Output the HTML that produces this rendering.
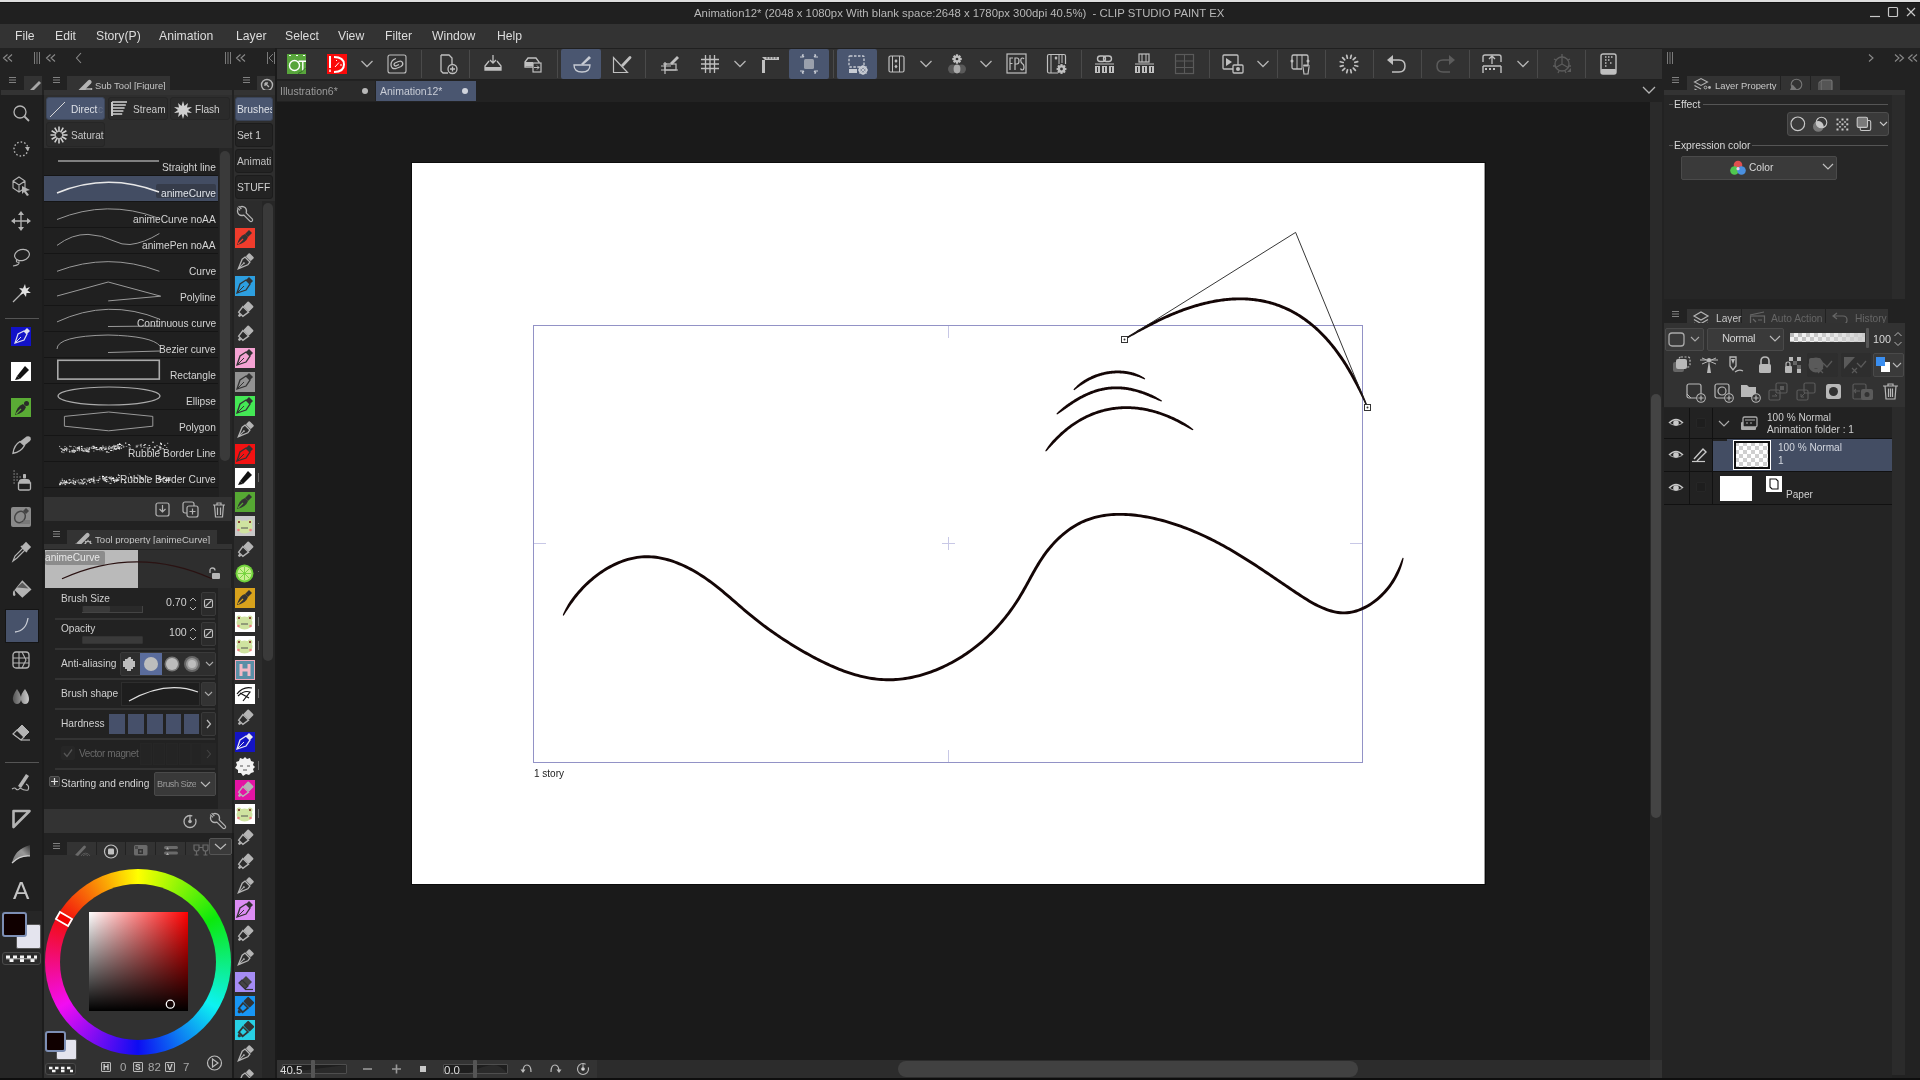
<!DOCTYPE html><html><head><meta charset="utf-8"><style>
*{margin:0;padding:0;box-sizing:border-box}
html,body{width:1920px;height:1080px;overflow:hidden;background:#1a1a1a;font-family:"Liberation Sans",sans-serif;color:#d0d0d0}
.a{position:absolute}
.t{position:absolute;white-space:nowrap;font-size:10.2px;line-height:12px;color:#cfcfcf;will-change:transform}
svg{position:absolute;overflow:visible}
</style></head><body><div class="a" style="left:0px;top:0px;width:1920px;height:2px;background:#dedede;"></div><div class="a" style="left:0px;top:2px;width:1920px;height:1px;background:#131313;"></div><div class="a" style="left:0px;top:3px;width:1920px;height:21px;background:#202020;"></div><div class="a" style="left:0px;top:24px;width:1920px;height:24px;background:#333333;"></div><div class="t" style="left:694px;top:7px;font-size:11.35px;color:#b8b8b8;">Animation12* (2048 x 1080px With blank space:2648 x 1780px 300dpi 40.5%)&nbsp; - CLIP STUDIO PAINT EX</div><svg style="left:1866px;top:6px;" width="54" height="14" viewBox="0 0 54 14"><path d="M4,10.5 H14" stroke="#c8c8c8" stroke-width="1.2"/><rect x="22.5" y="1.5" width="9" height="9" rx="1" fill="none" stroke="#c8c8c8" stroke-width="1.2"/><path d="M41,2 L49,10 M49,2 L41,10" stroke="#c8c8c8" stroke-width="1.2"/></svg><div class="t" style="left:15px;top:30px;font-size:12.2px;color:#dcdcdc;">File</div><div class="t" style="left:55px;top:30px;font-size:12.2px;color:#dcdcdc;">Edit</div><div class="t" style="left:96px;top:30px;font-size:12.2px;color:#dcdcdc;">Story(P)</div><div class="t" style="left:159px;top:30px;font-size:12.2px;color:#dcdcdc;">Animation</div><div class="t" style="left:236px;top:30px;font-size:12.2px;color:#dcdcdc;">Layer</div><div class="t" style="left:285px;top:30px;font-size:12.2px;color:#dcdcdc;">Select</div><div class="t" style="left:338px;top:30px;font-size:12.2px;color:#dcdcdc;">View</div><div class="t" style="left:385px;top:30px;font-size:12.2px;color:#dcdcdc;">Filter</div><div class="t" style="left:432px;top:30px;font-size:12.2px;color:#dcdcdc;">Window</div><div class="t" style="left:497px;top:30px;font-size:12.2px;color:#dcdcdc;">Help</div><div class="a" style="left:0px;top:48px;width:1920px;height:32px;background:#202020;"></div><div class="a" style="left:277px;top:49px;width:1385px;height:30px;background:#323232;"></div><div class="a" style="left:287px;top:54px;width:19px;height:20px;background:#58a53c;"></div><svg style="left:287px;top:54px;" width="19" height="20" viewBox="0 0 19 20"><circle cx="7.5" cy="11.5" r="5" fill="none" stroke="#fff" stroke-width="1.4"/><path d="M11.5,7.3 H19 M15.8,7.3 V16.5" stroke="#fff" stroke-width="1.4"/><path d="M2,1.5 h2 M9,1.5 h2 M16,1.5 h2" stroke="#fff" stroke-width="1"/><path d="M11,19.5 Q16,18 18.5,14" fill="none" stroke="#2f6e22" stroke-width="1"/></svg><div class="a" style="left:327px;top:54px;width:20px;height:20px;background:#fb0a0a;"></div><svg style="left:327px;top:54px;" width="20" height="20" viewBox="0 0 20 20"><path d="M3,2 V14" stroke="#fff" stroke-width="2"/><path d="M3,15.5 V18" stroke="#fff" stroke-width="1.5"/><path d="M7,3 Q17,3 17,10.5 Q17,18 7,18" fill="none" stroke="#fff" stroke-width="2"/><path d="M8,13 L12,8.5 M13,11 h2 M9,6 l1,1" stroke="#fff" stroke-width="1"/></svg><svg style="left:360px;top:59px;" width="14" height="10" viewBox="0 0 14 10"><path d="M1.5,2 L7,7.5 L12.5,2" fill="none" stroke="#b4b4b4" stroke-width="1.3"/></svg><svg style="left:387px;top:54px;" width="20" height="20" viewBox="0 0 20 20"><rect x="1" y="1" width="18" height="18" rx="2" fill="none" stroke="#c0c0c0" stroke-width="1.1"/><path d="M9,4.5 Q4,6 4,11 Q4.5,15.5 9,14.5 L14,12.5 Q16.5,11 15.5,8.5 Q14.5,6.5 11.5,7.5 L8,9 Q6.5,10 7.5,11.5 Q8.5,12.5 10,11.5 L12,10.5" fill="none" stroke="#c0c0c0" stroke-width="1.3"/></svg><div class="a" style="left:421px;top:50px;width:1px;height:28px;background:#4a4a4a;"></div><svg style="left:438px;top:53px;" width="20" height="22" viewBox="0 0 20 22"><path d="M3,2 H11 L14,5 V11 M3,2 V18 L5,20 H10" fill="none" stroke="#c0c0c0" stroke-width="1.3"/><circle cx="14.5" cy="16" r="4.5" fill="#323232" stroke="#c0c0c0" stroke-width="1.3"/><path d="M14.5,13.5 V18.5 M12,16 H17" stroke="#c0c0c0" stroke-width="1.3"/></svg><div class="a" style="left:469px;top:50px;width:1px;height:28px;background:#4a4a4a;"></div><svg style="left:483px;top:53px;" width="20" height="22" viewBox="0 0 20 22"><path d="M10,2 V10 M7,7 L10,10 L13,7" fill="none" stroke="#c0c0c0" stroke-width="1.3"/><path d="M6,8 L2,13 V17 H18 V13 L14,8" fill="none" stroke="#c0c0c0" stroke-width="1.3"/><rect x="2" y="14" width="16" height="3" fill="#c0c0c0"/></svg><svg style="left:523px;top:53px;" width="20" height="22" viewBox="0 0 20 22"><path d="M2,9 L5,5 H13 L16,9 V14 H2 Z" fill="none" stroke="#c0c0c0" stroke-width="1.3"/><rect x="2" y="9" width="8" height="4" fill="#c0c0c0"/><rect x="10" y="10" width="8" height="9" fill="#323232" stroke="#c0c0c0" stroke-width="1.2"/><path d="M11,14.5 H16 M14,12.5 L16,14.5 L14,16.5" fill="none" stroke="#c0c0c0" stroke-width="1"/></svg><div class="a" style="left:557px;top:50px;width:1px;height:28px;background:#4a4a4a;"></div><div class="a" style="left:561px;top:49px;width:40px;height:30px;background:#4a5670;border-radius:2px"></div><svg style="left:572px;top:53px;" width="20" height="22" viewBox="0 0 20 22"><path d="M2,12 Q10,12 18,12 Q18,19 10,19 Q2,19 2,12 Z" fill="none" stroke="#c8ccd4" stroke-width="1.3"/><path d="M9,11 L17,3 L19,5 L11,12" fill="#c8ccd4"/></svg><svg style="left:612px;top:53px;" width="20" height="22" viewBox="0 0 20 22"><path d="M1.5,4.5 V19.5 H15.5 Z" fill="none" stroke="#c0c0c0" stroke-width="1.2"/><path d="M9,12 L17,3.5 Q18,2.5 19,3.5 Q20,4.5 19,5.5 L11,14 Z" fill="#c0c0c0"/></svg><div class="a" style="left:645px;top:50px;width:1px;height:28px;background:#4a4a4a;"></div><svg style="left:659px;top:53px;" width="22" height="22" viewBox="0 0 22 22"><path d="M2,17 H19 M6,9 V21 M6,17 V11 M4,11 H8 M2,13 H12" fill="none" stroke="#c0c0c0" stroke-width="1.2"/><rect x="6" y="11" width="11" height="6" fill="none" stroke="#c0c0c0" stroke-width="1.2"/><path d="M11,10 L18,3 L20,5 L13,12 Z" fill="#c0c0c0"/></svg><svg style="left:700px;top:53px;" width="20" height="22" viewBox="0 0 20 22"><path d="M5.5,2 V20 M10,2 V20 M14.5,2 V20 M1,6.5 H19 M1,11 H19 M1,15.5 H19" stroke="#c0c0c0" stroke-width="1.3"/></svg><svg style="left:733px;top:59px;" width="14" height="10" viewBox="0 0 14 10"><path d="M1.5,2 L7,7.5 L12.5,2" fill="none" stroke="#b4b4b4" stroke-width="1.3"/></svg><svg style="left:760px;top:53px;" width="20" height="22" viewBox="0 0 20 22"><path d="M2,4 H19 V7 H2 Z M2,4 V20 H5 V7" fill="#c0c0c0"/><path d="M7,4 V6 M10,4 V6 M13,4 V6 M16,4 V6" stroke="#323232" stroke-width="0.8"/></svg><div class="a" style="left:789px;top:49px;width:40px;height:30px;background:#4a5670;border-radius:2px"></div><svg style="left:798px;top:53px;" width="22" height="22" viewBox="0 0 22 22"><rect x="6" y="6" width="10" height="10" rx="1.5" fill="#9aa0ac"/><path d="M2,4 H5 V1 M17,1 V4 H20 M2,18 H5 V21 M17,21 V18 H20 M4,2 L6,4 M18,2 L16,4 M4,20 L6,18 M18,20 L16,18" fill="none" stroke="#c8ccd4" stroke-width="1.1"/></svg><div class="a" style="left:833px;top:50px;width:1px;height:28px;background:#4a4a4a;"></div><div class="a" style="left:837px;top:49px;width:40px;height:30px;background:#4a5670;border-radius:2px"></div><svg style="left:847px;top:53px;" width="22" height="22" viewBox="0 0 22 22"><rect x="2" y="3" width="15" height="11" rx="1" fill="none" stroke="#c8ccd4" stroke-width="1.3" stroke-dasharray="2.5 1.5"/><rect x="2" y="16" width="8" height="4" fill="#c8ccd4"/><circle cx="16" cy="17" r="3.5" fill="none" stroke="#c8ccd4" stroke-width="2"/><path d="M16,12 V22 M11,17 H21 M12.5,13.5 L19.5,20.5 M19.5,13.5 L12.5,20.5" stroke="#c8ccd4" stroke-width="1"/></svg><svg style="left:888px;top:54px;" width="20" height="22" viewBox="0 0 20 22"><rect x="1" y="2" width="15" height="16" rx="1.5" fill="none" stroke="#c0c0c0" stroke-width="1.2"/><path d="M4.5,2 V18 M11.5,2 V18" stroke="#c0c0c0" stroke-width="1"/><path d="M8,5 L9.6,7 L8,9 L6.4,7 Z M8,10.5 L9.6,12.5 L8,14.5 L6.4,12.5 Z" fill="#c0c0c0"/></svg><svg style="left:919px;top:59px;" width="14" height="10" viewBox="0 0 14 10"><path d="M1.5,2 L7,7.5 L12.5,2" fill="none" stroke="#b4b4b4" stroke-width="1.3"/></svg><svg style="left:946px;top:53px;" width="22" height="22" viewBox="0 0 22 22"><circle cx="11" cy="6" r="3.6" fill="#c0c0c0"/><rect x="13.50" y="4.90" width="2.2" height="2.2" fill="#c0c0c0" transform="rotate(0.0 14.60 6.00)"/><rect x="12.45" y="7.45" width="2.2" height="2.2" fill="#c0c0c0" transform="rotate(45.0 13.55 8.55)"/><rect x="9.90" y="8.50" width="2.2" height="2.2" fill="#c0c0c0" transform="rotate(90.0 11.00 9.60)"/><rect x="7.35" y="7.45" width="2.2" height="2.2" fill="#c0c0c0" transform="rotate(135.0 8.45 8.55)"/><rect x="6.30" y="4.90" width="2.2" height="2.2" fill="#c0c0c0" transform="rotate(180.0 7.40 6.00)"/><rect x="7.35" y="2.35" width="2.2" height="2.2" fill="#c0c0c0" transform="rotate(225.0 8.45 3.45)"/><rect x="9.90" y="1.30" width="2.2" height="2.2" fill="#c0c0c0" transform="rotate(270.0 11.00 2.40)"/><rect x="12.45" y="2.35" width="2.2" height="2.2" fill="#c0c0c0" transform="rotate(315.0 13.55 3.45)"/><circle cx="11" cy="6" r="1.37" fill="#323232"/><circle cx="6.5" cy="16" r="4.5" fill="#5a5a5a"/><circle cx="15.5" cy="16" r="4.5" fill="#5a5a5a"/><ellipse cx="11" cy="16" rx="3.4" ry="4.4" fill="#aaaaaa"/></svg><svg style="left:979px;top:59px;" width="14" height="10" viewBox="0 0 14 10"><path d="M1.5,2 L7,7.5 L12.5,2" fill="none" stroke="#b4b4b4" stroke-width="1.3"/></svg><svg style="left:1006px;top:53px;" width="22" height="22" viewBox="0 0 22 22"><rect x="1" y="1" width="19" height="19" fill="none" stroke="#c0c0c0" stroke-width="1.2"/><path d="M7,5 H4 V17 M4,10.5 H6.5 M9,17 V5 H11 Q13,5 13,8 Q13,11 11,11 H9 M18,6 Q17.5,5 16.3,5 Q14.8,5 14.8,7.5 Q14.8,9.5 16.3,10.5 Q18,11.5 18,14 Q18,17 16.3,17 Q15,17 14.6,15.5" fill="none" stroke="#c0c0c0" stroke-width="1.2"/></svg><svg style="left:1046px;top:53px;" width="22" height="22" viewBox="0 0 22 22"><path d="M12,20 H3 Q1.5,20 1.5,18.5 V3 Q1.5,1.5 3,1.5 H18 Q19.5,1.5 19.5,3 V11" fill="none" stroke="#c0c0c0" stroke-width="1.2"/><path d="M5,1.5 V20 M13,1.5 V11 M16,1.5 V10" stroke="#c0c0c0" stroke-width="1"/><path d="M10,3 L11.5,5 L10,7 L8.5,5 Z" fill="#c0c0c0"/><circle cx="15.5" cy="16" r="3.8" fill="#c0c0c0"/><rect x="18.20" y="14.90" width="2.2" height="2.2" fill="#c0c0c0" transform="rotate(0.0 19.30 16.00)"/><rect x="17.09" y="17.59" width="2.2" height="2.2" fill="#c0c0c0" transform="rotate(45.0 18.19 18.69)"/><rect x="14.40" y="18.70" width="2.2" height="2.2" fill="#c0c0c0" transform="rotate(90.0 15.50 19.80)"/><rect x="11.71" y="17.59" width="2.2" height="2.2" fill="#c0c0c0" transform="rotate(135.0 12.81 18.69)"/><rect x="10.60" y="14.90" width="2.2" height="2.2" fill="#c0c0c0" transform="rotate(180.0 11.70 16.00)"/><rect x="11.71" y="12.21" width="2.2" height="2.2" fill="#c0c0c0" transform="rotate(225.0 12.81 13.31)"/><rect x="14.40" y="11.10" width="2.2" height="2.2" fill="#c0c0c0" transform="rotate(270.0 15.50 12.20)"/><rect x="17.09" y="12.21" width="2.2" height="2.2" fill="#c0c0c0" transform="rotate(315.0 18.19 13.31)"/><circle cx="15.5" cy="16" r="1.44" fill="#323232"/></svg><div class="a" style="left:1081px;top:50px;width:1px;height:28px;background:#4a4a4a;"></div><svg style="left:1094px;top:53px;" width="22" height="22" viewBox="0 0 22 22"><rect x="3.5" y="3" width="8" height="5.5" rx="2.75" fill="none" stroke="#c0c0c0" stroke-width="1.4"/><rect x="9.5" y="3" width="8" height="5.5" rx="2.75" fill="none" stroke="#c0c0c0" stroke-width="1.4"/><path d="M1,11 H20" stroke="#c0c0c0" stroke-width="1"/><rect x="1" y="13" width="5" height="7" fill="#c0c0c0"/><rect x="8" y="13" width="5" height="7" fill="#c0c0c0"/><rect x="15" y="13" width="5" height="7" fill="#c0c0c0"/><path d="M3.5,14 V19 M10.5,14 V19 M17.5,14 V19" stroke="#323232" stroke-width="1"/></svg><svg style="left:1134px;top:53px;" width="22" height="22" viewBox="0 0 22 22"><rect x="5" y="1" width="10" height="8" fill="none" stroke="#c0c0c0" stroke-width="1.2"/><path d="M8,1 V9 M12,1 V9 M1,11 H20" stroke="#c0c0c0" stroke-width="1"/><rect x="1" y="13" width="5" height="7" fill="#c0c0c0"/><rect x="8" y="13" width="5" height="7" fill="#c0c0c0"/><rect x="15" y="13" width="5" height="7" fill="#c0c0c0"/><path d="M3.5,14 V19 M10.5,14 V19 M17.5,14 V19" stroke="#323232" stroke-width="1"/></svg><svg style="left:1174px;top:53px;" width="22" height="22" viewBox="0 0 22 22"><rect x="1.5" y="1.5" width="18" height="19" fill="none" stroke="#5a5a5a" stroke-width="1.2"/><path d="M1.5,8 H19.5 M1.5,14.5 H19.5 M10.5,1.5 V20.5" stroke="#5a5a5a" stroke-width="1.1"/></svg><div class="a" style="left:1209px;top:50px;width:1px;height:28px;background:#4a4a4a;"></div><svg style="left:1222px;top:53px;" width="22" height="22" viewBox="0 0 22 22"><rect x="1" y="2" width="15" height="14" rx="1" fill="none" stroke="#c0c0c0" stroke-width="1.3"/><path d="M4,5 V13 L10,9 Z" fill="#c0c0c0"/><rect x="11" y="12" width="10" height="8" rx="1" fill="#323232" stroke="#c0c0c0" stroke-width="1.3"/><circle cx="16" cy="16" r="2" fill="#c0c0c0"/></svg><svg style="left:1256px;top:59px;" width="14" height="10" viewBox="0 0 14 10"><path d="M1.5,2 L7,7.5 L12.5,2" fill="none" stroke="#b4b4b4" stroke-width="1.3"/></svg><div class="a" style="left:1277px;top:50px;width:1px;height:28px;background:#4a4a4a;"></div><svg style="left:1290px;top:53px;" width="22" height="22" viewBox="0 0 22 22"><rect x="2" y="2" width="16" height="14" rx="1.5" fill="none" stroke="#c0c0c0" stroke-width="1.3"/><path d="M7,2 V16 M12,2 V16" stroke="#c0c0c0" stroke-width="1"/><circle cx="2" cy="8" r="1.5" fill="#c0c0c0"/><circle cx="18" cy="8" r="1.5" fill="#c0c0c0"/><rect x="12" y="12" width="8" height="9" fill="#323232"/><path d="M12,13 H20 M14,13 V12 H18 V13 M13,14 L14,21 H18 L19,14" fill="none" stroke="#c0c0c0" stroke-width="1.2"/></svg><div class="a" style="left:1325px;top:50px;width:1px;height:28px;background:#4a4a4a;"></div><svg style="left:1338px;top:53px;" width="22" height="22" viewBox="0 0 22 22"><path d="M16.8,12.5 L19.7,13.3" stroke="#c0c0c0" stroke-width="1.7" stroke-linecap="round"/><path d="M15.3,15.2 L17.4,17.4" stroke="#c0c0c0" stroke-width="1.7" stroke-linecap="round"/><path d="M12.6,16.8 L13.3,19.7" stroke="#c0c0c0" stroke-width="1.7" stroke-linecap="round"/><path d="M9.5,16.8 L8.7,19.7" stroke="#c0c0c0" stroke-width="1.7" stroke-linecap="round"/><path d="M6.8,15.3 L4.6,17.4" stroke="#c0c0c0" stroke-width="1.7" stroke-linecap="round"/><path d="M5.2,12.6 L2.3,13.3" stroke="#c0c0c0" stroke-width="1.7" stroke-linecap="round"/><path d="M5.2,9.5 L2.3,8.7" stroke="#c0c0c0" stroke-width="1.7" stroke-linecap="round"/><path d="M6.7,6.8 L4.6,4.6" stroke="#c0c0c0" stroke-width="1.7" stroke-linecap="round"/><path d="M9.4,5.2 L8.7,2.3" stroke="#c0c0c0" stroke-width="1.7" stroke-linecap="round"/><path d="M12.5,5.2 L13.3,2.3" stroke="#c0c0c0" stroke-width="1.7" stroke-linecap="round"/><path d="M15.2,6.7 L17.4,4.6" stroke="#c0c0c0" stroke-width="1.7" stroke-linecap="round"/><path d="M16.8,9.4 L19.7,8.7" stroke="#c0c0c0" stroke-width="1.7" stroke-linecap="round"/></svg><div class="a" style="left:1373px;top:50px;width:1px;height:28px;background:#4a4a4a;"></div><svg style="left:1386px;top:53px;" width="22" height="22" viewBox="0 0 22 22"><path d="M5,7 H13 Q19,7 19,13 Q19,19 13,19 H6" fill="none" stroke="#c0c0c0" stroke-width="1.5"/><path d="M1,7 L7,2 V12 Z" fill="#c0c0c0"/></svg><div class="a" style="left:1421px;top:50px;width:1px;height:28px;background:#4a4a4a;"></div><svg style="left:1434px;top:53px;" width="22" height="22" viewBox="0 0 22 22"><path d="M17,7 H9 Q3,7 3,13 Q3,19 9,19 H16" fill="none" stroke="#5c5c5c" stroke-width="1.5"/><path d="M21,7 L15,2 V12 Z" fill="#5c5c5c"/></svg><div class="a" style="left:1469px;top:50px;width:1px;height:28px;background:#4a4a4a;"></div><svg style="left:1482px;top:53px;" width="22" height="22" viewBox="0 0 22 22"><path d="M1,9 V4 Q1,2 3,2 H17 Q19,2 19,4 V9 M1,13 V20 M19,13 V20 M1,13 H19" fill="none" stroke="#c0c0c0" stroke-width="1.4"/><path d="M10,3 V11 M7,6 L10,3 L13,6" fill="none" stroke="#c0c0c0" stroke-width="1.3"/><path d="M3,16 h2 M7,16 h2 M11,16 h2" stroke="#c0c0c0" stroke-width="2"/></svg><svg style="left:1516px;top:59px;" width="14" height="10" viewBox="0 0 14 10"><path d="M1.5,2 L7,7.5 L12.5,2" fill="none" stroke="#b4b4b4" stroke-width="1.3"/></svg><div class="a" style="left:1537px;top:50px;width:1px;height:28px;background:#4a4a4a;"></div><svg style="left:1551px;top:53px;" width="22" height="22" viewBox="0 0 22 22"><circle cx="11" cy="11" r="7" fill="none" stroke="#5c5c5c" stroke-width="1.3"/><path d="M11,11 V3 M11,11 L18,15 M11,11 L4,15" stroke="#5c5c5c" stroke-width="1.2"/><path d="M11,1 V4 M3,6 L5,7 M19,6 L17,7 M2,13 H4 M18,13 H20 M7,20 L8,18 M15,20 L14,18" stroke="#5c5c5c" stroke-width="1.3"/><path d="M16,19 L20,15 V19 Z" fill="#5c5c5c"/></svg><div class="a" style="left:1585px;top:50px;width:1px;height:28px;background:#4a4a4a;"></div><svg style="left:1598px;top:53px;" width="22" height="22" viewBox="0 0 22 22"><rect x="3" y="1" width="15" height="20" rx="2" fill="none" stroke="#c0c0c0" stroke-width="1.4"/><rect x="3" y="16" width="15" height="5" rx="1" fill="#c0c0c0"/><path d="M7,4 h1.5 M10,4 h1.5 M13,4 h1.5 M7,7 h1.5 M10,7 h1.5 M7,10 h1.5 M12,10 h1.5 M7,13 h1.5" stroke="#c0c0c0" stroke-width="1.5"/></svg><div class="a" style="left:0px;top:48px;width:277px;height:1032px;background:#222222;"></div><svg style="left:2px;top:52px;" width="14" height="12" viewBox="0 0 14 12"><path d="M5.5,2.5 L1.5,6 L5.5,9.5 M10,2.5 L6,6 L10,9.5" fill="none" stroke="#8a8a8a" stroke-width="1.1"/></svg><svg style="left:33px;top:51px;" width="8" height="14" viewBox="0 0 8 14"><path d="M1.5,1 V13 M4,1 V13 M6.5,1 V13" stroke="#7a7a7a" stroke-width="1"/></svg><svg style="left:45px;top:52px;" width="14" height="12" viewBox="0 0 14 12"><path d="M5.5,2.5 L1.5,6 L5.5,9.5 M10,2.5 L6,6 L10,9.5" fill="none" stroke="#8a8a8a" stroke-width="1.1"/></svg><svg style="left:75px;top:52px;" width="8" height="12" viewBox="0 0 8 12"><path d="M6,1 L1.5,6 L6,11" fill="none" stroke="#8a8a8a" stroke-width="1.1"/></svg><svg style="left:224px;top:51px;" width="8" height="14" viewBox="0 0 8 14"><path d="M1.5,1 V13 M4,1 V13 M6.5,1 V13" stroke="#7a7a7a" stroke-width="1"/></svg><svg style="left:235px;top:52px;" width="14" height="12" viewBox="0 0 14 12"><path d="M5.5,2.5 L1.5,6 L5.5,9.5 M10,2.5 L6,6 L10,9.5" fill="none" stroke="#8a8a8a" stroke-width="1.1"/></svg><svg style="left:266px;top:51px;" width="10" height="14" viewBox="0 0 10 14"><path d="M1.5,1 V13 M8.5,1 V13 M7,3 L3,7 L7,11" fill="none" stroke="#7a7a7a" stroke-width="1"/></svg><div class="a" style="left:0px;top:76px;width:42px;height:14px;background:#222222;"></div><div class="a" style="left:24px;top:76px;width:18px;height:14px;background:#333333;"></div><svg style="left:9px;top:77px;" width="10" height="9" viewBox="0 0 10 9"><path d="M0,0.5 H7 M0,3 H7 M0,5.5 H7" stroke="#8c8c8c" stroke-width="0.9"/></svg><svg style="left:26px;top:78px;" width="16" height="14" viewBox="0 0 16 14"><path d="M3,13 L13,3 L15,5 L5,15 Z" fill="#a8a8a8"/><path d="M2,14 L4,13 L3,12 Z" fill="#a8a8a8"/></svg><div class="a" style="left:1px;top:90px;width:41px;height:5px;background:#333333;"></div><div class="a" style="left:0px;top:95px;width:42px;height:816px;background:#202020;"></div><div class="a" style="left:42px;top:95px;width:2px;height:985px;background:#1c1c1c;"></div><div class="a" style="left:0px;top:911px;width:42px;height:169px;background:#262626;"></div><svg style="left:11px;top:103px;" width="20" height="20" viewBox="0 0 20 20"><circle cx="9" cy="9" r="6" fill="none" stroke="#b4b4b4" stroke-width="1.3"/><path d="M13.5,13.5 L18,18" stroke="#b4b4b4" stroke-width="1.8"/></svg><svg style="left:11px;top:139px;" width="20" height="20" viewBox="0 0 20 20"><circle cx="10" cy="10" r="7" fill="none" stroke="#b4b4b4" stroke-width="1.4" stroke-dasharray="1.6 2"/><path d="M14,8 L19,8 L16.5,12 Z" fill="#b4b4b4"/></svg><svg style="left:11px;top:175px;" width="20" height="20" viewBox="0 0 20 20"><path d="M2,6 L8,2 L14,6 L14,13 L8,17 L2,13 Z M2,6 L8,10 L14,6 M8,10 V17" fill="none" stroke="#b4b4b4" stroke-width="1.1"/><path d="M11,11 L19,15 L15,16 L18,20 L16,21 L13,17 L11,19 Z" fill="#b4b4b4"/></svg><svg style="left:11px;top:211px;" width="20" height="20" viewBox="0 0 20 20"><path d="M10,2 V18 M2,10 H18" stroke="#b4b4b4" stroke-width="1.3"/><path d="M10,0 L13,4 H7 Z M10,20 L13,16 H7 Z M0,10 L4,7 V13 Z M20,10 L16,7 V13 Z" fill="#b4b4b4"/></svg><svg style="left:11px;top:247px;" width="20" height="20" viewBox="0 0 20 20"><ellipse cx="11" cy="8" rx="7.5" ry="5.5" fill="none" stroke="#b4b4b4" stroke-width="1.2" transform="rotate(-15 11 8)"/><path d="M6,12 Q4,16 8,15 Q9,18 2,19" fill="none" stroke="#b4b4b4" stroke-width="1.1"/></svg><svg style="left:11px;top:283px;" width="20" height="20" viewBox="0 0 20 20"><path d="M2,19 L11,10" stroke="#b4b4b4" stroke-width="1.3"/><path d="M14,1 L15,5.5 L19,4 L16.5,7.5 L20,10 L15.5,10 L15,14 L12.5,10.5 L9,12 L11,8 L8,5 L12,5.5 Z" fill="#e0e0e0"/></svg><div class="a" style="left:11px;top:327px;width:20px;height:19px;background:#1212c8;"></div><svg style="left:11px;top:327px;" width="20" height="20" viewBox="0 0 20 20"><path d="M4,16 L7,7 L13,4 L16,7 L13,13 Z" fill="none" stroke="#dde" stroke-width="1.2"/><path d="M13,4 L16,1 L19,4 L16,7" fill="#dde"/><path d="M4,16 L10,10" stroke="#dde" stroke-width="1"/></svg><div class="a" style="left:11px;top:362px;width:20px;height:19px;background:#ffffff;"></div><svg style="left:11px;top:362px;" width="20" height="20" viewBox="0 0 20 20"><path d="M6,14 L14,4 L18,8 L9,17 Z" fill="#111"/><path d="M4,18 L6,14 L9,17 Z" fill="#111"/></svg><div class="a" style="left:11px;top:398px;width:20px;height:19px;background:#5aab35;"></div><svg style="left:11px;top:398px;" width="20" height="20" viewBox="0 0 20 20"><path d="M4,17 Q6,8 12,6 L15,9 Q13,15 4,17 Z" fill="#2a2a2a"/><circle cx="15.5" cy="5.5" r="2.5" fill="#2a2a2a"/><path d="M5,16 L10,11" stroke="#5aab35" stroke-width="1.2"/></svg><svg style="left:11px;top:434px;" width="20" height="20" viewBox="0 0 20 20"><path d="M2,19.3 Q3,11 9,7.5 L13.5,11.5 Q10,18 2,19.3 Z" fill="none" stroke="#b4b4b4" stroke-width="1.4"/><path d="M9,7.5 L15.5,2.5 Q18,1.5 19.5,3.5 Q20.5,5.5 19,7 L13.5,11.5 Z" fill="#b4b4b4"/></svg><svg style="left:11px;top:470px;" width="20" height="20" viewBox="0 0 20 20"><path d="M7.5,13 H19.5 V18.5 Q19.5,20 18,20 H9 Q7.5,20 7.5,18.5 Z" fill="none" stroke="#b4b4b4" stroke-width="1.3"/><path d="M7.5,13 Q7.5,9 11,9 H16 Q19.5,9 19.5,13 Z" fill="#b4b4b4"/><rect x="12" y="4" width="3" height="4.5" rx="0.8" fill="#b4b4b4"/><path d="M2.5,1 h1.2 M2.5,4 h1.2 M5.5,4 h1.2 M2.5,7 h1.2 M5.5,7 h1.2 M8.5,7 h1.2 M2.5,10 h1.2 M5.5,10 h1.2 M2.5,13 h1.2" stroke="#b4b4b4" stroke-width="1.2"/></svg><div class="a" style="left:11px;top:507px;width:20px;height:20px;background:#8a8a8a;border-radius:2px"></div><svg style="left:11px;top:506px;" width="20" height="20" viewBox="0 0 20 20"><ellipse cx="9" cy="11" rx="5" ry="6" fill="none" stroke="#444" stroke-width="1.5" transform="rotate(35 9 11)"/><path d="M12,5 L15,2 L18,5 L15,8 Z" fill="#444"/><path d="M10,17 L19,17 M12,15 L19,15" stroke="#666" stroke-width="1"/></svg><svg style="left:11px;top:542px;" width="20" height="20" viewBox="0 0 20 20"><path d="M2,19 L4,14 L12,6 L14,8 L6,16 Z" fill="none" stroke="#b4b4b4" stroke-width="1.2"/><path d="M11,5 L15,1 L19,5 L15,9 Z M10,4 L16,10" fill="#b4b4b4" stroke="#b4b4b4" stroke-width="1.6"/></svg><svg style="left:11px;top:578px;" width="20" height="20" viewBox="0 0 20 20"><path d="M11.3,2.2 L20.5,11.4 L11.3,19.8 L3.5,12 Z" fill="#b4b4b4"/><path d="M6,9.5 L11.3,4.5 L17.5,10.5 Z" fill="#5a5a5a"/><path d="M3.5,12 Q1.5,13 2,17 Q3,19 4.5,17 Z" fill="#b4b4b4"/></svg><div class="a" style="left:5px;top:609px;width:34px;height:34px;background:#47526a;border:1px solid #151515"></div><svg style="left:11px;top:615px;" width="20" height="20" viewBox="0 0 20 20"><path d="M4,17 Q15,16 17,3" fill="none" stroke="#c8ccd4" stroke-width="1.3"/></svg><svg style="left:11px;top:650px;" width="20" height="20" viewBox="0 0 20 20"><rect x="2" y="2" width="16" height="16" rx="3" fill="none" stroke="#b4b4b4" stroke-width="1.3"/><path d="M2,8 H18 M2,13 H18 M8,2 V18 M11,2 L15,10 L11,18" fill="none" stroke="#b4b4b4" stroke-width="1.1"/></svg><svg style="left:11px;top:686px;" width="20" height="20" viewBox="0 0 20 20"><defs><linearGradient id="bg1" x1="0" x2="1"><stop offset="0" stop-color="#555"/><stop offset="1" stop-color="#ccc"/></linearGradient></defs><path d="M6,3 Q1,10 2,14 Q3,18 6,18 Q9,18 10,14 Q11,18 14,18 Q18,18 18,13 Q18,9 14,3 Q10,8 10,11 Q9,7 6,3 Z" fill="url(#bg1)"/></svg><svg style="left:11px;top:722px;" width="20" height="20" viewBox="0 0 20 20"><path d="M2,12 L11,3 L18,10 L10,18 Z" fill="#b4b4b4" stroke="#b4b4b4" stroke-width="1"/><path d="M2,12 L6,8 L13,15 L10,18 Z" fill="#202020" stroke="#b4b4b4" stroke-width="1.2"/><path d="M10,18 H19" stroke="#b4b4b4" stroke-width="1.2"/></svg><svg style="left:11px;top:772px;" width="20" height="20" viewBox="0 0 20 20"><path d="M7,14 L15,2 L18,4 L10,16 Z" fill="#b4b4b4"/><path d="M1,17 Q4,15 5,17 Q7,19 9,16 Q14,19 17,18 Q19,14 15,12" fill="none" stroke="#b4b4b4" stroke-width="1.1"/></svg><svg style="left:11px;top:808px;" width="20" height="20" viewBox="0 0 20 20"><path d="M2.5,3 L18.5,3 L2.5,19 Z" fill="none" stroke="#b4b4b4" stroke-width="2.6" stroke-linejoin="round"/></svg><svg style="left:11px;top:844px;" width="20" height="20" viewBox="0 0 20 20"><defs><linearGradient id="bg2" x1="0" x2="1" y1="1" y2="0"><stop offset="0" stop-color="#777"/><stop offset="0.6" stop-color="#999"/><stop offset="1" stop-color="#333"/></linearGradient></defs><path d="M1,19 Q4,5 19,1 L19,12 Q9,11 1,19 Z" fill="url(#bg2)"/><path d="M1,19 Q9,11 19,12" fill="none" stroke="#d0d0d0" stroke-width="1.2"/></svg><div class="t" style="left:13px;top:885px;font-size:24.5px;color:#c4c4c4;">A</div><div class="a" style="left:5px;top:318px;width:34px;height:1px;background:#555555;"></div><div class="a" style="left:5px;top:762px;width:34px;height:1px;background:#555555;"></div><div class="a" style="left:16px;top:924px;width:25px;height:25px;background:#e4e4ee;border:1px solid #555;border-radius:2px"></div><div class="a" style="left:2px;top:912px;width:25px;height:25px;background:#100000;border:2px solid #7d8fb5;border-radius:3px"></div><div class="a" style="left:2px;top:952px;width:39px;height:13px;background:#2b2b2b;border:1px solid #4a4a4a;border-radius:3px"></div><svg style="left:5px;top:955px;" width="33" height="8" viewBox="0 0 33 8"><path d="M1,2 H32" stroke="#f4f4f4" stroke-width="3" stroke-dasharray="4 3"/><path d="M1,5.5 H32" stroke="#f4f4f4" stroke-width="3" stroke-dasharray="0 3.5 4 3"/><path d="M1,3.8 H32" stroke="#bbbbbb" stroke-width="1"/></svg><div class="a" style="left:44px;top:76px;width:188px;height:14px;background:#222222;"></div><svg style="left:53px;top:77px;" width="10" height="9" viewBox="0 0 10 9"><path d="M0,0.5 H7 M0,3 H7 M0,5.5 H7" stroke="#8c8c8c" stroke-width="0.9"/></svg><div class="a" style="left:67px;top:76px;width:103px;height:14px;background:#333333;"></div><svg style="left:74px;top:77px;" width="22" height="18" viewBox="0 0 22 18"><path d="M3.5,14 L14,3.5 Q15.5,2 17,3.5 Q18.5,5 17,6.5 L6.5,17 Z" fill="#b4b4b4"/><path d="M1,17.5 L3,14 L6,17 Z" fill="#b4b4b4"/><path d="M10,12 H18 M10,16.5 H18 M11,11 V17.5 M17.5,11 V17.5" stroke="#b4b4b4" stroke-width="1.4"/></svg><div class="t" style="left:95px;top:80px;font-size:9.4px;color:#c4c4c4;">Sub Tool [Figure]</div><div class="a" style="left:44px;top:90px;width:188px;height:5px;background:#333333;"></div><div class="a" style="left:44px;top:95px;width:188px;height:53px;background:#2e2e2e;"></div><div class="a" style="left:46px;top:97px;width:59px;height:23px;background:#4a5670;border:1px solid #3c465a;border-radius:3px"></div><div class="a" style="left:108px;top:97px;width:60px;height:23px;background:#2b2b2b;border:1px solid #262626;border-radius:3px"></div><div class="a" style="left:170px;top:97px;width:60px;height:23px;background:#2b2b2b;border:1px solid #262626;border-radius:3px"></div><div class="a" style="left:46px;top:122px;width:59px;height:25px;background:#2b2b2b;border:1px solid #262626;border-radius:3px"></div><svg style="left:48px;top:99px;" width="20" height="20" viewBox="0 0 20 20"><path d="M2,18 L17,3" stroke="#d8d8d8" stroke-width="1"/></svg><div class="t" style="left:71px;top:104px;font-size:10.1px;color:#dde0e6;">Direct</div><div class="t" style="left:98px;top:104px;font-size:10.1px;color:#6a7488">c</div><svg style="left:111px;top:101px;" width="18" height="16" viewBox="0 0 18 16"><path d="M1,1 H16.0" stroke="#c8c8c8" stroke-width="1.6"/><path d="M1,4 H14.8" stroke="#c8c8c8" stroke-width="1.6"/><path d="M1,7 H13.6" stroke="#c8c8c8" stroke-width="1.6"/><path d="M1,10 H12.4" stroke="#c8c8c8" stroke-width="1.6"/><path d="M1,13 H11.2" stroke="#c8c8c8" stroke-width="1.6"/><path d="M1,1 V15" stroke="#c8c8c8" stroke-width="2"/></svg><div class="t" style="left:133px;top:104px;font-size:10.1px;color:#c8c8c8;">Stream</div><svg style="left:174px;top:101px;" width="18" height="17" viewBox="0 0 18 17"><path d="M9,0 L10.5,5 L14,2 L13,6.5 L18,6 L14,9 L18,12 L13,11.5 L14,16 L10.5,13 L9,18 L7.5,13 L4,16 L5,11.5 L0,12 L4,9 L0,6 L5,6.5 L4,2 L7.5,5 Z" fill="#d0d0d0"/></svg><div class="t" style="left:195px;top:104px;font-size:10.1px;color:#d0d0d0;">Flash</div><svg style="left:50px;top:126px;" width="18" height="18" viewBox="0 0 18 18"><path d="M12.0,9.0 L17.5,9.0" stroke="#d0d0d0" stroke-width="1.6"/><path d="M11.598074374748817,10.50000318108781 L16.36121072845498,13.250009013082124" stroke="#d0d0d0" stroke-width="1.6"/><path d="M10.499993637817637,11.598079884550629 L13.249981973816638,16.36122633956012" stroke="#d0d0d0" stroke-width="1.6"/><path d="M8.99998898038469,11.99999999997976 L8.999968777756623,17.49999999994266" stroke="#d0d0d0" stroke-width="1.6"/><path d="M7.499987275662259,11.59806886491195 L4.749963947709734,16.361195117250524" stroke="#d0d0d0" stroke-width="1.6"/><path d="M6.401914605682612,10.499984094527226 L1.6387580494340686,13.249954934493811" stroke="#d0d0d0" stroke-width="1.6"/><path d="M6.000000000080955,8.999977960769382 L0.5000000002293721,8.999937555513247" stroke="#d0d0d0" stroke-width="1.6"/><path d="M6.401936644959971,7.499977732432566 L1.6388204940532507,4.7499369085589365" stroke="#d0d0d0" stroke-width="1.6"/><path d="M7.500025448783421,6.401909095950909 L4.7500721048863594,1.6387424385275757" stroke="#d0d0d0" stroke-width="1.6"/><path d="M9.00003305884593,6.000000000182148 L9.000093666730132,0.5000000005160867" stroke="#d0d0d0" stroke-width="1.6"/><path d="M10.500031810776889,6.401942154866947 L13.250090130534522,1.638836105456349" stroke="#d0d0d0" stroke-width="1.6"/><path d="M11.59809641374574,7.500034992114308 L16.361273172279596,4.750099144323874" stroke="#d0d0d0" stroke-width="1.6"/></svg><div class="t" style="left:71px;top:130px;font-size:10.1px;color:#c8c8c8;">Saturat</div><div class="a" style="left:44px;top:148px;width:188px;height:349px;background:#202020;"></div><div class="a" style="left:219px;top:148px;width:13px;height:349px;background:#262626;"></div><div class="a" style="left:220px;top:151px;width:10px;height:310px;background:#3a3a3a;border-radius:5px"></div><div class="a" style="left:44px;top:175px;width:174px;height:1px;background:#151515;"></div><div class="t" style="right:1704px;top:162px;font-size:10.2px;color:#d4d4d4;">Straight line</div><div class="a" style="left:44px;top:176px;width:174px;height:25px;background:#434d63;"></div><div class="a" style="left:156px;top:184px;width:60px;height:14px;background:#363c4a;border-radius:2px"></div><div class="a" style="left:44px;top:201px;width:174px;height:1px;background:#151515;"></div><div class="t" style="right:1704px;top:188px;font-size:10.2px;color:#e0e4ea;">animeCurve</div><div class="a" style="left:44px;top:227px;width:174px;height:1px;background:#151515;"></div><div class="t" style="right:1704px;top:214px;font-size:10.2px;color:#d4d4d4;">animeCurve noAA</div><div class="a" style="left:44px;top:253px;width:174px;height:1px;background:#151515;"></div><div class="t" style="right:1704px;top:240px;font-size:10.2px;color:#d4d4d4;">animePen noAA</div><div class="a" style="left:44px;top:279px;width:174px;height:1px;background:#151515;"></div><div class="t" style="right:1704px;top:266px;font-size:10.2px;color:#d4d4d4;">Curve</div><div class="a" style="left:44px;top:305px;width:174px;height:1px;background:#151515;"></div><div class="t" style="right:1704px;top:292px;font-size:10.2px;color:#d4d4d4;">Polyline</div><div class="a" style="left:44px;top:331px;width:174px;height:1px;background:#151515;"></div><div class="t" style="right:1704px;top:318px;font-size:10.2px;color:#d4d4d4;">Continuous curve</div><div class="a" style="left:44px;top:357px;width:174px;height:1px;background:#151515;"></div><div class="t" style="right:1704px;top:344px;font-size:10.2px;color:#d4d4d4;">Bezier curve</div><div class="a" style="left:44px;top:383px;width:174px;height:1px;background:#151515;"></div><div class="t" style="right:1704px;top:370px;font-size:10.2px;color:#d4d4d4;">Rectangle</div><div class="a" style="left:44px;top:409px;width:174px;height:1px;background:#151515;"></div><div class="t" style="right:1704px;top:396px;font-size:10.2px;color:#d4d4d4;">Ellipse</div><div class="a" style="left:44px;top:435px;width:174px;height:1px;background:#151515;"></div><div class="t" style="right:1704px;top:422px;font-size:10.2px;color:#d4d4d4;">Polygon</div><div class="a" style="left:44px;top:461px;width:174px;height:1px;background:#151515;"></div><div class="t" style="right:1704px;top:448px;font-size:10.2px;color:#d4d4d4;">Rubble Border Line</div><div class="a" style="left:44px;top:487px;width:174px;height:1px;background:#151515;"></div><div class="t" style="right:1704px;top:474px;font-size:10.2px;color:#d4d4d4;">Rubble Border Curve</div><svg style="left:44px;top:150px;" width="130" height="26" viewBox="0 0 130 26"><path d="M14,11 H115" stroke="#a0a0a0" stroke-width="1.6"/></svg><svg style="left:44px;top:176px;" width="130" height="26" viewBox="0 0 130 26"><path d="M13,17 Q63,-4 115,16" fill="none" stroke="#e8e8e8" stroke-width="1.5"/></svg><svg style="left:44px;top:202px;" width="130" height="26" viewBox="0 0 130 26"><path d="M13,17.5 Q63,-3 114,16" fill="none" stroke="#9a9a9a" stroke-width="1"/></svg><svg style="left:44px;top:228px;" width="130" height="26" viewBox="0 0 130 26"><path d="M13,17.4 Q28,6 44,6.4 Q58,7 70,13 Q78,17 86,16.5 Q100,15 115.4,5.5" fill="none" stroke="#9a9a9a" stroke-width="1"/></svg><svg style="left:44px;top:254px;" width="130" height="26" viewBox="0 0 130 26"><path d="M13,17.3 Q64,-2 115.4,17.3" fill="none" stroke="#9a9a9a" stroke-width="1"/></svg><svg style="left:44px;top:280px;" width="130" height="26" viewBox="0 0 130 26"><path d="M13,16 L64.2,2 L116.7,16.2 L64.2,20.9" fill="none" stroke="#9a9a9a" stroke-width="1"/></svg><svg style="left:44px;top:306px;" width="130" height="26" viewBox="0 0 130 26"><path d="M13,15.9 Q64,-8 116,13.3 M64,20.5 L116,20" fill="none" stroke="#9a9a9a" stroke-width="1"/></svg><svg style="left:44px;top:332px;" width="130" height="26" viewBox="0 0 130 26"><path d="M13,17 Q13,4 64,3 Q108,4 116,14 M64,20.5 L116,19" fill="none" stroke="#9a9a9a" stroke-width="1"/></svg><svg style="left:44px;top:358px;" width="130" height="26" viewBox="0 0 130 26"><rect x="13.8" y="2.3" width="101.5" height="18.8" fill="none" stroke="#aaaaaa" stroke-width="1.6"/></svg><svg style="left:44px;top:384px;" width="130" height="26" viewBox="0 0 130 26"><ellipse cx="65" cy="12" rx="51" ry="9" fill="none" stroke="#aaaaaa" stroke-width="1.2"/></svg><svg style="left:44px;top:410px;" width="130" height="26" viewBox="0 0 130 26"><path d="M20.4,6.4 L64.7,2 L108.8,6.4 V16.2 L64.7,20.8 L20.4,16.2 Z" fill="none" stroke="#9a9a9a" stroke-width="1"/></svg><svg style="left:44px;top:436px;" width="130" height="26" viewBox="0 0 130 26"><rect x="29.8" y="14.7" width="1.2" height="0.8" fill="#9a9a9a"/><rect x="56.8" y="12.8" width="1.6" height="1" fill="#ffffff"/><rect x="17.5" y="13.0" width="2" height="0.8" fill="#9a9a9a"/><rect x="99.0" y="9.2" width="2" height="0.8" fill="#c8c8c8"/><rect x="40.4" y="13.2" width="1.2" height="0.8" fill="#9a9a9a"/><rect x="85.7" y="12.0" width="0.8" height="1.2" fill="#c8c8c8"/><rect x="113.5" y="13.9" width="2" height="1" fill="#e8e8e8"/><rect x="48.4" y="9.8" width="2" height="1" fill="#ffffff"/><rect x="67.8" y="10.3" width="1.6" height="1" fill="#e8e8e8"/><rect x="55.4" y="14.4" width="1.2" height="0.8" fill="#9a9a9a"/><rect x="33.0" y="13.8" width="0.8" height="1" fill="#ffffff"/><rect x="48.9" y="11.3" width="2" height="1.2" fill="#9a9a9a"/><rect x="36.9" y="13.9" width="2" height="0.8" fill="#9a9a9a"/><rect x="71.5" y="12.5" width="1.6" height="1" fill="#ffffff"/><rect x="57.2" y="11.7" width="2" height="0.8" fill="#e8e8e8"/><rect x="61.9" y="15.3" width="2" height="1.2" fill="#e8e8e8"/><rect x="34.9" y="10.8" width="0.8" height="1.2" fill="#c8c8c8"/><rect x="18.6" y="14.0" width="0.8" height="1" fill="#ffffff"/><rect x="44.6" y="13.0" width="1.2" height="0.8" fill="#e8e8e8"/><rect x="32.6" y="12.0" width="2" height="0.8" fill="#c8c8c8"/><rect x="27.6" y="15.6" width="1.2" height="1" fill="#c8c8c8"/><rect x="61.3" y="12.5" width="2" height="0.8" fill="#9a9a9a"/><rect x="17.0" y="15.0" width="1" height="1" fill="#9a9a9a"/><rect x="74.9" y="12.4" width="1" height="1.2" fill="#9a9a9a"/><rect x="39.6" y="11.9" width="2" height="1" fill="#9a9a9a"/><rect x="21.5" y="12.0" width="1.2" height="0.8" fill="#e8e8e8"/><rect x="118.3" y="12.1" width="1.6" height="1.2" fill="#c8c8c8"/><rect x="29.3" y="10.2" width="2" height="0.8" fill="#9a9a9a"/><rect x="33.9" y="11.8" width="2" height="1.2" fill="#ffffff"/><rect x="56.6" y="11.7" width="1.6" height="1.2" fill="#e8e8e8"/><rect x="69.2" y="12.9" width="1.6" height="1" fill="#9a9a9a"/><rect x="16.9" y="12.2" width="1.2" height="0.8" fill="#e8e8e8"/><rect x="37.1" y="11.8" width="1.2" height="1.2" fill="#e8e8e8"/><rect x="52.3" y="13.0" width="1.6" height="1.2" fill="#c8c8c8"/><rect x="115.6" y="11.6" width="2" height="1" fill="#e8e8e8"/><rect x="22.2" y="14.1" width="1" height="1.2" fill="#e8e8e8"/><rect x="44.5" y="12.9" width="1.2" height="1.2" fill="#c8c8c8"/><rect x="55.5" y="11.7" width="2" height="1.2" fill="#9a9a9a"/><rect x="29.9" y="14.2" width="2" height="0.8" fill="#c8c8c8"/><rect x="19.3" y="16.3" width="1" height="0.8" fill="#c8c8c8"/><rect x="27.6" y="14.6" width="2" height="1" fill="#ffffff"/><rect x="116.8" y="8.0" width="1.2" height="0.8" fill="#ffffff"/><rect x="25.1" y="13.6" width="0.8" height="0.8" fill="#e8e8e8"/><rect x="41.4" y="14.4" width="0.8" height="1" fill="#e8e8e8"/><rect x="108.0" y="5.7" width="2" height="1" fill="#c8c8c8"/><rect x="37.8" y="12.7" width="1.2" height="1.2" fill="#c8c8c8"/><rect x="64.5" y="12.5" width="1.2" height="1" fill="#ffffff"/><rect x="22.1" y="12.4" width="1.6" height="0.8" fill="#c8c8c8"/><rect x="38.7" y="14.8" width="2" height="1.2" fill="#9a9a9a"/><rect x="42.1" y="14.8" width="0.8" height="1" fill="#ffffff"/><rect x="123.2" y="6.8" width="1" height="1" fill="#c8c8c8"/><rect x="19.5" y="14.1" width="1" height="1" fill="#c8c8c8"/><rect x="42.0" y="14.5" width="2" height="0.8" fill="#e8e8e8"/><rect x="39.2" y="14.1" width="1" height="1" fill="#ffffff"/><rect x="44.5" y="14.4" width="0.8" height="1.2" fill="#ffffff"/><rect x="47.0" y="10.7" width="1.2" height="1" fill="#9a9a9a"/><rect x="109.9" y="10.5" width="0.8" height="1.2" fill="#e8e8e8"/><rect x="34.8" y="14.5" width="1" height="0.8" fill="#c8c8c8"/><rect x="48.6" y="11.8" width="2" height="1" fill="#e8e8e8"/><rect x="115.2" y="10.6" width="2" height="1.2" fill="#e8e8e8"/><rect x="34.6" y="13.2" width="1.6" height="1.2" fill="#e8e8e8"/><rect x="20.3" y="14.1" width="0.8" height="1.2" fill="#9a9a9a"/><rect x="74.6" y="11.4" width="1.6" height="1" fill="#e8e8e8"/><rect x="43.4" y="11.3" width="0.8" height="1.2" fill="#9a9a9a"/><rect x="24.8" y="15.3" width="1.6" height="0.8" fill="#e8e8e8"/><rect x="73.2" y="8.1" width="1.6" height="1.2" fill="#e8e8e8"/><rect x="41.2" y="12.8" width="1.6" height="1.2" fill="#9a9a9a"/><rect x="120.2" y="8.8" width="1.2" height="1.2" fill="#e8e8e8"/><rect x="20.3" y="11.9" width="0.8" height="1.2" fill="#c8c8c8"/><rect x="32.5" y="13.4" width="1.2" height="1" fill="#c8c8c8"/><rect x="92.1" y="9.7" width="2" height="1.2" fill="#9a9a9a"/><rect x="34.4" y="10.8" width="1.2" height="1" fill="#e8e8e8"/><rect x="58.3" y="9.6" width="1.2" height="1" fill="#e8e8e8"/><rect x="74.9" y="12.3" width="0.8" height="1" fill="#ffffff"/><rect x="44.4" y="12.6" width="0.8" height="0.8" fill="#ffffff"/><rect x="64.0" y="16.0" width="1.6" height="1" fill="#9a9a9a"/><rect x="33.1" y="11.1" width="1.2" height="1" fill="#e8e8e8"/><rect x="73.7" y="10.5" width="0.8" height="1.2" fill="#c8c8c8"/><rect x="45.5" y="11.2" width="1" height="1.2" fill="#9a9a9a"/><rect x="31.3" y="14.3" width="1" height="1" fill="#c8c8c8"/><rect x="79.4" y="10.2" width="1" height="1.2" fill="#c8c8c8"/><rect x="69.0" y="14.5" width="0.8" height="0.8" fill="#9a9a9a"/><rect x="37.5" y="14.2" width="0.8" height="0.8" fill="#ffffff"/><rect x="75.0" y="7.1" width="1" height="0.8" fill="#c8c8c8"/><rect x="73.1" y="12.2" width="0.8" height="0.8" fill="#9a9a9a"/><rect x="27.4" y="14.5" width="2" height="0.8" fill="#c8c8c8"/><rect x="84.9" y="9.3" width="2" height="0.8" fill="#9a9a9a"/><rect x="81.1" y="6.5" width="1.2" height="1.2" fill="#e8e8e8"/><rect x="64.4" y="11.8" width="2" height="0.8" fill="#c8c8c8"/><rect x="72.9" y="9.5" width="1.6" height="1" fill="#ffffff"/><rect x="69.2" y="10.1" width="1" height="1.2" fill="#c8c8c8"/><rect x="84.3" y="8.2" width="1.6" height="1" fill="#e8e8e8"/><rect x="99.4" y="10.9" width="2" height="0.8" fill="#c8c8c8"/><rect x="115.4" y="9.8" width="1.2" height="0.8" fill="#9a9a9a"/><rect x="66.4" y="13.9" width="2" height="1" fill="#ffffff"/><rect x="54.1" y="13.0" width="1.6" height="0.8" fill="#e8e8e8"/><rect x="70.8" y="12.8" width="1.6" height="1.2" fill="#c8c8c8"/><rect x="37.8" y="13.8" width="0.8" height="1.2" fill="#c8c8c8"/><rect x="66.5" y="11.3" width="2" height="1.2" fill="#ffffff"/><rect x="33.5" y="11.5" width="2" height="1" fill="#c8c8c8"/><rect x="76.7" y="11.6" width="1.2" height="1.2" fill="#e8e8e8"/><rect x="43.5" y="15.2" width="2" height="1.2" fill="#e8e8e8"/><rect x="107.8" y="12.8" width="1.2" height="1" fill="#e8e8e8"/><rect x="115.4" y="13.0" width="2" height="1" fill="#9a9a9a"/><rect x="72.9" y="11.0" width="1.6" height="1" fill="#c8c8c8"/><rect x="58.7" y="11.0" width="1.6" height="0.8" fill="#e8e8e8"/><rect x="19.9" y="13.5" width="1" height="1.2" fill="#ffffff"/><rect x="69.4" y="11.7" width="2" height="1.2" fill="#9a9a9a"/><rect x="52.7" y="12.9" width="1" height="0.8" fill="#e8e8e8"/><rect x="59.0" y="11.6" width="1.6" height="1" fill="#9a9a9a"/><rect x="75.2" y="10.2" width="1.6" height="0.8" fill="#9a9a9a"/><rect x="93.6" y="8.8" width="0.8" height="0.8" fill="#ffffff"/><rect x="102.7" y="11.5" width="1.2" height="1" fill="#c8c8c8"/><rect x="116.1" y="6.6" width="1" height="0.8" fill="#ffffff"/><rect x="57.6" y="14.3" width="2" height="0.8" fill="#9a9a9a"/><rect x="43.0" y="14.8" width="1.2" height="0.8" fill="#ffffff"/><rect x="74.1" y="11.5" width="2" height="0.8" fill="#ffffff"/><rect x="70.0" y="10.3" width="1" height="1.2" fill="#c8c8c8"/><rect x="84.4" y="8.2" width="1" height="0.8" fill="#ffffff"/><rect x="91.8" y="8.9" width="0.8" height="1" fill="#9a9a9a"/><rect x="74.2" y="9.9" width="0.8" height="1.2" fill="#c8c8c8"/><rect x="96.8" y="7.8" width="0.8" height="1" fill="#e8e8e8"/><rect x="122.4" y="11.2" width="0.8" height="0.8" fill="#ffffff"/><rect x="70.1" y="11.6" width="1" height="1.2" fill="#ffffff"/><rect x="63.8" y="13.0" width="1" height="1" fill="#9a9a9a"/><rect x="17.7" y="12.7" width="1.2" height="0.8" fill="#c8c8c8"/><rect x="18.8" y="13.3" width="1.6" height="0.8" fill="#c8c8c8"/><rect x="49.5" y="14.5" width="0.8" height="1.2" fill="#c8c8c8"/><rect x="25.3" y="15.3" width="1" height="1.2" fill="#e8e8e8"/><rect x="51.3" y="11.0" width="2" height="1" fill="#ffffff"/><rect x="29.3" y="15.5" width="1.6" height="1.2" fill="#ffffff"/><rect x="55.7" y="11.2" width="2" height="1" fill="#ffffff"/><rect x="60.0" y="12.7" width="1.2" height="1.2" fill="#c8c8c8"/><rect x="60.9" y="12.7" width="1.2" height="1" fill="#c8c8c8"/><rect x="50.8" y="12.5" width="2" height="0.8" fill="#e8e8e8"/><rect x="49.9" y="10.7" width="1.2" height="1" fill="#ffffff"/><rect x="64.7" y="11.8" width="1.2" height="1.2" fill="#9a9a9a"/><rect x="104.7" y="11.3" width="2" height="0.8" fill="#e8e8e8"/><rect x="20.4" y="10.2" width="1.2" height="0.8" fill="#c8c8c8"/><rect x="54.8" y="12.6" width="1.2" height="1" fill="#c8c8c8"/><rect x="66.1" y="14.1" width="1" height="0.8" fill="#e8e8e8"/><rect x="42.5" y="12.5" width="1" height="1.2" fill="#e8e8e8"/><rect x="114.7" y="9.9" width="0.8" height="0.8" fill="#c8c8c8"/><rect x="22.3" y="11.2" width="0.8" height="0.8" fill="#e8e8e8"/><rect x="71.3" y="9.5" width="1.6" height="0.8" fill="#c8c8c8"/><rect x="37.0" y="13.1" width="1.6" height="0.8" fill="#9a9a9a"/><rect x="64.7" y="9.8" width="1" height="1" fill="#ffffff"/><rect x="104.5" y="12.2" width="1.2" height="1" fill="#e8e8e8"/><rect x="15.9" y="11.9" width="1.6" height="0.8" fill="#9a9a9a"/><rect x="78.6" y="8.9" width="0.8" height="0.8" fill="#c8c8c8"/><rect x="91.6" y="10.6" width="2" height="0.8" fill="#c8c8c8"/><rect x="71.4" y="11.9" width="2" height="1.2" fill="#c8c8c8"/><rect x="72.8" y="10.4" width="2" height="1.2" fill="#9a9a9a"/><rect x="63.9" y="11.3" width="1" height="1.2" fill="#e8e8e8"/><rect x="42.8" y="14.4" width="2" height="0.8" fill="#c8c8c8"/><rect x="61.3" y="12.3" width="1.2" height="1.2" fill="#ffffff"/><rect x="66.1" y="10.7" width="1.2" height="1.2" fill="#9a9a9a"/><rect x="30.9" y="14.9" width="1" height="0.8" fill="#e8e8e8"/><rect x="104.5" y="9.0" width="1.6" height="1" fill="#c8c8c8"/><rect x="96.3" y="10.4" width="1.6" height="1" fill="#9a9a9a"/><rect x="38.7" y="14.7" width="1.6" height="1.2" fill="#9a9a9a"/><rect x="25.1" y="9.8" width="1" height="0.8" fill="#e8e8e8"/><rect x="40.2" y="14.0" width="1.6" height="0.8" fill="#9a9a9a"/><rect x="15.3" y="9.9" width="0.8" height="1.2" fill="#e8e8e8"/><rect x="73.8" y="12.1" width="1.2" height="0.8" fill="#ffffff"/><rect x="95.8" y="8.5" width="1.2" height="1.2" fill="#c8c8c8"/><rect x="34.7" y="10.2" width="0.8" height="0.8" fill="#ffffff"/><rect x="110.3" y="10.6" width="1.6" height="1" fill="#ffffff"/><rect x="31.4" y="11.2" width="1" height="1.2" fill="#c8c8c8"/><rect x="60.8" y="10.6" width="2" height="1" fill="#9a9a9a"/><rect x="84.7" y="11.4" width="2" height="1" fill="#9a9a9a"/><rect x="26.3" y="9.9" width="1.2" height="1.2" fill="#c8c8c8"/><rect x="21.2" y="12.4" width="0.8" height="0.8" fill="#c8c8c8"/><rect x="44.7" y="11.7" width="1" height="1" fill="#e8e8e8"/><rect x="29.3" y="13.8" width="2" height="0.8" fill="#e8e8e8"/><rect x="67.8" y="11.4" width="1.6" height="1" fill="#9a9a9a"/><rect x="41.6" y="14.5" width="1" height="1.2" fill="#e8e8e8"/><rect x="70.4" y="9.6" width="2" height="1.2" fill="#e8e8e8"/><rect x="69.3" y="8.9" width="1.2" height="0.8" fill="#e8e8e8"/><rect x="112.6" y="9.0" width="0.8" height="1.2" fill="#e8e8e8"/><rect x="36.9" y="9.9" width="1.6" height="1" fill="#ffffff"/><rect x="100.1" y="8.3" width="2" height="0.8" fill="#ffffff"/><rect x="96.7" y="9.3" width="1.2" height="1.2" fill="#9a9a9a"/><rect x="17.5" y="15.6" width="1.2" height="1" fill="#e8e8e8"/><rect x="27.5" y="13.9" width="2" height="0.8" fill="#c8c8c8"/><rect x="23.5" y="12.7" width="0.8" height="1" fill="#c8c8c8"/><rect x="42.4" y="11.3" width="0.8" height="0.8" fill="#9a9a9a"/><rect x="55.9" y="12.1" width="1" height="0.8" fill="#c8c8c8"/><rect x="45.1" y="11.3" width="0.8" height="1" fill="#e8e8e8"/><rect x="81.7" y="10.0" width="1.6" height="0.8" fill="#9a9a9a"/><rect x="77.1" y="8.7" width="1.2" height="1.2" fill="#e8e8e8"/><rect x="20.9" y="13.0" width="2" height="0.8" fill="#e8e8e8"/><rect x="41.5" y="13.8" width="0.8" height="1" fill="#c8c8c8"/><rect x="28.9" y="12.4" width="0.8" height="1.2" fill="#c8c8c8"/><rect x="74.9" y="7.8" width="2" height="1.2" fill="#ffffff"/><rect x="78.7" y="10.5" width="1" height="1" fill="#c8c8c8"/><rect x="55.2" y="12.2" width="1.6" height="1" fill="#9a9a9a"/><rect x="28.0" y="14.0" width="2" height="0.8" fill="#c8c8c8"/><rect x="47.5" y="11.7" width="0.8" height="1.2" fill="#ffffff"/><rect x="116.2" y="7.1" width="1.6" height="1.2" fill="#ffffff"/></svg><svg style="left:44px;top:462px;" width="130" height="26" viewBox="0 0 130 26"><rect x="106.9" y="16.1" width="1.2" height="1" fill="#e8e8e8"/><rect x="58.3" y="16.6" width="2" height="1" fill="#9a9a9a"/><rect x="70.2" y="19.1" width="1.2" height="1" fill="#c8c8c8"/><rect x="34.4" y="19.7" width="1" height="0.8" fill="#c8c8c8"/><rect x="124.9" y="16.5" width="1.6" height="1.2" fill="#c8c8c8"/><rect x="122.9" y="17.8" width="1.6" height="1.2" fill="#e8e8e8"/><rect x="68.9" y="16.3" width="1.6" height="1.2" fill="#c8c8c8"/><rect x="65.2" y="14.6" width="1" height="1.2" fill="#c8c8c8"/><rect x="48.4" y="18.6" width="2" height="1.2" fill="#9a9a9a"/><rect x="49.3" y="14.7" width="1" height="1" fill="#c8c8c8"/><rect x="117.8" y="16.2" width="0.8" height="0.8" fill="#ffffff"/><rect x="21.5" y="19.8" width="0.8" height="1" fill="#e8e8e8"/><rect x="44.2" y="16.6" width="1" height="0.8" fill="#9a9a9a"/><rect x="42.4" y="17.6" width="0.8" height="0.8" fill="#ffffff"/><rect x="43.1" y="18.5" width="1" height="1.2" fill="#e8e8e8"/><rect x="72.5" y="18.5" width="1" height="0.8" fill="#ffffff"/><rect x="15.5" y="21.0" width="2" height="1.2" fill="#ffffff"/><rect x="46.5" y="16.4" width="2" height="1.2" fill="#ffffff"/><rect x="114.2" y="16.6" width="2" height="1.2" fill="#e8e8e8"/><rect x="67.0" y="17.0" width="1.2" height="0.8" fill="#ffffff"/><rect x="64.3" y="19.1" width="1" height="1.2" fill="#9a9a9a"/><rect x="68.6" y="15.0" width="1.2" height="1" fill="#c8c8c8"/><rect x="17.0" y="19.9" width="0.8" height="1" fill="#ffffff"/><rect x="29.5" y="19.0" width="1" height="0.8" fill="#9a9a9a"/><rect x="84.9" y="11.6" width="1" height="0.8" fill="#9a9a9a"/><rect x="23.1" y="19.8" width="0.8" height="1.2" fill="#e8e8e8"/><rect x="61.5" y="14.5" width="2" height="0.8" fill="#e8e8e8"/><rect x="18.9" y="19.9" width="0.8" height="0.8" fill="#ffffff"/><rect x="26.0" y="20.1" width="1" height="0.8" fill="#ffffff"/><rect x="38.9" y="16.7" width="1.2" height="1.2" fill="#9a9a9a"/><rect x="38.4" y="18.2" width="1" height="1.2" fill="#9a9a9a"/><rect x="61.8" y="19.0" width="1.6" height="1.2" fill="#e8e8e8"/><rect x="116.3" y="16.9" width="1.6" height="1" fill="#ffffff"/><rect x="72.1" y="18.4" width="1.2" height="1.2" fill="#c8c8c8"/><rect x="48.9" y="16.6" width="1.6" height="0.8" fill="#ffffff"/><rect x="48.7" y="18.9" width="0.8" height="1" fill="#ffffff"/><rect x="60.2" y="14.9" width="1.6" height="1" fill="#e8e8e8"/><rect x="48.6" y="17.5" width="0.8" height="0.8" fill="#9a9a9a"/><rect x="36.2" y="17.2" width="1.6" height="0.8" fill="#c8c8c8"/><rect x="58.5" y="16.3" width="0.8" height="1" fill="#ffffff"/><rect x="28.5" y="18.4" width="1.6" height="0.8" fill="#ffffff"/><rect x="17.7" y="19.7" width="1.6" height="0.8" fill="#9a9a9a"/><rect x="47.0" y="18.6" width="1.2" height="1" fill="#9a9a9a"/><rect x="72.9" y="16.2" width="1.6" height="1.2" fill="#9a9a9a"/><rect x="68.8" y="15.4" width="1.2" height="1.2" fill="#9a9a9a"/><rect x="91.5" y="15.9" width="2" height="0.8" fill="#ffffff"/><rect x="54.2" y="16.6" width="2" height="0.8" fill="#9a9a9a"/><rect x="113.8" y="17.6" width="0.8" height="0.8" fill="#c8c8c8"/><rect x="58.0" y="13.7" width="1.2" height="1" fill="#e8e8e8"/><rect x="72.6" y="17.9" width="1.6" height="0.8" fill="#c8c8c8"/><rect x="71.8" y="17.7" width="2" height="1" fill="#e8e8e8"/><rect x="124.5" y="17.6" width="2" height="1.2" fill="#e8e8e8"/><rect x="66.3" y="16.1" width="1.6" height="1.2" fill="#e8e8e8"/><rect x="58.2" y="14.2" width="0.8" height="1" fill="#c8c8c8"/><rect x="59.5" y="16.0" width="1.6" height="1" fill="#c8c8c8"/><rect x="93.5" y="12.5" width="0.8" height="1.2" fill="#e8e8e8"/><rect x="73.6" y="17.5" width="1.6" height="1.2" fill="#ffffff"/><rect x="49.4" y="20.3" width="2" height="1.2" fill="#9a9a9a"/><rect x="86.5" y="16.2" width="2" height="1.2" fill="#9a9a9a"/><rect x="114.6" y="16.2" width="0.8" height="1" fill="#e8e8e8"/><rect x="45.2" y="19.8" width="1.6" height="1.2" fill="#e8e8e8"/><rect x="15.9" y="19.9" width="1.6" height="1" fill="#c8c8c8"/><rect x="71.5" y="17.6" width="0.8" height="1" fill="#ffffff"/><rect x="88.6" y="18.1" width="1.2" height="1" fill="#c8c8c8"/><rect x="123.6" y="15.8" width="1.6" height="1" fill="#e8e8e8"/><rect x="20.9" y="19.3" width="1.6" height="1" fill="#9a9a9a"/><rect x="15.2" y="22.1" width="0.8" height="1.2" fill="#9a9a9a"/><rect x="29.7" y="21.6" width="2" height="1.2" fill="#c8c8c8"/><rect x="23.4" y="20.6" width="1.2" height="1.2" fill="#9a9a9a"/><rect x="72.0" y="15.2" width="0.8" height="1.2" fill="#e8e8e8"/><rect x="58.0" y="14.0" width="2" height="1.2" fill="#ffffff"/><rect x="48.9" y="17.0" width="1" height="1" fill="#e8e8e8"/><rect x="72.5" y="17.1" width="1.6" height="1" fill="#e8e8e8"/><rect x="50.0" y="17.8" width="0.8" height="1" fill="#9a9a9a"/><rect x="54.9" y="14.0" width="1.6" height="0.8" fill="#9a9a9a"/><rect x="45.0" y="19.7" width="1.6" height="0.8" fill="#c8c8c8"/><rect x="35.4" y="21.6" width="1" height="0.8" fill="#e8e8e8"/><rect x="44.5" y="16.5" width="1.2" height="1" fill="#c8c8c8"/><rect x="96.7" y="15.6" width="1.2" height="1.2" fill="#ffffff"/><rect x="55.4" y="16.4" width="1.2" height="1" fill="#9a9a9a"/><rect x="24.6" y="20.5" width="1" height="1" fill="#9a9a9a"/><rect x="29.0" y="20.8" width="1.2" height="0.8" fill="#9a9a9a"/><rect x="15.9" y="21.1" width="1.2" height="0.8" fill="#9a9a9a"/><rect x="74.5" y="13.0" width="1.2" height="1" fill="#e8e8e8"/><rect x="30.6" y="19.6" width="1.6" height="1" fill="#c8c8c8"/><rect x="24.8" y="21.0" width="1" height="0.8" fill="#e8e8e8"/><rect x="95.1" y="19.7" width="2" height="0.8" fill="#e8e8e8"/><rect x="34.5" y="19.9" width="0.8" height="1" fill="#9a9a9a"/><rect x="100.7" y="17.5" width="1.2" height="1.2" fill="#9a9a9a"/><rect x="40.1" y="19.8" width="0.8" height="1" fill="#9a9a9a"/><rect x="68.9" y="17.9" width="2" height="1.2" fill="#ffffff"/><rect x="60.3" y="16.7" width="2" height="1" fill="#ffffff"/><rect x="34.3" y="17.5" width="0.8" height="1" fill="#ffffff"/><rect x="17.7" y="16.5" width="1.2" height="1.2" fill="#9a9a9a"/><rect x="20.5" y="22.3" width="1.6" height="0.8" fill="#ffffff"/><rect x="68.0" y="15.8" width="2" height="1.2" fill="#ffffff"/><rect x="20.3" y="20.0" width="2" height="0.8" fill="#c8c8c8"/><rect x="29.5" y="18.7" width="0.8" height="0.8" fill="#ffffff"/><rect x="66.3" y="17.3" width="1.6" height="1" fill="#9a9a9a"/><rect x="114.5" y="14.4" width="2" height="1.2" fill="#e8e8e8"/><rect x="71.2" y="16.9" width="1" height="0.8" fill="#9a9a9a"/><rect x="37.2" y="17.8" width="1.2" height="1" fill="#e8e8e8"/><rect x="62.1" y="14.5" width="0.8" height="1.2" fill="#ffffff"/><rect x="67.0" y="18.3" width="1.2" height="1.2" fill="#9a9a9a"/><rect x="123.6" y="17.2" width="0.8" height="0.8" fill="#e8e8e8"/><rect x="38.4" y="21.0" width="1.6" height="1.2" fill="#ffffff"/><rect x="86.0" y="14.3" width="1.6" height="1.2" fill="#ffffff"/><rect x="96.0" y="14.2" width="1" height="0.8" fill="#c8c8c8"/><rect x="19.2" y="20.7" width="2" height="0.8" fill="#ffffff"/><rect x="122.6" y="17.6" width="1.6" height="1.2" fill="#c8c8c8"/><rect x="120.9" y="17.6" width="2" height="1.2" fill="#ffffff"/><rect x="60.4" y="18.1" width="1.6" height="1.2" fill="#ffffff"/><rect x="65.1" y="16.3" width="1.2" height="0.8" fill="#e8e8e8"/><rect x="61.0" y="16.2" width="1.2" height="1.2" fill="#9a9a9a"/><rect x="29.2" y="16.0" width="1" height="1" fill="#9a9a9a"/><rect x="121.8" y="15.2" width="2" height="1" fill="#9a9a9a"/><rect x="36.1" y="20.2" width="1.6" height="1.2" fill="#c8c8c8"/><rect x="49.0" y="18.7" width="1.6" height="0.8" fill="#e8e8e8"/><rect x="37.8" y="19.2" width="0.8" height="0.8" fill="#e8e8e8"/><rect x="73.7" y="17.0" width="1.6" height="0.8" fill="#9a9a9a"/><rect x="66.8" y="14.3" width="0.8" height="1" fill="#e8e8e8"/><rect x="38.3" y="19.9" width="0.8" height="1.2" fill="#9a9a9a"/><rect x="115.6" y="18.9" width="1.6" height="1" fill="#e8e8e8"/><rect x="31.6" y="17.8" width="1" height="0.8" fill="#c8c8c8"/><rect x="80.0" y="20.2" width="2" height="1" fill="#e8e8e8"/><rect x="118.8" y="16.2" width="1.6" height="0.8" fill="#9a9a9a"/><rect x="58.1" y="15.5" width="1" height="0.8" fill="#e8e8e8"/><rect x="21.0" y="20.5" width="2" height="0.8" fill="#ffffff"/><rect x="20.9" y="19.8" width="2" height="1" fill="#ffffff"/><rect x="55.1" y="15.7" width="1.2" height="1.2" fill="#9a9a9a"/><rect x="17.7" y="18.2" width="1.6" height="0.8" fill="#e8e8e8"/><rect x="30.9" y="20.3" width="1.2" height="0.8" fill="#ffffff"/><rect x="71.3" y="18.4" width="1.2" height="1" fill="#ffffff"/><rect x="118.9" y="15.8" width="2" height="1" fill="#ffffff"/><rect x="46.1" y="17.4" width="2" height="0.8" fill="#ffffff"/><rect x="19.9" y="18.3" width="1.2" height="1.2" fill="#ffffff"/><rect x="74.4" y="15.0" width="1.6" height="0.8" fill="#e8e8e8"/><rect x="32.9" y="17.9" width="0.8" height="0.8" fill="#c8c8c8"/><rect x="42.1" y="21.5" width="1" height="1" fill="#ffffff"/><rect x="40.7" y="19.7" width="1" height="0.8" fill="#ffffff"/><rect x="39.3" y="19.9" width="2" height="1.2" fill="#9a9a9a"/><rect x="62.0" y="17.0" width="1" height="1" fill="#c8c8c8"/><rect x="20.8" y="19.4" width="2" height="0.8" fill="#9a9a9a"/><rect x="119.1" y="14.3" width="1.6" height="0.8" fill="#9a9a9a"/><rect x="53.6" y="19.8" width="1" height="1.2" fill="#9a9a9a"/><rect x="63.7" y="15.1" width="1.2" height="0.8" fill="#c8c8c8"/><rect x="97.6" y="16.5" width="1.6" height="1.2" fill="#ffffff"/><rect x="61.9" y="17.2" width="2" height="1" fill="#c8c8c8"/><rect x="73.8" y="12.5" width="1.2" height="1" fill="#ffffff"/><rect x="70.6" y="17.4" width="1" height="1.2" fill="#9a9a9a"/><rect x="27.9" y="17.7" width="1.6" height="0.8" fill="#9a9a9a"/><rect x="64.8" y="15.4" width="1.2" height="1.2" fill="#c8c8c8"/><rect x="33.2" y="19.3" width="1" height="1" fill="#9a9a9a"/><rect x="69.9" y="19.9" width="1" height="1" fill="#c8c8c8"/><rect x="115.3" y="15.1" width="1.2" height="1.2" fill="#c8c8c8"/><rect x="19.4" y="19.7" width="1.2" height="1" fill="#c8c8c8"/><rect x="59.3" y="17.6" width="1" height="1" fill="#ffffff"/><rect x="59.6" y="15.7" width="0.8" height="1" fill="#e8e8e8"/><rect x="39.5" y="16.6" width="2" height="1" fill="#e8e8e8"/><rect x="51.7" y="17.7" width="2" height="1.2" fill="#9a9a9a"/><rect x="66.2" y="15.1" width="1.2" height="0.8" fill="#e8e8e8"/><rect x="78.0" y="16.4" width="1" height="0.8" fill="#e8e8e8"/><rect x="38.0" y="21.6" width="1.6" height="0.8" fill="#9a9a9a"/><rect x="59.6" y="16.0" width="1.6" height="1.2" fill="#c8c8c8"/><rect x="86.4" y="15.0" width="1" height="1" fill="#ffffff"/><rect x="38.1" y="18.5" width="0.8" height="1" fill="#e8e8e8"/><rect x="18.9" y="20.7" width="1.2" height="1" fill="#9a9a9a"/><rect x="28.4" y="20.4" width="1.6" height="1.2" fill="#ffffff"/><rect x="44.4" y="17.7" width="1.6" height="1.2" fill="#ffffff"/><rect x="48.9" y="19.3" width="1" height="0.8" fill="#c8c8c8"/><rect x="65.5" y="20.9" width="2" height="1" fill="#c8c8c8"/><rect x="103.5" y="18.0" width="1" height="0.8" fill="#e8e8e8"/><rect x="18.2" y="21.2" width="0.8" height="1.2" fill="#e8e8e8"/><rect x="53.6" y="17.8" width="1.6" height="1.2" fill="#e8e8e8"/><rect x="49.1" y="17.8" width="1.2" height="1.2" fill="#e8e8e8"/><rect x="94.1" y="13.4" width="0.8" height="0.8" fill="#9a9a9a"/><rect x="22.0" y="18.5" width="1" height="1.2" fill="#ffffff"/><rect x="15.8" y="21.7" width="1" height="1" fill="#e8e8e8"/><rect x="24.8" y="20.3" width="1" height="1.2" fill="#e8e8e8"/><rect x="103.6" y="19.5" width="1" height="1" fill="#ffffff"/><rect x="120.2" y="15.5" width="0.8" height="0.8" fill="#9a9a9a"/><rect x="30.9" y="19.4" width="1.2" height="1.2" fill="#ffffff"/><rect x="24.5" y="17.3" width="2" height="1.2" fill="#e8e8e8"/><rect x="36.9" y="21.0" width="0.8" height="1.2" fill="#c8c8c8"/><rect x="29.2" y="19.1" width="1" height="0.8" fill="#9a9a9a"/><rect x="26.8" y="20.0" width="0.8" height="1.2" fill="#ffffff"/><rect x="39.9" y="20.4" width="1" height="0.8" fill="#e8e8e8"/><rect x="26.5" y="18.8" width="1.2" height="1" fill="#9a9a9a"/><rect x="15.8" y="18.7" width="0.8" height="0.8" fill="#9a9a9a"/><rect x="15.2" y="22.1" width="1.6" height="1" fill="#e8e8e8"/><rect x="34.2" y="20.6" width="2" height="0.8" fill="#c8c8c8"/><rect x="49.0" y="15.3" width="1.6" height="1" fill="#9a9a9a"/><rect x="101.9" y="14.5" width="2" height="0.8" fill="#ffffff"/><rect x="43.1" y="18.5" width="1.6" height="1.2" fill="#9a9a9a"/></svg><div class="a" style="left:44px;top:497px;width:188px;height:24px;background:#333333;"></div><svg style="left:154px;top:501px;" width="18" height="17" viewBox="0 0 18 17"><rect x="2" y="2" width="13" height="13" rx="2" fill="none" stroke="#b4b4b4" stroke-width="1.2"/><path d="M8.5,4 V11 M5.5,8 L8.5,11 L11.5,8" fill="none" stroke="#b4b4b4" stroke-width="1.2"/></svg><svg style="left:182px;top:501px;" width="18" height="17" viewBox="0 0 18 17"><rect x="1" y="1" width="11" height="11" rx="2" fill="none" stroke="#b4b4b4" stroke-width="1.2"/><rect x="5" y="5" width="11" height="11" rx="2" fill="#333" stroke="#b4b4b4" stroke-width="1.2"/><path d="M10.5,7.5 V13.5 M7.5,10.5 H13.5" stroke="#b4b4b4" stroke-width="1.2"/></svg><svg style="left:211px;top:501px;" width="16" height="17" viewBox="0 0 16 17"><path d="M2,4 H14 M6,4 V2 H10 V4 M3.5,4 L4.5,16 H11.5 L12.5,4 M6.5,6.5 V14 M9.5,6.5 V14" fill="none" stroke="#b4b4b4" stroke-width="1.2"/></svg><div class="a" style="left:234px;top:76px;width:41px;height:14px;background:#222222;"></div><svg style="left:243px;top:77px;" width="10" height="9" viewBox="0 0 10 9"><path d="M0,0.5 H7 M0,3 H7 M0,5.5 H7" stroke="#8c8c8c" stroke-width="0.9"/></svg><div class="a" style="left:257px;top:76px;width:18px;height:14px;background:#333333;"></div><svg style="left:259px;top:78px;" width="14" height="14" viewBox="0 0 14 14"><circle cx="8" cy="7" r="5.5" fill="none" stroke="#b4b4b4" stroke-width="1.4"/><path d="M6,5 L10,9 M6,5 H9 M6,5 V8" stroke="#b4b4b4" stroke-width="1.3"/></svg><div class="a" style="left:234px;top:90px;width:41px;height:5px;background:#333333;"></div><div class="a" style="left:234px;top:95px;width:41px;height:106px;background:#2e2e2e;"></div><div class="a" style="left:235px;top:97px;width:38px;height:24px;background:#4a5670;border:1px solid #3a4458;border-radius:3px"></div><div class="t" style="left:237px;top:104px;font-size:10.3px;color:#dde0e6;width:35px;overflow:hidden">Brushes</div><div class="a" style="left:235px;top:123px;width:38px;height:24px;background:#232323;border:1px solid #1c1c1c;border-radius:3px"></div><div class="t" style="left:237px;top:130px;font-size:10.3px;color:#d0d0d0;">Set 1</div><div class="a" style="left:235px;top:149px;width:38px;height:24px;background:#232323;border:1px solid #1c1c1c;border-radius:3px"></div><div class="t" style="left:237px;top:156px;font-size:10.3px;color:#c0c0c0;width:35px;overflow:hidden">Animati</div><div class="a" style="left:235px;top:175px;width:38px;height:24px;background:#232323;border:1px solid #1c1c1c;border-radius:3px"></div><div class="t" style="left:237px;top:182px;font-size:10.3px;color:#d0d0d0;width:35px;overflow:hidden">STUFF</div><div class="a" style="left:234px;top:201px;width:28px;height:879px;background:#2c2c2c;"></div><div class="a" style="left:262px;top:201px;width:13px;height:879px;background:#262626;"></div><div class="a" style="left:263px;top:203px;width:10px;height:458px;background:#3a3a3a;border-radius:5px"></div><div class="a" style="left:275px;top:48px;width:2px;height:1032px;background:#1b1b1b;"></div><svg style="left:236px;top:205px;" width="18" height="18" viewBox="0 0 18 18"><path d="M6,6 L15,15" stroke="#b4b4b4" stroke-width="4.4" stroke-linecap="round"/><circle cx="6" cy="6" r="5.2" fill="#b4b4b4"/><path d="M6,6 L15,15" stroke="#2c2c2c" stroke-width="2" stroke-linecap="round"/><circle cx="6" cy="6" r="3.8" fill="#2c2c2c"/><path d="M0,0 L5.2,5.2" stroke="#2c2c2c" stroke-width="3.4"/><path d="M1.2,2.6 L4,5.4 M2.6,1.2 L5.4,4" stroke="#b4b4b4" stroke-width="1.2"/></svg><div class="a" style="left:235px;top:228px;width:20px;height:20px;background:#f03c2c;"></div><svg style="left:235px;top:228px;" width="20" height="20" viewBox="0 0 20 20"><path d="M2,17 Q4,8 10,6 L13,9 Q11,15 2,17 Z" fill="#333"/><path d="M10,6 L14,2 L17,5 L13,9 Z" fill="#333"/><path d="M3,16 L8,11" stroke="#f03c2c" stroke-width="1.2"/></svg><svg style="left:235px;top:252px;" width="20" height="20" viewBox="0 0 20 20"><g transform="rotate(45 10 10)"><rect x="6.5" y="0.5" width="7" height="5" rx="1" fill="#b4b4b4"/><path d="M6.5,6.5 H13.5 L14,10 L10,19.5 L6,10 Z" fill="none" stroke="#b4b4b4" stroke-width="1.3"/><path d="M10,12 V19" stroke="#b4b4b4" stroke-width="1"/><circle cx="10" cy="11.5" r="0.9" fill="#b4b4b4"/></g></svg><div class="a" style="left:235px;top:276px;width:20px;height:20px;background:#2d9fe0;"></div><svg style="left:235px;top:276px;" width="20" height="20" viewBox="0 0 20 20"><path d="M2,17 L5,8 L11,4 L15,8 L11,14 Z" fill="none" stroke="#333" stroke-width="1.3"/><path d="M11,4 L14,1 L18,5 L15,8 Z" fill="#333"/><path d="M2,17 L9,10" stroke="#333" stroke-width="1"/></svg><svg style="left:235px;top:300px;" width="20" height="20" viewBox="0 0 20 20"><g transform="rotate(45 10 10)"><rect x="6" y="1.5" width="8" height="7" rx="1" fill="#b4b4b4"/><path d="M6,9 H14 L13,16 H7 Z" fill="#2c2c2c" stroke="#b4b4b4" stroke-width="1.4"/><path d="M8.5,16.5 H11.5 L11,19 H9 Z" fill="#b4b4b4"/></g></svg><svg style="left:235px;top:324px;" width="20" height="20" viewBox="0 0 20 20"><g transform="rotate(45 10 10)"><rect x="6" y="1.5" width="8" height="7" rx="1" fill="#b4b4b4"/><path d="M6,9 H14 L13,16 H7 Z" fill="#2c2c2c" stroke="#b4b4b4" stroke-width="1.4"/><path d="M8.5,16.5 H11.5 L11,19 H9 Z" fill="#b4b4b4"/></g></svg><div class="a" style="left:235px;top:348px;width:20px;height:20px;background:#f5a3d3;"></div><svg style="left:235px;top:348px;" width="20" height="20" viewBox="0 0 20 20"><path d="M2,17 L5,8 L11,4 L15,8 L11,14 Z" fill="none" stroke="#333" stroke-width="1.3"/><path d="M11,4 L14,1 L18,5 L15,8 Z" fill="#333"/><path d="M2,17 L9,10" stroke="#333" stroke-width="1"/></svg><div class="a" style="left:235px;top:372px;width:20px;height:20px;background:#929292;"></div><svg style="left:235px;top:372px;" width="20" height="20" viewBox="0 0 20 20"><path d="M2,17 L5,8 L11,4 L15,8 L11,14 Z" fill="none" stroke="#333" stroke-width="1.3"/><path d="M11,4 L14,1 L18,5 L15,8 Z" fill="#333"/><path d="M2,17 L9,10" stroke="#333" stroke-width="1"/></svg><div class="a" style="left:235px;top:396px;width:20px;height:20px;background:#44e855;"></div><svg style="left:235px;top:396px;" width="20" height="20" viewBox="0 0 20 20"><path d="M2,17 L5,8 L11,4 L15,8 L11,14 Z" fill="none" stroke="#333" stroke-width="1.3"/><path d="M11,4 L14,1 L18,5 L15,8 Z" fill="#333"/><path d="M2,17 L9,10" stroke="#333" stroke-width="1"/></svg><svg style="left:235px;top:420px;" width="20" height="20" viewBox="0 0 20 20"><g transform="rotate(45 10 10)"><rect x="6.5" y="0.5" width="7" height="5" rx="1" fill="#b4b4b4"/><path d="M6.5,6.5 H13.5 L14,10 L10,19.5 L6,10 Z" fill="none" stroke="#b4b4b4" stroke-width="1.3"/><path d="M10,12 V19" stroke="#b4b4b4" stroke-width="1"/><circle cx="10" cy="11.5" r="0.9" fill="#b4b4b4"/></g></svg><div class="a" style="left:235px;top:444px;width:20px;height:20px;background:#f41212;"></div><svg style="left:235px;top:444px;" width="20" height="20" viewBox="0 0 20 20"><path d="M2,17 L5,8 L11,4 L15,8 L11,14 Z" fill="none" stroke="#333" stroke-width="1.3"/><path d="M11,4 L14,1 L18,5 L15,8 Z" fill="#333"/><path d="M2,17 L9,10" stroke="#333" stroke-width="1"/></svg><div class="a" style="left:235px;top:468px;width:20px;height:20px;background:#ffffff;"></div><svg style="left:235px;top:468px;" width="20" height="20" viewBox="0 0 20 20"><path d="M5,13 L13,3 L17,7 L8,16 Z" fill="#111"/><path d="M3,17 L5,13 L8,16 Z" fill="#111"/></svg><div class="a" style="left:235px;top:492px;width:20px;height:20px;background:#56a833;"></div><svg style="left:235px;top:492px;" width="20" height="20" viewBox="0 0 20 20"><path d="M2,17 Q4,8 10,6 L13,9 Q11,15 2,17 Z" fill="#333"/><path d="M10,6 L14,2 L17,5 L13,9 Z" fill="#333"/><path d="M3,16 L8,11" stroke="#56a833" stroke-width="1.2"/></svg><div class="a" style="left:235px;top:516px;width:20px;height:20px;background:#c8c8c8;"></div><svg style="left:235px;top:516px;" width="20" height="20" viewBox="0 0 20 20"><ellipse cx="9.5" cy="11" rx="8" ry="6.5" fill="#cfe3a0"/><circle cx="4" cy="6" r="2.5" fill="#cfe3a0"/><circle cx="15" cy="6" r="2.5" fill="#cfe3a0"/><circle cx="4" cy="6" r="1" fill="#7a1a1a"/><circle cx="15" cy="6" r="1" fill="#7a1a1a"/><path d="M6,12 H13" stroke="#555" stroke-width="1"/><circle cx="3.5" cy="14" r="1.3" fill="#f08080"/><circle cx="15.5" cy="14" r="1.3" fill="#f08080"/></svg><svg style="left:235px;top:540px;" width="20" height="20" viewBox="0 0 20 20"><g transform="rotate(45 10 10)"><rect x="6" y="1.5" width="8" height="7" rx="1" fill="#b4b4b4"/><path d="M6,9 H14 L13,16 H7 Z" fill="#2c2c2c" stroke="#b4b4b4" stroke-width="1.4"/><path d="M8.5,16.5 H11.5 L11,19 H9 Z" fill="#b4b4b4"/></g></svg><svg style="left:235px;top:564px;" width="20" height="20" viewBox="0 0 20 20"><circle cx="9.5" cy="9.5" r="9" fill="#6fd13a"/><circle cx="9.5" cy="9.5" r="7" fill="#c8f090"/><path d="M9.5,3 V16 M3,9.5 H16 M5,5 L14,14 M14,5 L5,14" stroke="#6fd13a" stroke-width="0.9"/></svg><div class="a" style="left:235px;top:588px;width:20px;height:20px;background:#d8a21c;"></div><svg style="left:235px;top:588px;" width="20" height="20" viewBox="0 0 20 20"><path d="M2,17 Q4,8 10,6 L13,9 Q11,15 2,17 Z" fill="#333"/><path d="M10,6 L14,2 L17,5 L13,9 Z" fill="#333"/><path d="M3,16 L8,11" stroke="#d8a21c" stroke-width="1.2"/></svg><div class="a" style="left:235px;top:612px;width:20px;height:20px;background:#ffffff;"></div><svg style="left:235px;top:612px;" width="20" height="20" viewBox="0 0 20 20"><ellipse cx="9.5" cy="11" rx="8" ry="6.5" fill="#cfe3a0"/><circle cx="4" cy="6" r="2.5" fill="#cfe3a0"/><circle cx="15" cy="6" r="2.5" fill="#cfe3a0"/><circle cx="4" cy="6" r="1" fill="#7a1a1a"/><circle cx="15" cy="6" r="1" fill="#7a1a1a"/><path d="M6,12 H13" stroke="#555" stroke-width="1"/><circle cx="3.5" cy="14" r="1.3" fill="#f08080"/><circle cx="15.5" cy="14" r="1.3" fill="#f08080"/></svg><div class="a" style="left:235px;top:636px;width:20px;height:20px;background:#ffffff;"></div><svg style="left:235px;top:636px;" width="20" height="20" viewBox="0 0 20 20"><ellipse cx="9.5" cy="11" rx="8" ry="6.5" fill="#cfe3a0"/><circle cx="4" cy="6" r="2.5" fill="#cfe3a0"/><circle cx="15" cy="6" r="2.5" fill="#cfe3a0"/><circle cx="4" cy="6" r="1" fill="#7a1a1a"/><circle cx="15" cy="6" r="1" fill="#7a1a1a"/><path d="M6,12 H13" stroke="#555" stroke-width="1"/><circle cx="3.5" cy="14" r="1.3" fill="#f08080"/><circle cx="15.5" cy="14" r="1.3" fill="#f08080"/></svg><svg style="left:235px;top:660px;" width="20" height="20" viewBox="0 0 20 20"><rect x="0.5" y="0.5" width="19" height="19" fill="#5a8ea6" stroke="#f0a8b8"/><path d="M6,4 V16 M14,4 V16 M6,10 H14" stroke="#f4b8c4" stroke-width="3"/></svg><div class="a" style="left:235px;top:684px;width:20px;height:20px;background:#ffffff;"></div><svg style="left:235px;top:684px;" width="20" height="20" viewBox="0 0 20 20"><path d="M2,10 Q8,2 17,4 M3,12 Q9,6 15,8 L8,17 M5,9 L14,14" fill="none" stroke="#111" stroke-width="1.2"/></svg><svg style="left:235px;top:708px;" width="20" height="20" viewBox="0 0 20 20"><g transform="rotate(45 10 10)"><rect x="6" y="1.5" width="8" height="7" rx="1" fill="#b4b4b4"/><path d="M6,9 H14 L13,16 H7 Z" fill="#2c2c2c" stroke="#b4b4b4" stroke-width="1.4"/><path d="M8.5,16.5 H11.5 L11,19 H9 Z" fill="#b4b4b4"/></g></svg><div class="a" style="left:235px;top:732px;width:20px;height:20px;background:#1414c4;"></div><svg style="left:235px;top:732px;" width="20" height="20" viewBox="0 0 20 20"><path d="M2,17 L5,8 L11,4 L15,8 L11,14 Z" fill="none" stroke="#e8e8f0" stroke-width="1.3"/><path d="M11,4 L14,1 L18,5 L15,8 Z" fill="#e8e8f0"/><path d="M2,17 L9,10" stroke="#e8e8f0" stroke-width="1"/></svg><svg style="left:235px;top:756px;" width="20" height="20" viewBox="0 0 20 20"><path d="M10,1 L12,3 L15,2 L16,5 L19,6 L18,9 L20,11 L18,13 L19,16 L16,17 L14,19 L11,18 L8,20 L6,17 L3,17 L3,14 L0,12 L2,9 L1,6 L4,5 L5,2 L8,3 Z" fill="#f2f2f2"/><path d="M5,10 h3 M12,10 h3 M8,14 h4" stroke="#555" stroke-width="1"/></svg><div class="a" style="left:235px;top:780px;width:20px;height:20px;background:#e414a4;"></div><svg style="left:235px;top:780px;" width="20" height="20" viewBox="0 0 20 20"><g transform="rotate(45 10 10)"><rect x="6" y="1.5" width="8" height="7" rx="1" fill="#b4b4b4"/><path d="M6,9 H14 L13,16 H7 Z" fill="#e414a4" stroke="#b4b4b4" stroke-width="1.4"/><path d="M8.5,16.5 H11.5 L11,19 H9 Z" fill="#b4b4b4"/></g></svg><div class="a" style="left:235px;top:804px;width:20px;height:20px;background:#ffffff;"></div><svg style="left:235px;top:804px;" width="20" height="20" viewBox="0 0 20 20"><ellipse cx="9.5" cy="11" rx="8" ry="6.5" fill="#cfe3a0"/><circle cx="4" cy="6" r="2.5" fill="#cfe3a0"/><circle cx="15" cy="6" r="2.5" fill="#cfe3a0"/><circle cx="4" cy="6" r="1" fill="#7a1a1a"/><circle cx="15" cy="6" r="1" fill="#7a1a1a"/><path d="M6,12 H13" stroke="#555" stroke-width="1"/><circle cx="3.5" cy="14" r="1.3" fill="#f08080"/><circle cx="15.5" cy="14" r="1.3" fill="#f08080"/></svg><svg style="left:235px;top:828px;" width="20" height="20" viewBox="0 0 20 20"><g transform="rotate(45 10 10)"><rect x="6" y="1.5" width="8" height="7" rx="1" fill="#b4b4b4"/><path d="M6,9 H14 L13,16 H7 Z" fill="#2c2c2c" stroke="#b4b4b4" stroke-width="1.4"/><path d="M8.5,16.5 H11.5 L11,19 H9 Z" fill="#b4b4b4"/></g></svg><svg style="left:235px;top:852px;" width="20" height="20" viewBox="0 0 20 20"><g transform="rotate(45 10 10)"><rect x="6" y="1.5" width="8" height="7" rx="1" fill="#b4b4b4"/><path d="M6,9 H14 L13,16 H7 Z" fill="#2c2c2c" stroke="#b4b4b4" stroke-width="1.4"/><path d="M8.5,16.5 H11.5 L11,19 H9 Z" fill="#b4b4b4"/></g></svg><svg style="left:235px;top:876px;" width="20" height="20" viewBox="0 0 20 20"><g transform="rotate(45 10 10)"><rect x="6.5" y="0.5" width="7" height="5" rx="1" fill="#b4b4b4"/><path d="M6.5,6.5 H13.5 L14,10 L10,19.5 L6,10 Z" fill="none" stroke="#b4b4b4" stroke-width="1.3"/><path d="M10,12 V19" stroke="#b4b4b4" stroke-width="1"/><circle cx="10" cy="11.5" r="0.9" fill="#b4b4b4"/></g></svg><div class="a" style="left:235px;top:900px;width:20px;height:20px;background:#dc8cf4;"></div><svg style="left:235px;top:900px;" width="20" height="20" viewBox="0 0 20 20"><path d="M2,17 L5,8 L11,4 L15,8 L11,14 Z" fill="none" stroke="#333" stroke-width="1.3"/><path d="M11,4 L14,1 L18,5 L15,8 Z" fill="#333"/><path d="M2,17 L9,10" stroke="#333" stroke-width="1"/></svg><svg style="left:235px;top:924px;" width="20" height="20" viewBox="0 0 20 20"><g transform="rotate(45 10 10)"><rect x="6" y="1.5" width="8" height="7" rx="1" fill="#b4b4b4"/><path d="M6,9 H14 L13,16 H7 Z" fill="#2c2c2c" stroke="#b4b4b4" stroke-width="1.4"/><path d="M8.5,16.5 H11.5 L11,19 H9 Z" fill="#b4b4b4"/></g></svg><svg style="left:235px;top:948px;" width="20" height="20" viewBox="0 0 20 20"><g transform="rotate(45 10 10)"><rect x="6.5" y="0.5" width="7" height="5" rx="1" fill="#b4b4b4"/><path d="M6.5,6.5 H13.5 L14,10 L10,19.5 L6,10 Z" fill="none" stroke="#b4b4b4" stroke-width="1.3"/><path d="M10,12 V19" stroke="#b4b4b4" stroke-width="1"/><circle cx="10" cy="11.5" r="0.9" fill="#b4b4b4"/></g></svg><div class="a" style="left:235px;top:972px;width:20px;height:20px;background:#a58cf4;"></div><svg style="left:235px;top:972px;" width="20" height="20" viewBox="0 0 20 20"><path d="M4,11 L11,4 L17,10 L10,17 Z" fill="#444"/><path d="M4,11 L7,8 L13,14 L10,17 Z" fill="none" stroke="#333" stroke-width="1.2"/><path d="M10,17.5 H18" stroke="#333" stroke-width="1.2"/></svg><div class="a" style="left:235px;top:996px;width:20px;height:20px;background:#1896f4;"></div><svg style="left:235px;top:996px;" width="20" height="20" viewBox="0 0 20 20"><g transform="rotate(45 10 10)"><rect x="5.5" y="1" width="9" height="7" rx="1" fill="#333"/><path d="M5.5,8.5 H14.5 L13.5,17 H6.5 Z" fill="#333"/><path d="M7.5,10 H12.5 L12,15 H8 Z" fill="#1896f4"/><path d="M8,17 H12 L11,19.5 H9 Z" fill="#333"/></g></svg><div class="a" style="left:235px;top:1020px;width:20px;height:20px;background:#28d0e4;"></div><svg style="left:235px;top:1020px;" width="20" height="20" viewBox="0 0 20 20"><g transform="rotate(45 10 10)"><rect x="5.5" y="1" width="9" height="7" rx="1" fill="#333"/><path d="M5.5,8.5 H14.5 L13.5,17 H6.5 Z" fill="#333"/><path d="M7.5,10 H12.5 L12,15 H8 Z" fill="#28d0e4"/><path d="M8,17 H12 L11,19.5 H9 Z" fill="#333"/></g></svg><svg style="left:235px;top:1044px;" width="20" height="20" viewBox="0 0 20 20"><g transform="rotate(45 10 10)"><rect x="6.5" y="0.5" width="7" height="5" rx="1" fill="#b4b4b4"/><path d="M6.5,6.5 H13.5 L14,10 L10,19.5 L6,10 Z" fill="none" stroke="#b4b4b4" stroke-width="1.3"/><path d="M10,12 V19" stroke="#b4b4b4" stroke-width="1"/><circle cx="10" cy="11.5" r="0.9" fill="#b4b4b4"/></g></svg><svg style="left:235px;top:1068px;" width="20" height="20" viewBox="0 0 20 20"><g transform="rotate(45 10 10)"><rect x="6.5" y="0.5" width="7" height="5" rx="1" fill="#b4b4b4"/><path d="M6.5,6.5 H13.5 L14,10 L10,19.5 L6,10 Z" fill="none" stroke="#b4b4b4" stroke-width="1.3"/><path d="M10,12 V19" stroke="#b4b4b4" stroke-width="1"/><circle cx="10" cy="11.5" r="0.9" fill="#b4b4b4"/></g></svg><div class="a" style="left:258px;top:473px;width:1px;height:9px;background:#666666;"></div><div class="a" style="left:258px;top:523px;width:1px;height:1px;background:#666666;"></div><div class="a" style="left:258px;top:571px;width:1px;height:1px;background:#666666;"></div><div class="a" style="left:258px;top:617px;width:1px;height:9px;background:#666666;"></div><div class="a" style="left:258px;top:641px;width:1px;height:9px;background:#666666;"></div><div class="a" style="left:258px;top:689px;width:1px;height:9px;background:#666666;"></div><div class="a" style="left:258px;top:761px;width:1px;height:9px;background:#666666;"></div><div class="a" style="left:258px;top:809px;width:1px;height:9px;background:#666666;"></div><div class="a" style="left:44px;top:521px;width:188px;height:9px;background:#222222;"></div><div class="a" style="left:44px;top:530px;width:188px;height:14px;background:#222222;"></div><svg style="left:53px;top:531px;" width="10" height="9" viewBox="0 0 10 9"><path d="M0,0.5 H7 M0,3 H7 M0,5.5 H7" stroke="#8c8c8c" stroke-width="0.9"/></svg><div class="a" style="left:67px;top:530px;width:150px;height:14px;background:#333333;"></div><svg style="left:73px;top:530px;" width="22" height="18" viewBox="0 0 22 18"><path d="M3.5,13 L13,3.5 Q14.5,2 16,3.5 Q17.5,5 16,6.5 L6.5,16 Z" fill="#b4b4b4"/><path d="M1,16.5 L3,13 L6,16 Z" fill="#b4b4b4"/><circle cx="15" cy="14" r="2.6" fill="#333" stroke="#b4b4b4" stroke-width="1.3"/><path d="M15,9.8 V11 M15,17 V18.2 M10.8,14 H12 M18,14 H19.2 M12,11 L12.8,11.8 M17.2,16.2 L18,17 M18,11 L17.2,11.8 M12.8,16.2 L12,17" stroke="#b4b4b4" stroke-width="1.1"/></svg><div class="t" style="left:95px;top:534px;font-size:9.6px;color:#c4c4c4;">Tool property [animeCurve]</div><div class="a" style="left:44px;top:544px;width:188px;height:5px;background:#333333;"></div><div class="a" style="left:44px;top:549px;width:188px;height:260px;background:#222222;"></div><div class="a" style="left:218px;top:588px;width:14px;height:221px;background:#2b2b2b;"></div><div class="a" style="left:45px;top:550px;width:186px;height:38px;background:#2e2e2e;"></div><div class="a" style="left:45px;top:550px;width:93px;height:38px;background:#bababa;"></div><div class="a" style="left:45px;top:551px;width:60px;height:14px;background:#8c8c8c;border-radius:2px"></div><div class="t" style="left:45px;top:552px;font-size:10.2px;color:#e8e8e8;">animeCurve</div><svg style="left:45px;top:550px;" width="186" height="38" viewBox="0 0 186 38"><path d="M17,28.8 Q92,-5 167,28.8" fill="none" stroke="#2a1212" stroke-width="1.2"/></svg><svg style="left:207px;top:567px;" width="14" height="14" viewBox="0 0 14 14"><path d="M3,6 V3.5 Q3,1 5.5,1 Q8,1 8,3.5" fill="none" stroke="#b4b4b4" stroke-width="1.3"/><rect x="5" y="6" width="8" height="6" rx="1" fill="#b4b4b4"/></svg><div class="t" style="left:61px;top:593px;font-size:10.1px;color:#d0d0d0;">Brush Size</div><div class="a" style="left:82px;top:606px;width:61px;height:7px;background:#2a2a2a;border-bottom:1px solid #444;border-right:1px solid #444"></div><div class="a" style="left:83px;top:606px;width:27px;height:6px;background:#3a3a3a;border-radius:1px"></div><div class="t" style="right:1733px;top:596px;font-size:10.6px;color:#d0d0d0;">0.70</div><svg style="left:188px;top:594px;" width="10" height="20" viewBox="0 0 10 20"><path d="M2,7 L5,4 L8,7 M2,13 L5,16 L8,13" fill="none" stroke="#b4b4b4" stroke-width="1"/></svg><div class="a" style="left:201px;top:592px;width:15px;height:24px;background:#2b2b2b;border:1px solid #3a3a3a;border-radius:2px"></div><svg style="left:203px;top:598px;" width="12" height="12" viewBox="0 0 12 12"><rect x="1.5" y="1.5" width="8" height="8" rx="1.5" fill="none" stroke="#c0c0c0" stroke-width="1.1"/><path d="M2.5,8.5 L8.5,2.5" stroke="#c0c0c0" stroke-width="1.1"/></svg><div class="a" style="left:55px;top:618px;width:160px;height:2px;background:#333333;"></div><div class="t" style="left:61px;top:623px;font-size:10.1px;color:#d0d0d0;">Opacity</div><div class="a" style="left:82px;top:636px;width:61px;height:8px;background:#3a3a3a;border-radius:1px;border:1px solid #333"></div><div class="t" style="right:1733px;top:626px;font-size:10.6px;color:#d0d0d0;">100</div><svg style="left:188px;top:624px;" width="10" height="20" viewBox="0 0 10 20"><path d="M2,7 L5,4 L8,7 M2,13 L5,16 L8,13" fill="none" stroke="#b4b4b4" stroke-width="1"/></svg><div class="a" style="left:201px;top:622px;width:15px;height:24px;background:#2b2b2b;border:1px solid #3a3a3a;border-radius:2px"></div><svg style="left:203px;top:628px;" width="12" height="12" viewBox="0 0 12 12"><rect x="1.5" y="1.5" width="8" height="8" rx="1.5" fill="none" stroke="#c0c0c0" stroke-width="1.1"/><path d="M2.5,8.5 L8.5,2.5" stroke="#c0c0c0" stroke-width="1.1"/></svg><div class="a" style="left:55px;top:648px;width:160px;height:2px;background:#333333;"></div><div class="t" style="left:61px;top:658px;font-size:10.2px;color:#d0d0d0;">Anti-aliasing</div><div class="a" style="left:120px;top:652px;width:96px;height:24px;background:#2e2e2e;border:1px solid #3a3a3a;border-radius:2px"></div><div class="a" style="left:140px;top:653px;width:22px;height:22px;background:#5a6c9c;"></div><svg style="left:120px;top:652px;" width="96" height="24" viewBox="0 0 96 24"><path d="M10,5 h2 v2 h2 v2 h2 v6 h-2 v2 h-2 v2 h-4 v-2 h-2 v-2 h-2 v-6 h2 v-2 h2 z" fill="#bdbdbd" transform="translate(-1,0)"/><circle cx="31" cy="12" r="7" fill="#bdbdbd"/><circle cx="52" cy="12" r="7.5" fill="#777"/><circle cx="52" cy="12" r="6" fill="#bdbdbd"/><circle cx="72" cy="12" r="8" fill="#666"/><circle cx="72" cy="12" r="6" fill="#999"/><circle cx="72" cy="12" r="4" fill="#bdbdbd"/><path d="M86,10 L89.5,13.5 L93,10" fill="none" stroke="#aaa" stroke-width="1.1"/></svg><div class="a" style="left:55px;top:678px;width:160px;height:2px;background:#333333;"></div><div class="t" style="left:61px;top:688px;font-size:10.2px;color:#d0d0d0;">Brush shape</div><div class="a" style="left:121px;top:682px;width:79px;height:24px;background:#1e1e1e;border:1px solid #2e2e2e"></div><svg style="left:121px;top:682px;" width="79" height="24" viewBox="0 0 79 24"><path d="M8,19 Q45,-2 77,10" fill="none" stroke="#e0e0e0" stroke-width="1.3"/></svg><div class="a" style="left:201px;top:682px;width:15px;height:24px;background:#333333;border:1px solid #3a3a3a;border-radius:2px"></div><svg style="left:201px;top:682px;" width="15" height="24" viewBox="0 0 15 24"><path d="M4,10 L7.5,13.5 L11,10" fill="none" stroke="#aaa" stroke-width="1.1"/></svg><div class="a" style="left:55px;top:708px;width:160px;height:2px;background:#333333;"></div><div class="t" style="left:61px;top:718px;font-size:10.2px;color:#d0d0d0;">Hardness</div><div class="a" style="left:109px;top:714px;width:16px;height:20px;background:#46506a;"></div><div class="a" style="left:128px;top:714px;width:16px;height:20px;background:#46506a;"></div><div class="a" style="left:147px;top:714px;width:16px;height:20px;background:#46506a;"></div><div class="a" style="left:166px;top:714px;width:15px;height:20px;background:#46506a;"></div><div class="a" style="left:184px;top:714px;width:15px;height:20px;background:#46506a;"></div><div class="a" style="left:201px;top:712px;width:15px;height:24px;background:#2b2b2b;border:1px solid #3a3a3a;border-radius:2px"></div><svg style="left:201px;top:712px;" width="15" height="24" viewBox="0 0 15 24"><path d="M6,8 L9.5,12 L6,16" fill="none" stroke="#bbb" stroke-width="1.2"/></svg><div class="a" style="left:55px;top:738px;width:160px;height:2px;background:#333333;"></div><div class="a" style="left:61px;top:746px;width:14px;height:14px;background:#262626;border-radius:2px"></div><svg style="left:61px;top:746px;" width="14" height="14" viewBox="0 0 14 14"><path d="M3,7 L6,10.5 L11,3.5" fill="none" stroke="#555" stroke-width="1.3"/></svg><div class="t" style="left:79px;top:748px;font-size:10px;color:#6a6a6a;letter-spacing:-0.4px">Vector magnet</div><div class="a" style="left:140px;top:743px;width:12px;height:22px;background:#242424;border:1px solid #262626"></div><div class="a" style="left:153px;top:743px;width:12px;height:22px;background:#242424;border:1px solid #262626"></div><div class="a" style="left:166px;top:743px;width:12px;height:22px;background:#242424;border:1px solid #262626"></div><div class="a" style="left:179px;top:743px;width:12px;height:22px;background:#242424;border:1px solid #262626"></div><div class="a" style="left:191px;top:743px;width:12px;height:22px;background:#242424;border:1px solid #262626"></div><div class="a" style="left:201px;top:743px;width:15px;height:22px;background:#262626;"></div><svg style="left:201px;top:743px;" width="15" height="22" viewBox="0 0 15 22"><path d="M6,7 L9.5,11 L6,15" fill="none" stroke="#444" stroke-width="1.1"/></svg><div class="a" style="left:55px;top:768px;width:160px;height:2px;background:#333333;"></div><div class="a" style="left:49px;top:776px;width:11px;height:11px;background:#3a3a3a;border:1px solid #555;border-radius:2px"></div><svg style="left:49px;top:776px;" width="11" height="11" viewBox="0 0 11 11"><path d="M5.5,2 V9 M2,5.5 H9" stroke="#ddd" stroke-width="1.2"/></svg><div class="t" style="left:61px;top:778px;font-size:10.2px;color:#d4d4d4;">Starting and ending</div><div class="a" style="left:154px;top:772px;width:62px;height:24px;background:#393939;border:1px solid #4a4a4a;border-radius:2px"></div><div class="t" style="left:157px;top:778px;font-size:9.2px;color:#999999;letter-spacing:-0.5px;width:42px;overflow:hidden">Brush Size, E</div><div class="a" style="left:196px;top:773px;width:19px;height:22px;background:#393939;"></div><svg style="left:196px;top:773px;" width="19" height="22" viewBox="0 0 19 22"><path d="M5,9 L9.5,13.5 L14,9" fill="none" stroke="#bbb" stroke-width="1.2"/></svg><div class="a" style="left:44px;top:809px;width:188px;height:24px;background:#333333;"></div><svg style="left:182px;top:813px;" width="16" height="16" viewBox="0 0 16 16"><circle cx="8" cy="8.5" r="6" fill="none" stroke="#b4b4b4" stroke-width="1.3" stroke-dasharray="30 4"/><circle cx="8" cy="8.5" r="1.8" fill="#b4b4b4"/><path d="M8,8 V3" stroke="#b4b4b4" stroke-width="1.3"/></svg><svg style="left:209px;top:812px;" width="18" height="18" viewBox="0 0 18 18"><path d="M6,6 L15,15" stroke="#b4b4b4" stroke-width="4.4" stroke-linecap="round"/><circle cx="6" cy="6" r="5.2" fill="#b4b4b4"/><path d="M6,6 L15,15" stroke="#333333" stroke-width="2" stroke-linecap="round"/><circle cx="6" cy="6" r="3.8" fill="#333333"/><path d="M0,0 L5.2,5.2" stroke="#333333" stroke-width="3.4"/><path d="M1.2,2.6 L4,5.4 M2.6,1.2 L5.4,4" stroke="#b4b4b4" stroke-width="1.2"/></svg><div class="a" style="left:44px;top:833px;width:188px;height:28px;background:#222222;"></div><svg style="left:53px;top:843px;" width="10" height="9" viewBox="0 0 10 9"><path d="M0,0.5 H7 M0,3 H7 M0,5.5 H7" stroke="#8c8c8c" stroke-width="0.9"/></svg><div class="a" style="left:44px;top:855px;width:188px;height:225px;background:#313131;"></div><div class="a" style="left:67px;top:842px;width:29px;height:13px;background:#333333;"></div><div class="a" style="left:126px;top:842px;width:29px;height:13px;background:#333333;"></div><div class="a" style="left:156px;top:842px;width:29px;height:13px;background:#333333;"></div><div class="a" style="left:186px;top:842px;width:28px;height:13px;background:#333333;"></div><div class="a" style="left:97px;top:842px;width:28px;height:13px;background:#313131;"></div><svg style="left:73px;top:843px;" width="22" height="13" viewBox="0 0 22 13"><path d="M2,12 L10.5,3 Q11.5,2 12.5,3 Q13.5,4 12.5,5 L5,13 Z" fill="#6a6a6a"/><path d="M8,13 A5,5 0 0 1 17,13 M10,13 A3,3 0 0 1 15,13" fill="none" stroke="#5a5a5a" stroke-width="0.9"/></svg><svg style="left:102px;top:844px;" width="18" height="16" viewBox="0 0 18 16"><circle cx="9" cy="7.5" r="6.5" fill="none" stroke="#c0c0c0" stroke-width="1.2"/><rect x="6" y="4.5" width="6" height="6" rx="1.2" fill="#c0c0c0"/></svg><svg style="left:133px;top:844px;" width="16" height="12" viewBox="0 0 16 12"><rect x="1" y="1" width="13.5" height="10.5" rx="1.5" fill="#6a6a6a"/><rect x="2" y="2" width="3" height="3" fill="#4a4a4a"/><rect x="5" y="5" width="5" height="5" fill="#333"/><rect x="6.5" y="6.5" width="2" height="2" fill="#6a6a6a"/></svg><svg style="left:163px;top:844px;" width="16" height="12" viewBox="0 0 16 12"><rect x="1" y="2" width="14" height="3" rx="1.5" fill="#6a6a6a"/><rect x="1" y="7.5" width="14" height="3" rx="1.5" fill="#6a6a6a"/><path d="M3,5.5 L4.5,3 L6,5.5 Z M3,11 L4.5,8.5 L6,11 Z" fill="#aaa"/></svg><svg style="left:193px;top:844px;" width="16" height="12" viewBox="0 0 16 12"><path d="M1,1 H6 V5 Q6,7 3.5,7 Q1,7 1,5 Z M3.5,7 V11 M1.5,11 H5.5 M10,1 H15 V5 Q15,7 12.5,7 Q10,7 10,5 Z M12.5,7 V11 M10.5,11 H14.5 M6,3.5 H10" fill="none" stroke="#6a6a6a" stroke-width="1.2"/></svg><div class="a" style="left:209px;top:838px;width:23px;height:17px;background:#3a3a3a;border:1px solid #555;border-radius:2px"></div><svg style="left:209px;top:838px;" width="23" height="17" viewBox="0 0 23 17"><path d="M6,6 L11.5,11 L17,6" fill="none" stroke="#bbb" stroke-width="1.2"/></svg><div class="a" style="left:232px;top:833px;width:2px;height:247px;background:#1c1c1c;"></div><div class="a" style="left:45px;top:869px;width:186px;height:186px;border-radius:50%;background:conic-gradient(from 0deg,hsl(60,100%,50%),hsl(120,90%,48%) 60deg,hsl(180,90%,50%) 120deg,hsl(240,90%,50%) 180deg,hsl(300,90%,50%) 240deg,hsl(360,90%,50%) 300deg,hsl(420,100%,50%) 360deg)"></div><div class="a" style="left:60px;top:884px;width:156px;height:156px;border-radius:50%;background:#313131"></div><div class="a" style="left:89px;top:912px;width:99px;height:99px;background:linear-gradient(to bottom,rgba(0,0,0,0),#000),linear-gradient(to right,#fff,#f00)"></div><svg style="left:162px;top:996px;" width="16" height="16" viewBox="0 0 16 16"><circle cx="8.3" cy="8.2" r="4" fill="none" stroke="#fff" stroke-width="1.3"/></svg><svg style="left:51px;top:909px;" width="30" height="22" viewBox="0 0 30 22"><rect x="6" y="6" width="14" height="8" fill="#e00" stroke="#fff" stroke-width="1.8" transform="rotate(30 13 10)"/></svg><div class="a" style="left:56px;top:1039px;width:21px;height:21px;background:#e4e4ee;border:1px solid #555;border-radius:2px"></div><div class="a" style="left:45px;top:1031px;width:21px;height:21px;background:#100000;border:2px solid #7d8fb5;border-radius:3px"></div><div class="a" style="left:45px;top:1063px;width:31px;height:12px;background:#2b2b2b;border:1px solid #4a4a4a;border-radius:3px"></div><svg style="left:48px;top:1066px;" width="26" height="7" viewBox="0 0 26 7"><path d="M1,2 H25" stroke="#f4f4f4" stroke-width="2.5" stroke-dasharray="3.5 2.5"/><path d="M1,5 H25" stroke="#f4f4f4" stroke-width="2.5" stroke-dasharray="0 3 3.5 2.5"/></svg><div class="a" style="left:101px;top:1062px;width:10px;height:10px;background:#3a3a3a;border:1px solid #b8b8b8;border-radius:1px"></div><div class="t" style="left:103px;top:1061px;font-size:8.5px;color:#d0d0d0;font-weight:bold">H</div><div class="a" style="left:133px;top:1062px;width:10px;height:10px;background:#3a3a3a;border:1px solid #b8b8b8;border-radius:1px"></div><div class="t" style="left:135px;top:1061px;font-size:8.5px;color:#d0d0d0;font-weight:bold">S</div><div class="a" style="left:165px;top:1062px;width:10px;height:10px;background:#3a3a3a;border:1px solid #b8b8b8;border-radius:1px"></div><div class="t" style="left:167px;top:1061px;font-size:8.5px;color:#d0d0d0;font-weight:bold">V</div><div class="t" style="left:120px;top:1061px;font-size:11.5px;color:#a8a8a8;">0</div><div class="t" style="left:148px;top:1061px;font-size:11.5px;color:#a8a8a8;">82</div><div class="t" style="left:183px;top:1061px;font-size:11.5px;color:#a8a8a8;">7</div><svg style="left:206px;top:1055px;" width="18" height="18" viewBox="0 0 18 18"><circle cx="8.5" cy="8" r="7" fill="none" stroke="#bbb" stroke-width="1.2"/><path d="M6.5,4 L12,8 L6.5,12 Z" fill="none" stroke="#bbb" stroke-width="1.2"/></svg><div class="a" style="left:277px;top:80px;width:1385px;height:22px;background:#222222;"></div><div class="a" style="left:277px;top:102px;width:1373px;height:958px;background:#1a1a1a;"></div><div class="a" style="left:1650px;top:102px;width:12px;height:958px;background:#2a2a2a;"></div><div class="a" style="left:411px;top:162px;width:1075px;height:723px;background:#0c0c0c;"></div><div class="a" style="left:412px;top:163px;width:1073px;height:721px;background:#ffffff;"></div><div class="a" style="left:1484px;top:163px;width:1px;height:721px;background:#9a9a9a;"></div><svg style="position:absolute;left:0;top:0" width="1920" height="1080"><rect x="533.5" y="325.5" width="829" height="437" fill="none" stroke="#9292c6" stroke-width="1"/><path d="M948.5,326 V338 M948.5,750 V762 M534,543.5 H546 M1350,543.5 H1362 M942,543.5 H955 M948.5,537 V550" stroke="#c8c8e6" stroke-width="1" fill="none"/><path d="M563.63,615.67 L564.94,613.77 L566.17,611.82 L567.43,609.88 L568.73,607.93 L570.07,606.00 L571.45,604.08 L572.86,602.17 L574.26,600.24 L575.71,598.32 L577.21,596.43 L578.75,594.56 L580.34,592.71 L581.97,590.89 L583.64,589.10 L585.35,587.34 L587.10,585.62 L588.88,583.92 L590.71,582.27 L592.57,580.65 L594.46,579.08 L596.38,577.54 L598.34,576.05 L600.32,574.61 L602.33,573.21 L604.37,571.86 L606.44,570.57 L608.53,569.33 L610.64,568.14 L612.78,567.01 L614.93,565.94 L617.11,564.93 L619.30,563.98 L621.51,563.10 L623.74,562.28 L625.98,561.53 L628.23,560.86 L630.49,560.25 L632.77,559.71 L635.05,559.26 L637.34,558.87 L639.64,558.57 L641.94,558.35 L644.25,558.21 L646.56,558.15 L648.87,558.18 L651.19,558.29 L653.51,558.48 L655.83,558.74 L658.15,559.08 L660.47,559.50 L662.78,559.98 L665.10,560.53 L667.40,561.15 L669.70,561.83 L672.00,562.57 L674.28,563.37 L676.55,564.23 L678.81,565.14 L681.06,566.10 L683.29,567.11 L685.51,568.17 L687.71,569.27 L689.89,570.41 L692.05,571.59 L694.19,572.81 L696.31,574.07 L698.41,575.35 L700.48,576.66 L702.52,578.00 L704.54,579.37 L706.53,580.76 L708.51,582.17 L710.46,583.61 L712.40,585.06 L714.31,586.54 L716.22,588.03 L718.10,589.53 L719.98,591.05 L721.84,592.58 L723.69,594.13 L725.53,595.68 L727.37,597.24 L729.19,598.81 L731.02,600.38 L732.84,601.95 L734.66,603.53 L736.48,605.11 L738.29,606.69 L740.12,608.26 L741.94,609.84 L743.77,611.40 L745.61,612.96 L747.45,614.51 L749.31,616.05 L751.17,617.58 L753.05,619.10 L754.93,620.60 L756.83,622.10 L758.74,623.58 L760.65,625.05 L762.58,626.50 L764.51,627.95 L766.46,629.38 L768.42,630.80 L770.38,632.21 L772.36,633.60 L774.35,634.99 L776.35,636.36 L778.35,637.72 L780.37,639.07 L782.40,640.41 L784.44,641.74 L786.49,643.05 L788.55,644.36 L790.62,645.65 L792.70,646.93 L794.80,648.20 L796.90,649.46 L799.01,650.71 L801.13,651.95 L803.27,653.17 L805.41,654.39 L807.57,655.59 L809.73,656.78 L811.91,657.96 L814.10,659.13 L816.30,660.28 L818.51,661.41 L820.72,662.52 L822.95,663.62 L825.19,664.69 L827.44,665.75 L829.69,666.78 L831.96,667.78 L834.23,668.76 L836.51,669.71 L838.81,670.64 L841.10,671.53 L843.41,672.40 L845.73,673.23 L848.05,674.03 L850.38,674.79 L852.72,675.52 L855.06,676.21 L857.41,676.86 L859.77,677.47 L862.14,678.04 L864.51,678.57 L866.88,679.06 L869.27,679.50 L871.65,679.89 L874.05,680.24 L876.45,680.53 L878.85,680.78 L881.26,680.97 L883.67,681.11 L886.09,681.20 L888.51,681.23 L890.93,681.21 L893.36,681.13 L895.78,681.00 L898.21,680.82 L900.63,680.58 L903.05,680.29 L905.47,679.96 L907.88,679.57 L910.30,679.13 L912.70,678.65 L915.11,678.12 L917.50,677.55 L919.89,676.93 L922.27,676.26 L924.64,675.55 L927.00,674.80 L929.36,674.01 L931.70,673.17 L934.03,672.30 L936.35,671.38 L938.66,670.43 L940.95,669.44 L943.23,668.41 L945.49,667.35 L947.74,666.25 L949.97,665.11 L952.18,663.95 L954.38,662.75 L956.55,661.51 L958.71,660.25 L960.85,658.95 L962.96,657.63 L965.06,656.28 L967.13,654.90 L969.18,653.49 L971.20,652.05 L973.20,650.59 L975.18,649.10 L977.12,647.59 L979.05,646.06 L980.94,644.50 L982.82,642.92 L984.66,641.31 L986.48,639.69 L988.28,638.04 L990.05,636.36 L991.79,634.67 L993.51,632.95 L995.21,631.21 L996.88,629.46 L998.52,627.68 L1000.14,625.87 L1001.74,624.05 L1003.31,622.21 L1004.86,620.35 L1006.38,618.47 L1007.88,616.57 L1009.36,614.66 L1010.81,612.72 L1012.24,610.77 L1013.64,608.79 L1015.02,606.80 L1016.38,604.79 L1017.72,602.77 L1019.03,600.73 L1020.32,598.67 L1021.58,596.59 L1022.82,594.50 L1024.05,592.40 L1025.25,590.29 L1026.44,588.17 L1027.62,586.04 L1028.79,583.91 L1029.95,581.78 L1031.12,579.64 L1032.28,577.51 L1033.46,575.38 L1034.64,573.26 L1035.83,571.15 L1037.04,569.05 L1038.27,566.96 L1039.52,564.88 L1040.79,562.83 L1042.09,560.78 L1043.43,558.76 L1044.80,556.77 L1046.21,554.79 L1047.65,552.84 L1049.14,550.92 L1050.67,549.03 L1052.25,547.17 L1053.86,545.35 L1055.50,543.56 L1057.19,541.81 L1058.91,540.10 L1060.67,538.43 L1062.46,536.81 L1064.29,535.24 L1066.15,533.71 L1068.04,532.24 L1069.97,530.83 L1071.92,529.47 L1073.91,528.17 L1075.92,526.93 L1077.96,525.75 L1080.03,524.65 L1082.12,523.60 L1084.24,522.63 L1086.38,521.73 L1088.55,520.90 L1090.75,520.14 L1092.96,519.44 L1095.20,518.81 L1097.46,518.25 L1099.74,517.74 L1102.04,517.30 L1104.36,516.91 L1106.69,516.59 L1109.04,516.32 L1111.41,516.11 L1113.78,515.95 L1116.17,515.84 L1118.57,515.79 L1120.97,515.78 L1123.39,515.82 L1125.81,515.91 L1128.24,516.05 L1130.67,516.23 L1133.11,516.45 L1135.54,516.71 L1137.98,517.02 L1140.42,517.36 L1142.85,517.74 L1145.28,518.15 L1147.71,518.60 L1150.14,519.08 L1152.55,519.59 L1154.96,520.14 L1157.36,520.71 L1159.75,521.30 L1162.12,521.93 L1164.49,522.57 L1166.85,523.25 L1169.19,523.95 L1171.53,524.67 L1173.85,525.42 L1176.17,526.19 L1178.47,526.98 L1180.77,527.80 L1183.05,528.63 L1185.32,529.49 L1187.58,530.37 L1189.84,531.27 L1192.08,532.19 L1194.31,533.13 L1196.53,534.09 L1198.74,535.06 L1200.94,536.05 L1203.13,537.06 L1205.31,538.09 L1207.48,539.13 L1209.64,540.19 L1211.79,541.27 L1213.92,542.36 L1216.05,543.46 L1218.17,544.58 L1220.28,545.71 L1222.38,546.85 L1224.46,548.00 L1226.54,549.17 L1228.61,550.35 L1230.66,551.54 L1232.71,552.74 L1234.75,553.95 L1236.78,555.16 L1238.80,556.39 L1240.82,557.63 L1242.83,558.88 L1244.84,560.14 L1246.84,561.40 L1248.83,562.68 L1250.83,563.96 L1252.82,565.25 L1254.81,566.55 L1256.80,567.85 L1258.79,569.17 L1260.78,570.49 L1262.77,571.82 L1264.76,573.16 L1266.75,574.50 L1268.75,575.85 L1270.76,577.20 L1272.76,578.56 L1274.78,579.93 L1276.80,581.31 L1278.82,582.68 L1280.86,584.07 L1282.90,585.46 L1284.95,586.85 L1287.01,588.25 L1289.09,589.65 L1291.17,591.06 L1293.27,592.47 L1295.37,593.88 L1297.50,595.29 L1299.64,596.70 L1301.79,598.09 L1303.95,599.47 L1306.13,600.82 L1308.32,602.15 L1310.52,603.43 L1312.73,604.68 L1314.96,605.88 L1317.20,607.02 L1319.45,608.10 L1321.71,609.12 L1323.98,610.07 L1326.26,610.94 L1328.55,611.72 L1330.85,612.42 L1333.16,613.01 L1335.49,613.51 L1337.82,613.89 L1340.16,614.16 L1342.50,614.30 L1344.86,614.32 L1347.22,614.20 L1349.58,613.94 L1351.93,613.55 L1354.27,613.03 L1356.60,612.38 L1358.91,611.62 L1361.20,610.74 L1363.47,609.75 L1365.71,608.65 L1367.92,607.46 L1370.10,606.17 L1372.24,604.79 L1374.34,603.32 L1376.39,601.77 L1378.40,600.14 L1380.35,598.44 L1382.26,596.67 L1384.10,594.83 L1385.89,592.93 L1387.61,590.98 L1389.26,588.97 L1390.84,586.92 L1392.35,584.82 L1393.78,582.68 L1395.12,580.51 L1396.39,578.31 L1397.58,576.09 L1398.70,573.86 L1399.67,571.58 L1400.55,569.29 L1401.35,567.00 L1402.08,564.72 L1402.72,562.44 L1403.26,560.18 L1403.61,557.91 L1402.65,557.64 L1401.74,559.72 L1400.92,561.86 L1400.05,564.00 L1399.14,566.15 L1398.18,568.31 L1397.15,570.46 L1396.08,572.60 L1395.01,574.76 L1393.86,576.90 L1392.64,579.02 L1391.34,581.11 L1389.96,583.17 L1388.51,585.19 L1386.99,587.17 L1385.40,589.10 L1383.74,590.98 L1382.02,592.81 L1380.25,594.58 L1378.41,596.28 L1376.53,597.92 L1374.60,599.49 L1372.63,600.98 L1370.62,602.38 L1368.57,603.70 L1366.49,604.94 L1364.39,606.08 L1362.26,607.12 L1360.11,608.05 L1357.94,608.89 L1355.76,609.61 L1353.57,610.21 L1351.38,610.70 L1349.18,611.07 L1346.99,611.31 L1344.79,611.42 L1342.60,611.40 L1340.41,611.27 L1338.22,611.02 L1336.02,610.66 L1333.83,610.19 L1331.63,609.62 L1329.44,608.96 L1327.24,608.21 L1325.05,607.37 L1322.86,606.46 L1320.67,605.48 L1318.49,604.42 L1316.31,603.31 L1314.13,602.14 L1311.96,600.92 L1309.80,599.65 L1307.64,598.35 L1305.50,597.02 L1303.35,595.65 L1301.22,594.27 L1299.10,592.87 L1296.99,591.47 L1294.88,590.06 L1292.79,588.65 L1290.71,587.25 L1288.64,585.85 L1286.58,584.45 L1284.53,583.06 L1282.49,581.67 L1280.45,580.29 L1278.43,578.91 L1276.41,577.53 L1274.39,576.17 L1272.38,574.80 L1270.38,573.44 L1268.38,572.09 L1266.38,570.75 L1264.38,569.41 L1262.38,568.08 L1260.39,566.75 L1258.39,565.43 L1256.40,564.12 L1254.40,562.82 L1252.40,561.52 L1250.40,560.23 L1248.39,558.95 L1246.38,557.68 L1244.37,556.42 L1242.34,555.16 L1240.32,553.92 L1238.28,552.68 L1236.24,551.45 L1234.18,550.24 L1232.12,549.03 L1230.05,547.83 L1227.97,546.65 L1225.88,545.47 L1223.77,544.31 L1221.66,543.16 L1219.53,542.02 L1217.40,540.89 L1215.25,539.78 L1213.09,538.68 L1210.92,537.59 L1208.75,536.53 L1206.56,535.47 L1204.35,534.44 L1202.14,533.42 L1199.92,532.41 L1197.69,531.43 L1195.44,530.46 L1193.19,529.51 L1190.92,528.58 L1188.65,527.67 L1186.36,526.78 L1184.06,525.92 L1181.75,525.07 L1179.43,524.24 L1177.10,523.44 L1174.76,522.66 L1172.40,521.91 L1170.04,521.17 L1167.66,520.47 L1165.27,519.78 L1162.87,519.12 L1160.47,518.49 L1158.04,517.89 L1155.61,517.31 L1153.17,516.76 L1150.72,516.24 L1148.26,515.75 L1145.79,515.30 L1143.32,514.88 L1140.84,514.49 L1138.36,514.14 L1135.88,513.83 L1133.39,513.57 L1130.91,513.34 L1128.43,513.15 L1125.95,513.02 L1123.47,512.92 L1121.00,512.88 L1118.53,512.89 L1116.07,512.94 L1113.62,513.05 L1111.18,513.22 L1108.75,513.44 L1106.33,513.71 L1103.92,514.05 L1101.53,514.44 L1099.16,514.90 L1096.80,515.42 L1094.46,516.01 L1092.14,516.66 L1089.84,517.39 L1087.56,518.18 L1085.30,519.04 L1083.07,519.98 L1080.87,520.99 L1078.69,522.07 L1076.55,523.22 L1074.43,524.44 L1072.35,525.72 L1070.30,527.06 L1068.28,528.47 L1066.29,529.93 L1064.34,531.45 L1062.43,533.02 L1060.55,534.64 L1058.70,536.30 L1056.89,538.02 L1055.12,539.77 L1053.39,541.57 L1051.70,543.41 L1050.05,545.28 L1048.44,547.18 L1046.87,549.12 L1045.34,551.09 L1043.86,553.09 L1042.42,555.11 L1041.02,557.15 L1039.66,559.21 L1038.34,561.28 L1037.04,563.37 L1035.78,565.48 L1034.53,567.59 L1033.31,569.72 L1032.11,571.84 L1030.92,573.98 L1029.74,576.11 L1028.57,578.25 L1027.41,580.39 L1026.24,582.52 L1025.08,584.64 L1023.90,586.76 L1022.72,588.86 L1021.53,590.96 L1020.32,593.03 L1019.10,595.10 L1017.85,597.14 L1016.58,599.17 L1015.29,601.19 L1013.97,603.18 L1012.63,605.16 L1011.27,607.13 L1009.89,609.07 L1008.48,611.00 L1007.05,612.90 L1005.60,614.79 L1004.12,616.66 L1002.62,618.51 L1001.09,620.34 L999.55,622.16 L997.98,623.95 L996.38,625.72 L994.76,627.47 L993.12,629.20 L991.45,630.91 L989.76,632.60 L988.04,634.27 L986.30,635.91 L984.53,637.54 L982.74,639.14 L980.93,640.72 L979.09,642.27 L977.22,643.80 L975.33,645.31 L973.41,646.80 L971.47,648.26 L969.51,649.70 L967.52,651.11 L965.50,652.49 L963.46,653.85 L961.41,655.18 L959.32,656.49 L957.22,657.76 L955.10,659.00 L952.96,660.21 L950.81,661.39 L948.63,662.54 L946.44,663.65 L944.23,664.73 L942.01,665.78 L939.78,666.79 L937.53,667.76 L935.26,668.69 L932.99,669.59 L930.70,670.45 L928.41,671.27 L926.10,672.04 L923.79,672.78 L921.46,673.47 L919.13,674.13 L916.80,674.73 L914.45,675.30 L912.11,675.81 L909.75,676.29 L907.40,676.71 L905.04,677.09 L902.68,677.42 L900.32,677.70 L897.95,677.93 L895.59,678.11 L893.23,678.23 L890.87,678.31 L888.51,678.33 L886.16,678.30 L883.81,678.22 L881.46,678.08 L879.11,677.89 L876.77,677.65 L874.43,677.36 L872.10,677.02 L869.76,676.64 L867.44,676.21 L865.11,675.74 L862.79,675.22 L860.48,674.66 L858.17,674.06 L855.86,673.42 L853.56,672.74 L851.26,672.03 L848.97,671.28 L846.69,670.49 L844.41,669.67 L842.14,668.82 L839.87,667.94 L837.62,667.03 L835.36,666.09 L833.12,665.12 L830.88,664.13 L828.65,663.11 L826.43,662.07 L824.22,661.01 L822.01,659.93 L819.82,658.82 L817.63,657.70 L815.45,656.56 L813.28,655.41 L811.12,654.24 L808.97,653.05 L806.83,651.86 L804.71,650.65 L802.59,649.44 L800.48,648.21 L798.38,646.97 L796.29,645.72 L794.22,644.46 L792.15,643.19 L790.10,641.90 L788.05,640.61 L786.02,639.30 L783.99,637.99 L781.98,636.66 L779.97,635.32 L777.98,633.97 L776.00,632.60 L774.03,631.23 L772.06,629.84 L770.11,628.45 L768.17,627.04 L766.24,625.62 L764.32,624.18 L762.41,622.74 L760.51,621.28 L758.62,619.81 L756.74,618.33 L754.87,616.84 L753.01,615.33 L751.15,613.82 L749.31,612.29 L747.48,610.75 L745.65,609.19 L743.83,607.64 L742.01,606.07 L740.19,604.50 L738.38,602.92 L736.56,601.34 L734.74,599.76 L732.91,598.18 L731.08,596.61 L729.25,595.03 L727.40,593.47 L725.55,591.90 L723.69,590.35 L721.81,588.81 L719.92,587.27 L718.01,585.75 L716.09,584.25 L714.15,582.76 L712.19,581.28 L710.21,579.83 L708.21,578.39 L706.18,576.98 L704.13,575.59 L702.05,574.23 L699.94,572.89 L697.81,571.58 L695.65,570.30 L693.47,569.06 L691.26,567.86 L689.03,566.69 L686.78,565.56 L684.52,564.48 L682.23,563.45 L679.93,562.46 L677.61,561.53 L675.27,560.65 L672.92,559.83 L670.56,559.06 L668.19,558.36 L665.81,557.72 L663.42,557.15 L661.02,556.65 L658.61,556.22 L656.20,555.87 L653.79,555.59 L651.37,555.39 L648.96,555.28 L646.54,555.25 L644.12,555.31 L641.71,555.46 L639.31,555.69 L636.91,556.01 L634.53,556.40 L632.15,556.88 L629.79,557.44 L627.44,558.07 L625.10,558.77 L622.78,559.55 L620.48,560.39 L618.19,561.30 L615.92,562.28 L613.68,563.32 L611.46,564.43 L609.26,565.59 L607.08,566.81 L604.93,568.09 L602.80,569.42 L600.71,570.81 L598.64,572.24 L596.60,573.73 L594.60,575.25 L592.62,576.83 L590.68,578.44 L588.78,580.10 L586.91,581.80 L585.08,583.53 L583.29,585.30 L581.54,587.10 L579.83,588.94 L578.16,590.80 L576.53,592.69 L574.95,594.61 L573.42,596.55 L571.93,598.51 L570.49,600.49 L569.16,602.54 L567.90,604.60 L566.71,606.69 L565.57,608.79 L564.51,610.90 L563.53,613.03 L562.74,615.22 Z" fill="#140606"/><path d="M1074.11,390.32 L1074.69,389.99 L1075.21,389.61 L1075.72,389.22 L1076.23,388.84 L1076.74,388.45 L1077.25,388.07 L1077.76,387.69 L1078.28,387.32 L1078.79,386.95 L1079.31,386.58 L1079.84,386.22 L1080.36,385.86 L1080.89,385.51 L1081.42,385.16 L1081.95,384.82 L1082.49,384.48 L1083.02,384.15 L1083.57,383.82 L1084.10,383.48 L1084.63,383.14 L1085.17,382.80 L1085.71,382.47 L1086.25,382.14 L1086.79,381.82 L1087.34,381.50 L1087.89,381.19 L1088.45,380.89 L1089.01,380.59 L1089.57,380.30 L1090.13,380.01 L1090.70,379.73 L1091.27,379.45 L1091.84,379.18 L1092.41,378.91 L1092.99,378.65 L1093.57,378.40 L1094.15,378.15 L1094.74,377.91 L1095.33,377.67 L1095.92,377.44 L1096.51,377.22 L1097.11,377.00 L1097.70,376.79 L1098.30,376.58 L1098.90,376.38 L1099.50,376.19 L1100.11,376.00 L1100.72,375.82 L1101.32,375.64 L1101.93,375.48 L1102.54,375.31 L1103.16,375.16 L1103.77,375.00 L1104.39,374.86 L1105.01,374.72 L1105.62,374.59 L1106.24,374.47 L1106.86,374.35 L1107.49,374.23 L1108.11,374.13 L1108.73,374.03 L1109.36,373.94 L1109.98,373.85 L1110.61,373.77 L1111.24,373.70 L1111.86,373.63 L1112.49,373.57 L1113.12,373.52 L1113.75,373.47 L1114.38,373.43 L1115.01,373.40 L1115.64,373.37 L1116.27,373.35 L1116.90,373.34 L1117.53,373.33 L1118.16,373.33 L1118.79,373.34 L1119.42,373.35 L1120.05,373.38 L1120.68,373.40 L1121.31,373.44 L1121.93,373.48 L1122.56,373.53 L1123.19,373.59 L1123.82,373.65 L1124.44,373.72 L1125.07,373.80 L1125.69,373.89 L1126.32,373.98 L1126.94,374.08 L1127.56,374.18 L1128.18,374.30 L1128.80,374.42 L1129.42,374.55 L1130.04,374.68 L1130.65,374.83 L1131.27,374.98 L1131.88,375.14 L1132.49,375.30 L1133.10,375.47 L1133.71,375.65 L1134.33,375.81 L1134.94,375.97 L1135.56,376.14 L1136.17,376.32 L1136.78,376.51 L1137.39,376.70 L1138.01,376.90 L1138.62,377.11 L1139.23,377.32 L1139.84,377.54 L1140.44,377.77 L1141.05,378.00 L1141.66,378.24 L1142.27,378.48 L1142.88,378.73 L1143.50,378.97 L1144.12,379.21 L1144.78,379.39 L1145.22,378.61 L1144.72,378.13 L1144.16,377.73 L1143.60,377.35 L1143.03,376.99 L1142.45,376.64 L1141.86,376.30 L1141.27,375.97 L1140.67,375.65 L1140.07,375.35 L1139.47,375.05 L1138.86,374.76 L1138.25,374.48 L1137.64,374.21 L1137.02,373.94 L1136.40,373.69 L1135.78,373.45 L1135.15,373.21 L1134.52,372.98 L1133.88,372.79 L1133.24,372.60 L1132.59,372.43 L1131.95,372.26 L1131.30,372.10 L1130.65,371.95 L1130.01,371.81 L1129.36,371.67 L1128.70,371.55 L1128.05,371.43 L1127.40,371.31 L1126.74,371.21 L1126.09,371.11 L1125.43,371.02 L1124.77,370.94 L1124.12,370.87 L1123.46,370.80 L1122.80,370.74 L1122.14,370.69 L1121.48,370.64 L1120.82,370.61 L1120.16,370.58 L1119.50,370.55 L1118.84,370.54 L1118.18,370.53 L1117.52,370.53 L1116.86,370.54 L1116.20,370.55 L1115.54,370.57 L1114.88,370.60 L1114.22,370.63 L1113.56,370.68 L1112.90,370.72 L1112.24,370.78 L1111.58,370.84 L1110.93,370.91 L1110.27,370.99 L1109.61,371.07 L1108.96,371.16 L1108.31,371.26 L1107.65,371.37 L1107.00,371.48 L1106.35,371.59 L1105.70,371.72 L1105.05,371.85 L1104.41,371.99 L1103.76,372.13 L1103.12,372.28 L1102.48,372.44 L1101.84,372.60 L1101.20,372.77 L1100.56,372.95 L1099.93,373.13 L1099.29,373.32 L1098.66,373.52 L1098.03,373.72 L1097.40,373.93 L1096.78,374.15 L1096.15,374.37 L1095.53,374.60 L1094.91,374.83 L1094.30,375.07 L1093.68,375.32 L1093.07,375.57 L1092.46,375.83 L1091.86,376.09 L1091.25,376.36 L1090.65,376.64 L1090.06,376.92 L1089.46,377.21 L1088.87,377.51 L1088.28,377.81 L1087.69,378.12 L1087.11,378.43 L1086.53,378.75 L1085.96,379.07 L1085.38,379.40 L1084.81,379.74 L1084.25,380.08 L1083.68,380.43 L1083.13,380.78 L1082.57,381.14 L1082.03,381.52 L1081.50,381.92 L1080.98,382.32 L1080.46,382.73 L1079.94,383.14 L1079.43,383.56 L1078.93,383.98 L1078.43,384.42 L1077.94,384.85 L1077.45,385.30 L1076.97,385.75 L1076.50,386.20 L1076.03,386.66 L1075.57,387.13 L1075.12,387.61 L1074.68,388.10 L1074.25,388.59 L1073.83,389.11 L1073.49,389.68 Z" fill="#140606"/><path d="M1056.99,414.55 L1058.03,413.98 L1059.00,413.35 L1059.95,412.70 L1060.88,412.06 L1061.81,411.42 L1062.73,410.79 L1063.64,410.16 L1064.55,409.54 L1065.46,408.93 L1066.36,408.33 L1067.24,407.73 L1068.10,407.11 L1068.96,406.49 L1069.82,405.89 L1070.68,405.30 L1071.53,404.72 L1072.38,404.15 L1073.23,403.59 L1074.08,403.04 L1074.92,402.51 L1075.77,401.98 L1076.61,401.46 L1077.45,400.96 L1078.29,400.46 L1079.13,399.97 L1079.96,399.50 L1080.80,399.04 L1081.63,398.58 L1082.46,398.14 L1083.30,397.71 L1084.13,397.29 L1084.95,396.88 L1085.78,396.48 L1086.61,396.09 L1087.44,395.71 L1088.26,395.35 L1089.09,394.99 L1089.91,394.64 L1090.73,394.31 L1091.56,393.98 L1092.38,393.67 L1093.20,393.36 L1094.02,393.07 L1094.84,392.79 L1095.67,392.52 L1096.49,392.26 L1097.31,392.00 L1098.13,391.76 L1098.95,391.54 L1099.77,391.32 L1100.59,391.11 L1101.42,390.91 L1102.24,390.73 L1103.06,390.55 L1103.89,390.39 L1104.71,390.23 L1105.53,390.09 L1106.36,389.95 L1107.19,389.83 L1108.01,389.72 L1108.84,389.62 L1109.67,389.53 L1110.50,389.45 L1111.33,389.38 L1112.17,389.32 L1113.00,389.28 L1113.84,389.24 L1114.67,389.21 L1115.51,389.20 L1116.35,389.19 L1117.20,389.20 L1118.04,389.22 L1118.89,389.24 L1119.74,389.28 L1120.59,389.33 L1121.44,389.39 L1122.29,389.46 L1123.15,389.55 L1124.01,389.64 L1124.87,389.74 L1125.74,389.86 L1126.61,389.98 L1127.47,390.12 L1128.35,390.27 L1129.22,390.42 L1130.10,390.59 L1130.98,390.77 L1131.87,390.97 L1132.75,391.17 L1133.64,391.38 L1134.54,391.61 L1135.43,391.84 L1136.34,392.09 L1137.24,392.35 L1138.15,392.61 L1139.06,392.89 L1139.97,393.18 L1140.89,393.49 L1141.81,393.80 L1142.74,394.12 L1143.67,394.46 L1144.60,394.81 L1145.54,395.17 L1146.48,395.53 L1147.43,395.92 L1148.38,396.31 L1149.33,396.71 L1150.29,397.13 L1151.27,397.51 L1152.26,397.90 L1153.26,398.30 L1154.26,398.71 L1155.27,399.12 L1156.29,399.54 L1157.31,399.97 L1158.35,400.40 L1159.40,400.84 L1160.46,401.26 L1161.59,401.60 L1162.01,400.80 L1161.10,400.05 L1160.14,399.41 L1159.17,398.80 L1158.20,398.22 L1157.22,397.65 L1156.25,397.10 L1155.28,396.56 L1154.31,396.04 L1153.34,395.53 L1152.38,395.03 L1151.41,394.56 L1150.43,394.14 L1149.45,393.72 L1148.48,393.32 L1147.51,392.93 L1146.55,392.55 L1145.59,392.19 L1144.63,391.83 L1143.68,391.49 L1142.73,391.15 L1141.78,390.83 L1140.83,390.52 L1139.89,390.22 L1138.96,389.93 L1138.02,389.66 L1137.09,389.39 L1136.16,389.14 L1135.23,388.89 L1134.31,388.66 L1133.39,388.44 L1132.47,388.23 L1131.56,388.03 L1130.65,387.85 L1129.74,387.67 L1128.83,387.51 L1127.93,387.36 L1127.02,387.21 L1126.12,387.08 L1125.22,386.96 L1124.33,386.86 L1123.44,386.76 L1122.54,386.67 L1121.65,386.60 L1120.77,386.54 L1119.88,386.49 L1119.00,386.45 L1118.12,386.42 L1117.24,386.40 L1116.36,386.39 L1115.48,386.40 L1114.61,386.41 L1113.73,386.44 L1112.86,386.48 L1111.99,386.53 L1111.12,386.59 L1110.25,386.66 L1109.39,386.74 L1108.52,386.84 L1107.66,386.94 L1106.79,387.06 L1105.93,387.19 L1105.07,387.33 L1104.21,387.48 L1103.35,387.64 L1102.49,387.81 L1101.64,387.99 L1100.78,388.19 L1099.92,388.39 L1099.07,388.61 L1098.22,388.83 L1097.36,389.07 L1096.51,389.32 L1095.65,389.58 L1094.80,389.85 L1093.95,390.13 L1093.10,390.43 L1092.25,390.73 L1091.39,391.05 L1090.54,391.37 L1089.69,391.71 L1088.84,392.05 L1087.99,392.41 L1087.14,392.78 L1086.28,393.16 L1085.43,393.55 L1084.58,393.95 L1083.72,394.36 L1082.87,394.79 L1082.02,395.22 L1081.16,395.66 L1080.31,396.12 L1079.45,396.58 L1078.59,397.06 L1077.74,397.55 L1076.88,398.04 L1076.02,398.55 L1075.16,399.07 L1074.29,399.60 L1073.43,400.14 L1072.56,400.69 L1071.70,401.25 L1070.83,401.82 L1069.96,402.40 L1069.09,402.99 L1068.22,403.59 L1067.35,404.21 L1066.47,404.83 L1065.59,405.46 L1064.74,406.14 L1063.89,406.84 L1063.04,407.55 L1062.19,408.27 L1061.34,409.00 L1060.50,409.75 L1059.65,410.52 L1058.81,411.30 L1057.98,412.10 L1057.16,412.93 L1056.41,413.85 Z" fill="#140606"/><path d="M1045.96,451.48 L1047.16,450.38 L1048.27,449.23 L1049.35,448.08 L1050.43,446.94 L1051.51,445.81 L1052.58,444.70 L1053.66,443.61 L1054.72,442.52 L1055.75,441.41 L1056.79,440.32 L1057.83,439.26 L1058.88,438.21 L1059.94,437.18 L1061.00,436.17 L1062.07,435.18 L1063.14,434.20 L1064.22,433.25 L1065.31,432.31 L1066.40,431.40 L1067.49,430.50 L1068.60,429.62 L1069.70,428.76 L1070.82,427.92 L1071.94,427.10 L1073.06,426.29 L1074.19,425.51 L1075.32,424.74 L1076.46,423.99 L1077.60,423.26 L1078.75,422.55 L1079.91,421.86 L1081.07,421.18 L1082.23,420.53 L1083.40,419.89 L1084.57,419.27 L1085.74,418.67 L1086.93,418.09 L1088.11,417.53 L1089.30,416.98 L1090.49,416.45 L1091.69,415.94 L1092.89,415.45 L1094.10,414.98 L1095.31,414.53 L1096.52,414.09 L1097.74,413.67 L1098.96,413.27 L1100.19,412.89 L1101.42,412.53 L1102.65,412.18 L1103.88,411.86 L1105.12,411.55 L1106.37,411.26 L1107.61,410.98 L1108.86,410.73 L1110.11,410.49 L1111.37,410.27 L1112.63,410.07 L1113.89,409.89 L1115.15,409.72 L1116.42,409.57 L1117.69,409.44 L1118.96,409.33 L1120.24,409.24 L1121.51,409.16 L1122.79,409.10 L1124.08,409.06 L1125.36,409.04 L1126.65,409.03 L1127.94,409.04 L1129.23,409.07 L1130.52,409.12 L1131.82,409.19 L1133.12,409.27 L1134.42,409.37 L1135.72,409.49 L1137.02,409.62 L1138.33,409.78 L1139.63,409.95 L1140.94,410.14 L1142.25,410.34 L1143.56,410.57 L1144.88,410.81 L1146.19,411.07 L1147.50,411.34 L1148.82,411.64 L1150.14,411.95 L1151.46,412.28 L1152.78,412.62 L1154.10,412.99 L1155.42,413.37 L1156.74,413.77 L1158.06,414.18 L1159.38,414.62 L1160.71,415.07 L1162.03,415.53 L1163.35,416.02 L1164.68,416.52 L1166.00,417.04 L1167.33,417.58 L1168.65,418.14 L1169.98,418.71 L1171.30,419.30 L1172.63,419.90 L1173.95,420.53 L1175.28,421.17 L1176.60,421.83 L1177.92,422.50 L1179.24,423.20 L1180.57,423.91 L1181.89,424.63 L1183.23,425.33 L1184.59,426.03 L1185.96,426.73 L1187.32,427.45 L1188.70,428.18 L1190.08,428.91 L1191.48,429.64 L1192.95,430.28 L1193.45,429.52 L1192.28,428.42 L1191.02,427.44 L1189.75,426.49 L1188.47,425.58 L1187.17,424.70 L1185.87,423.83 L1184.57,422.99 L1183.25,422.19 L1181.90,421.45 L1180.56,420.72 L1179.21,420.02 L1177.86,419.33 L1176.51,418.65 L1175.16,418.00 L1173.81,417.36 L1172.45,416.74 L1171.10,416.14 L1169.75,415.56 L1168.40,414.99 L1167.04,414.44 L1165.69,413.91 L1164.33,413.40 L1162.98,412.90 L1161.62,412.42 L1160.27,411.96 L1158.92,411.52 L1157.56,411.09 L1156.21,410.68 L1154.86,410.29 L1153.50,409.92 L1152.15,409.56 L1150.80,409.23 L1149.45,408.91 L1148.10,408.61 L1146.75,408.32 L1145.40,408.06 L1144.05,407.81 L1142.71,407.58 L1141.36,407.37 L1140.02,407.17 L1138.67,407.00 L1137.33,406.84 L1135.99,406.70 L1134.65,406.58 L1133.31,406.48 L1131.98,406.39 L1130.65,406.32 L1129.31,406.27 L1127.98,406.24 L1126.66,406.23 L1125.33,406.24 L1124.01,406.26 L1122.68,406.30 L1121.37,406.36 L1120.05,406.44 L1118.73,406.54 L1117.42,406.65 L1116.11,406.79 L1114.81,406.94 L1113.50,407.11 L1112.20,407.30 L1110.91,407.51 L1109.61,407.74 L1108.32,407.98 L1107.03,408.24 L1105.75,408.53 L1104.47,408.83 L1103.19,409.14 L1101.91,409.48 L1100.64,409.84 L1099.37,410.21 L1098.11,410.61 L1096.85,411.02 L1095.60,411.45 L1094.34,411.90 L1093.10,412.37 L1091.85,412.85 L1090.62,413.36 L1089.38,413.88 L1088.15,414.43 L1086.93,414.99 L1085.71,415.57 L1084.49,416.17 L1083.28,416.79 L1082.07,417.42 L1080.87,418.08 L1079.67,418.75 L1078.48,419.45 L1077.30,420.16 L1076.11,420.89 L1074.94,421.64 L1073.77,422.41 L1072.60,423.20 L1071.44,424.00 L1070.29,424.83 L1069.14,425.67 L1068.00,426.54 L1066.87,427.42 L1065.73,428.32 L1064.61,429.24 L1063.49,430.18 L1062.38,431.14 L1061.27,432.12 L1060.18,433.11 L1059.08,434.13 L1058.00,435.16 L1056.92,436.22 L1055.84,437.29 L1054.77,438.38 L1053.71,439.49 L1052.66,440.62 L1051.65,441.80 L1050.67,443.02 L1049.70,444.26 L1048.75,445.52 L1047.81,446.81 L1046.89,448.13 L1046.01,449.48 L1045.24,450.92 Z" fill="#140606"/><path d="M1124.64,339.88 L1126.46,338.98 L1128.22,338.02 L1129.97,337.05 L1131.71,336.08 L1133.43,335.13 L1135.15,334.18 L1136.86,333.25 L1138.57,332.33 L1140.26,331.42 L1141.95,330.52 L1143.64,329.63 L1145.31,328.76 L1146.99,327.90 L1148.65,327.06 L1150.31,326.23 L1151.95,325.39 L1153.58,324.55 L1155.21,323.73 L1156.83,322.92 L1158.44,322.12 L1160.05,321.34 L1161.66,320.58 L1163.26,319.83 L1164.85,319.09 L1166.44,318.36 L1168.03,317.65 L1169.61,316.96 L1171.18,316.28 L1172.75,315.61 L1174.31,314.96 L1175.87,314.32 L1177.42,313.70 L1178.97,313.09 L1180.52,312.49 L1182.05,311.91 L1183.59,311.34 L1185.11,310.79 L1186.64,310.25 L1188.15,309.73 L1189.67,309.22 L1191.17,308.72 L1192.68,308.24 L1194.17,307.77 L1195.66,307.32 L1197.15,306.88 L1198.63,306.46 L1200.11,306.04 L1201.58,305.65 L1203.04,305.27 L1204.50,304.90 L1205.96,304.54 L1207.41,304.20 L1208.85,303.88 L1210.29,303.57 L1211.73,303.27 L1213.16,302.99 L1214.58,302.72 L1216.00,302.46 L1217.41,302.22 L1218.82,301.99 L1220.23,301.78 L1221.63,301.58 L1223.02,301.40 L1224.41,301.23 L1225.79,301.07 L1227.17,300.93 L1228.54,300.80 L1229.91,300.69 L1231.27,300.59 L1232.63,300.51 L1233.98,300.44 L1235.33,300.38 L1236.67,300.34 L1238.00,300.31 L1239.33,300.29 L1240.66,300.29 L1241.98,300.30 L1243.30,300.33 L1244.61,300.37 L1245.91,300.43 L1247.21,300.50 L1248.51,300.58 L1249.80,300.68 L1251.09,300.79 L1252.37,300.92 L1253.64,301.06 L1254.91,301.21 L1256.18,301.38 L1257.44,301.56 L1258.69,301.76 L1259.94,301.97 L1261.19,302.19 L1262.42,302.43 L1263.66,302.68 L1264.89,302.95 L1266.11,303.23 L1267.33,303.52 L1268.55,303.83 L1269.76,304.15 L1270.96,304.49 L1272.16,304.84 L1273.36,305.21 L1274.55,305.59 L1275.73,305.98 L1276.91,306.39 L1278.08,306.81 L1279.25,307.24 L1280.42,307.69 L1281.58,308.15 L1282.73,308.63 L1283.88,309.12 L1285.03,309.63 L1286.17,310.15 L1287.30,310.68 L1288.43,311.23 L1289.56,311.79 L1290.68,312.36 L1291.80,312.95 L1292.91,313.56 L1294.01,314.18 L1295.11,314.81 L1296.21,315.45 L1297.30,316.11 L1298.39,316.79 L1299.47,317.48 L1300.55,318.18 L1301.62,318.90 L1302.69,319.63 L1303.75,320.37 L1304.81,321.13 L1305.86,321.91 L1306.91,322.69 L1307.95,323.49 L1308.99,324.31 L1310.02,325.14 L1311.05,325.99 L1312.07,326.84 L1313.09,327.72 L1314.11,328.60 L1315.12,329.50 L1316.12,330.42 L1317.12,331.35 L1318.12,332.29 L1319.11,333.25 L1320.09,334.22 L1321.07,335.21 L1322.05,336.21 L1323.02,337.23 L1323.98,338.26 L1324.94,339.30 L1325.90,340.36 L1326.85,341.43 L1327.80,342.52 L1328.74,343.62 L1329.68,344.73 L1330.61,345.86 L1331.53,347.00 L1332.46,348.16 L1333.37,349.33 L1334.29,350.52 L1335.19,351.72 L1336.10,352.94 L1336.99,354.17 L1337.89,355.41 L1338.78,356.67 L1339.66,357.94 L1340.54,359.23 L1341.41,360.53 L1342.28,361.84 L1343.14,363.17 L1344.00,364.52 L1344.86,365.87 L1345.71,367.25 L1346.55,368.63 L1347.39,370.03 L1348.22,371.45 L1349.05,372.88 L1349.88,374.32 L1350.70,375.78 L1351.51,377.25 L1352.32,378.74 L1353.13,380.24 L1353.94,381.75 L1354.77,383.26 L1355.59,384.79 L1356.41,386.33 L1357.23,387.89 L1358.04,389.46 L1358.85,391.04 L1359.66,392.64 L1360.46,394.25 L1361.26,395.88 L1362.06,397.52 L1362.86,399.17 L1363.66,400.83 L1364.46,402.51 L1365.27,404.20 L1366.08,405.89 L1366.98,407.57 L1367.82,407.23 L1367.27,405.40 L1366.63,403.62 L1365.96,401.87 L1365.29,400.12 L1364.60,398.40 L1363.90,396.69 L1363.19,395.00 L1362.47,393.32 L1361.75,391.66 L1361.01,390.01 L1360.27,388.37 L1359.53,386.75 L1358.78,385.15 L1358.02,383.56 L1357.25,381.98 L1356.48,380.42 L1355.69,378.88 L1354.87,377.36 L1354.05,375.86 L1353.23,374.37 L1352.40,372.89 L1351.57,371.43 L1350.73,369.98 L1349.88,368.55 L1349.03,367.13 L1348.18,365.73 L1347.32,364.34 L1346.45,362.96 L1345.58,361.60 L1344.71,360.25 L1343.82,358.92 L1342.94,357.60 L1342.05,356.30 L1341.15,355.00 L1340.25,353.73 L1339.34,352.47 L1338.43,351.22 L1337.51,349.98 L1336.59,348.76 L1335.67,347.56 L1334.73,346.37 L1333.80,345.19 L1332.85,344.03 L1331.90,342.88 L1330.95,341.74 L1329.99,340.62 L1329.03,339.52 L1328.06,338.42 L1327.09,337.35 L1326.11,336.28 L1325.12,335.23 L1324.13,334.20 L1323.14,333.18 L1322.14,332.17 L1321.13,331.18 L1320.12,330.20 L1319.11,329.24 L1318.09,328.29 L1317.06,327.35 L1316.03,326.43 L1314.99,325.52 L1313.95,324.63 L1312.90,323.75 L1311.85,322.89 L1310.79,322.04 L1309.73,321.21 L1308.66,320.38 L1307.59,319.58 L1306.51,318.79 L1305.43,318.01 L1304.34,317.24 L1303.24,316.49 L1302.15,315.76 L1301.04,315.04 L1299.93,314.33 L1298.82,313.64 L1297.70,312.96 L1296.57,312.30 L1295.44,311.65 L1294.31,311.02 L1293.17,310.40 L1292.02,309.79 L1290.87,309.20 L1289.71,308.62 L1288.55,308.06 L1287.39,307.51 L1286.21,306.98 L1285.04,306.46 L1283.86,305.96 L1282.67,305.47 L1281.48,304.99 L1280.28,304.53 L1279.08,304.08 L1277.87,303.65 L1276.66,303.23 L1275.44,302.83 L1274.22,302.44 L1272.99,302.06 L1271.76,301.70 L1270.52,301.36 L1269.28,301.03 L1268.03,300.71 L1266.78,300.41 L1265.52,300.12 L1264.26,299.84 L1262.99,299.59 L1261.72,299.34 L1260.44,299.11 L1259.16,298.90 L1257.87,298.69 L1256.57,298.51 L1255.28,298.33 L1253.97,298.18 L1252.67,298.03 L1251.35,297.90 L1250.04,297.79 L1248.71,297.69 L1247.39,297.60 L1246.05,297.53 L1244.72,297.47 L1243.37,297.43 L1242.03,297.40 L1240.67,297.39 L1239.32,297.39 L1237.96,297.41 L1236.59,297.44 L1235.22,297.48 L1233.84,297.54 L1232.46,297.61 L1231.07,297.70 L1229.68,297.80 L1228.29,297.92 L1226.88,298.05 L1225.48,298.19 L1224.07,298.35 L1222.65,298.52 L1221.23,298.71 L1219.81,298.91 L1218.38,299.13 L1216.94,299.36 L1215.50,299.61 L1214.06,299.86 L1212.61,300.14 L1211.15,300.43 L1209.69,300.73 L1208.23,301.05 L1206.76,301.38 L1205.29,301.72 L1203.81,302.08 L1202.32,302.46 L1200.83,302.84 L1199.34,303.25 L1197.84,303.66 L1196.34,304.10 L1194.83,304.54 L1193.32,305.00 L1191.80,305.48 L1190.28,305.96 L1188.75,306.47 L1187.22,306.98 L1185.68,307.52 L1184.14,308.06 L1182.59,308.62 L1181.04,309.19 L1179.48,309.78 L1177.92,310.39 L1176.35,311.00 L1174.78,311.63 L1173.21,312.28 L1171.62,312.94 L1170.04,313.61 L1168.45,314.30 L1166.85,315.00 L1165.25,315.72 L1163.64,316.45 L1162.03,317.20 L1160.42,317.96 L1158.80,318.73 L1157.17,319.52 L1155.54,320.32 L1153.91,321.14 L1152.27,321.97 L1150.62,322.81 L1148.98,323.69 L1147.34,324.60 L1145.70,325.52 L1144.06,326.46 L1142.41,327.41 L1140.76,328.38 L1139.10,329.36 L1137.44,330.36 L1135.78,331.38 L1134.11,332.41 L1132.45,333.46 L1130.78,334.53 L1129.11,335.62 L1127.44,336.74 L1125.78,337.88 L1124.16,339.12 Z" fill="#140606"/><path d="M1124.4,339.5 L1295.6,232.4 L1367.4,407.4" fill="none" stroke="#202020" stroke-width="0.9"/><rect x="1121.5" y="336.5" width="6" height="6" fill="#fff" stroke="#333" stroke-width="1"/><rect x="1364.5" y="404.5" width="6" height="6" fill="#fff" stroke="#333" stroke-width="1"/><circle cx="1124.5" cy="339.5" r="1" fill="#333"/><circle cx="1367.5" cy="407.5" r="1" fill="#333"/></svg><div class="t" style="left:534px;top:768px;font-size:10px;color:#222;">1 story</div><div class="a" style="left:277px;top:81px;width:98px;height:20px;background:#2b2b2b;"></div><div class="t" style="left:280px;top:85px;font-size:10.5px;color:#9a9a9a;">Illustration6*</div><div class="a" style="left:362px;top:88px;width:6px;height:6px;border-radius:3px;background:#b8b8b8"></div><div class="a" style="left:376px;top:81px;width:100px;height:20px;background:#4a5670;"></div><div class="t" style="left:380px;top:85px;font-size:10.5px;color:#c8ccd6;">Animation12*</div><div class="a" style="left:462px;top:88px;width:6px;height:6px;border-radius:3px;background:#d0d4dc"></div><svg style="left:1641px;top:84px;" width="16" height="12" viewBox="0 0 16 12"><path d="M2,3 L8,9 L14,3" fill="none" stroke="#b4b4b4" stroke-width="1.3"/></svg><div class="a" style="left:277px;top:1060px;width:1373px;height:18px;background:#2c2c2c;"></div><div class="a" style="left:277px;top:1060px;width:320px;height:18px;background:#333333;"></div><div class="a" style="left:898px;top:1061px;width:460px;height:16px;background:#414141;border-radius:8px"></div><div class="a" style="left:1650px;top:1060px;width:12px;height:18px;background:#333333;"></div><div class="a" style="left:282px;top:1064px;width:65px;height:10px;background:#1e1e1e;border:1px solid #4e4e4e;border-radius:1px"></div><svg style="left:283px;top:1065px;" width="63" height="8" viewBox="0 0 63 8"><path d="M0,8 L63,0 V8 Z" fill="#2a2a2a"/></svg><div class="a" style="left:311px;top:1060px;width:4px;height:18px;background:#555555;border-radius:1px"></div><div class="t" style="left:280px;top:1064px;font-size:11.5px;color:#dddddd;">40.5</div><svg style="left:362px;top:1064px;" width="12" height="10" viewBox="0 0 12 10"><path d="M1,5 H10" stroke="#999" stroke-width="1.6"/></svg><svg style="left:391px;top:1064px;" width="12" height="10" viewBox="0 0 12 10"><path d="M1,5 H10 M5.5,0.5 V9.5" stroke="#999" stroke-width="1.6"/></svg><div class="a" style="left:420px;top:1066px;width:6px;height:6px;background:#c8c8c8;"></div><div class="a" style="left:443px;top:1064px;width:65px;height:10px;background:#1e1e1e;border:1px solid #4e4e4e;border-radius:1px"></div><svg style="left:444px;top:1065px;" width="63" height="8" viewBox="0 0 63 8"><path d="M25,8 Q40,0 50,0 Q56,0 63,8 Z" fill="#2a2a2a"/></svg><div class="a" style="left:473px;top:1060px;width:4px;height:18px;background:#555555;border-radius:1px"></div><div class="t" style="left:444px;top:1064px;font-size:11.5px;color:#dddddd;">0.0</div><svg style="left:520px;top:1062px;" width="14" height="12" viewBox="0 0 14 12"><path d="M3,10 Q3,3 7,3 Q11,3 11,10" fill="none" stroke="#bbb" stroke-width="1.2"/><path d="M0.5,7.5 L3,11 L5.5,7.5 Z" fill="#bbb"/></svg><svg style="left:548px;top:1062px;" width="14" height="12" viewBox="0 0 14 12"><path d="M3,10 Q3,3 7,3 Q11,3 11,10" fill="none" stroke="#bbb" stroke-width="1.2"/><path d="M8.5,7.5 L11,11 L13.5,7.5 Z" fill="#bbb"/></svg><svg style="left:576px;top:1062px;" width="14" height="14" viewBox="0 0 14 14"><circle cx="7" cy="7" r="5.5" fill="none" stroke="#bbb" stroke-width="1.1" stroke-dasharray="28 4"/><circle cx="7" cy="7" r="1.8" fill="#ddd"/><path d="M7,7 V2" stroke="#bbb" stroke-width="1"/></svg><div class="a" style="left:1651px;top:394px;width:10px;height:424px;background:#444444;border-radius:5px"></div><div class="a" style="left:1662px;top:48px;width:258px;height:1032px;background:#222222;"></div><div class="a" style="left:1905px;top:95px;width:15px;height:985px;background:#222222;"></div><svg style="left:1666px;top:51px;" width="8" height="14" viewBox="0 0 8 14"><path d="M1.5,1 V13 M4,1 V13 M6.5,1 V13" stroke="#7a7a7a" stroke-width="1"/></svg><svg style="left:1867px;top:52px;" width="8" height="12" viewBox="0 0 8 12"><path d="M2,2.5 L6,6 L2,9.5" fill="none" stroke="#8a8a8a" stroke-width="1.1"/></svg><svg style="left:1893px;top:52px;" width="14" height="12" viewBox="0 0 14 12"><path d="M2,2.5 L6,6 L2,9.5 M6.5,2.5 L10.5,6 L6.5,9.5" fill="none" stroke="#8a8a8a" stroke-width="1.1"/></svg><svg style="left:1907px;top:52px;" width="14" height="12" viewBox="0 0 14 12"><path d="M5.5,2.5 L1.5,6 L5.5,9.5 M10,2.5 L6,6 L10,9.5" fill="none" stroke="#8a8a8a" stroke-width="1.1"/></svg><svg style="left:1672px;top:77px;" width="10" height="9" viewBox="0 0 10 9"><path d="M0,0.5 H7 M0,3 H7 M0,5.5 H7" stroke="#8c8c8c" stroke-width="0.9"/></svg><div class="a" style="left:1687px;top:76px;width:93px;height:14px;background:#333333;"></div><div class="a" style="left:1781px;top:76px;width:29px;height:14px;background:#333333;"></div><div class="a" style="left:1811px;top:76px;width:29px;height:14px;background:#333333;"></div><svg style="left:1693px;top:77px;" width="20" height="18" viewBox="0 0 20 18"><path d="M1.5,5 L8,1.5 L14.5,5 L8,8.5 Z M1.5,8.5 L8,12 M1.5,12 L8,15.5" fill="none" stroke="#b4b4b4" stroke-width="1.1"/><circle cx="12.5" cy="10.5" r="1.4" fill="none" stroke="#b4b4b4" stroke-width="1"/><circle cx="16.5" cy="10.5" r="1.4" fill="#b4b4b4"/><path d="M11,13.5 L14,16.5 M14,13.5 L11,16.5" stroke="#b4b4b4" stroke-width="1"/><rect x="15" y="13.5" width="3" height="3" fill="none" stroke="#b4b4b4" stroke-width="1"/></svg><div class="t" style="left:1715px;top:80px;font-size:9.4px;color:#c8c8c8;">Layer Property</div><svg style="left:1789px;top:78px;" width="14" height="12" viewBox="0 0 14 12"><defs><clipPath id="tabc"><rect x="0" y="0" width="14" height="12"/></clipPath></defs><g clip-path="url(#tabc)"><circle cx="7.5" cy="6.5" r="5.3" fill="none" stroke="#777" stroke-width="1.1"/><path d="M1,12 L3.5,6.5 L8.5,12 Z" fill="#777"/></g></svg><svg style="left:1818px;top:79px;" width="16" height="11" viewBox="0 0 16 11"><rect x="3" y="1" width="11" height="11" rx="1.5" fill="#555" stroke="#777" stroke-width="1.1"/><path d="M1,12 V4 Q1,2.5 2.5,2.5" fill="none" stroke="#777" stroke-width="1"/></svg><div class="a" style="left:1664px;top:90px;width:241px;height:5px;background:#333333;"></div><div class="a" style="left:1664px;top:95px;width:228px;height:204px;background:#262626;"></div><div class="a" style="left:1892px;top:95px;width:13px;height:204px;background:#2b2b2b;"></div><div class="a" style="left:1669px;top:104px;width:4px;height:1px;background:#555555;"></div><div class="a" style="left:1703px;top:104px;width:185px;height:1px;background:#555555;"></div><div class="t" style="left:1674px;top:99px;font-size:10.4px;color:#d8d8d8;">Effect</div><div class="a" style="left:1787px;top:112px;width:102px;height:24px;background:#3a3a3a;border:1px solid #4e4e4e;border-radius:3px"></div><svg style="left:1787px;top:112px;" width="102" height="24" viewBox="0 0 102 24"><defs><clipPath id="lens"><circle cx="34.5" cy="10.5" r="5.3"/></clipPath></defs><circle cx="10.8" cy="11.8" r="6.8" fill="none" stroke="#c8c8c8" stroke-width="1.2"/><circle cx="31.3" cy="14.4" r="5.3" fill="#777"/><circle cx="31.3" cy="14.4" r="5.3" fill="#c8c8c8" clip-path="url(#lens)"/><circle cx="34.5" cy="10.5" r="5.3" fill="none" stroke="#c8c8c8" stroke-width="1.1"/><rect x="49.5" y="6.5" width="2" height="2" fill="#c8c8c8"/><rect x="49.5" y="11.3" width="2" height="2" fill="#c8c8c8"/><rect x="49.5" y="16.5" width="2" height="2" fill="#c8c8c8"/><rect x="54.5" y="6.5" width="2" height="2" fill="#c8c8c8"/><rect x="54.5" y="11.3" width="2" height="2" fill="#c8c8c8"/><rect x="54.5" y="16.5" width="2" height="2" fill="#c8c8c8"/><rect x="59.3" y="6.5" width="2" height="2" fill="#c8c8c8"/><rect x="59.3" y="11.3" width="2" height="2" fill="#c8c8c8"/><rect x="59.3" y="16.5" width="2" height="2" fill="#c8c8c8"/><rect x="52.2" y="9.2" width="1.6" height="1.6" fill="#c8c8c8"/><rect x="52.2" y="14" width="1.6" height="1.6" fill="#c8c8c8"/><rect x="57.2" y="9.2" width="1.6" height="1.6" fill="#c8c8c8"/><rect x="57.2" y="14" width="1.6" height="1.6" fill="#c8c8c8"/><rect x="73.2" y="8.5" width="10.5" height="10" rx="1.5" fill="none" stroke="#c8c8c8" stroke-width="1.1"/><rect x="70.2" y="5.3" width="10.3" height="10.1" rx="1.5" fill="#7a7a7a" stroke="#c8c8c8" stroke-width="1.1"/><path d="M93,10 L96.5,13.5 L100,10" fill="none" stroke="#c8c8c8" stroke-width="1.1"/></svg><div class="a" style="left:1669px;top:145px;width:4px;height:1px;background:#555555;"></div><div class="a" style="left:1752px;top:145px;width:136px;height:1px;background:#555555;"></div><div class="t" style="left:1674px;top:140px;font-size:10.35px;color:#d8d8d8;">Expression color</div><div class="a" style="left:1681px;top:156px;width:156px;height:24px;background:#3a3a3a;border:1px solid #4a4a4a;border-radius:2px"></div><svg style="left:1729px;top:160px;" width="18" height="16" viewBox="0 0 18 16"><circle cx="9" cy="5" r="4.3" fill="#e05050"/><circle cx="5.5" cy="10.5" r="4.3" fill="#50c850"/><circle cx="12.5" cy="10.5" r="4.3" fill="#4a90e0"/><circle cx="9" cy="8.7" r="1.6" fill="#f0d0f0"/></svg><div class="t" style="left:1749px;top:162px;font-size:10.2px;color:#d8d8d8;">Color</div><svg style="left:1821px;top:162px;" width="14" height="10" viewBox="0 0 14 10"><path d="M2,2 L7,7 L12,2" fill="none" stroke="#c0c0c0" stroke-width="1.2"/></svg><div class="a" style="left:1664px;top:299px;width:241px;height:10px;background:#222222;"></div><svg style="left:1672px;top:311px;" width="10" height="9" viewBox="0 0 10 9"><path d="M0,0.5 H7 M0,3 H7 M0,5.5 H7" stroke="#8c8c8c" stroke-width="0.9"/></svg><div class="a" style="left:1687px;top:309px;width:54px;height:14px;background:#333333;"></div><div class="a" style="left:1742px;top:309px;width:83px;height:14px;background:#333333;"></div><div class="a" style="left:1826px;top:309px;width:62px;height:14px;background:#333333;"></div><svg style="left:1692px;top:310px;" width="18" height="18" viewBox="0 0 18 18"><path d="M2,6 L9,2 L16,6 L9,10 Z M2,9.5 L9,13.5 L16,9.5 M2,13 L9,17 L16,13" fill="none" stroke="#b4b4b4" stroke-width="1.2"/></svg><div class="t" style="left:1716px;top:313px;font-size:10.2px;color:#c8c8c8;">Layer</div><svg style="left:1749px;top:311px;" width="18" height="14" viewBox="0 0 18 14"><rect x="1.5" y="5" width="14" height="10" fill="none" stroke="#666" stroke-width="1.2"/><path d="M1,4 L15,1 M4,8 L7,11 M9,9 h4" stroke="#666" stroke-width="1.2"/></svg><div class="t" style="left:1771px;top:313px;font-size:10.2px;color:#666666;">Auto Action</div><svg style="left:1831px;top:311px;" width="18" height="14" viewBox="0 0 18 14"><path d="M6,2 L2,5 L6,8 M2,5 H12 Q16,5 16,9 Q16,13 12,13 H4" fill="none" stroke="#666" stroke-width="1.2"/></svg><div class="t" style="left:1855px;top:313px;font-size:10.2px;color:#666666;width:33px;overflow:hidden">History</div><div class="a" style="left:1664px;top:323px;width:241px;height:84px;background:#323232;"></div><div class="a" style="left:1665px;top:328px;width:39px;height:23px;background:#3a3a3a;border:1px solid #4a4a4a;border-radius:2px"></div><svg style="left:1665px;top:328px;" width="39" height="23" viewBox="0 0 39 23"><rect x="4" y="5" width="15" height="13" rx="3" fill="none" stroke="#aaa" stroke-width="1.3"/><path d="M26,9 L30,13 L34,9" fill="none" stroke="#aaa" stroke-width="1.1"/></svg><div class="a" style="left:1707px;top:328px;width:77px;height:23px;background:#3a3a3a;border:1px solid #4a4a4a;border-radius:2px"></div><div class="t" style="left:1722px;top:332px;font-size:11.2px;color:#d0d0d0;letter-spacing:-0.5px">Normal</div><svg style="left:1768px;top:334px;" width="14" height="10" viewBox="0 0 14 10"><path d="M2,2 L7,7 L12,2" fill="none" stroke="#bbb" stroke-width="1.1"/></svg><svg style="left:1790px;top:333px;" width="76" height="10" viewBox="0 0 76 10"><defs><pattern id="chk" width="8" height="8" patternUnits="userSpaceOnUse"><rect width="8" height="8" fill="#f0f0f0"/><rect width="4" height="4" fill="#b8b8b8"/><rect x="4" y="4" width="4" height="4" fill="#b8b8b8"/></pattern><linearGradient id="fade" x1="0" x2="1"><stop offset="0" stop-color="#fff" stop-opacity="0"/><stop offset="1" stop-color="#ccc" stop-opacity="0.9"/></linearGradient></defs><rect width="75" height="9" fill="url(#chk)"/><rect width="75" height="9" fill="url(#fade)"/></svg><div class="a" style="left:1866px;top:328px;width:3px;height:20px;background:#555555;border-radius:1px"></div><div class="t" style="left:1873px;top:333px;font-size:10.8px;color:#d8d8d8;">100</div><svg style="left:1893px;top:330px;" width="10" height="18" viewBox="0 0 10 18"><path d="M1.5,6 L5,2.5 L8.5,6 M1.5,12 L5,15.5 L8.5,12" fill="none" stroke="#b4b4b4" stroke-width="1"/></svg><svg style="left:1672px;top:356px;" width="20" height="18" viewBox="0 0 20 18"><rect x="1" y="6" width="11" height="10" rx="2" fill="#666"/><rect x="4" y="3" width="11" height="10" rx="2" fill="#b8b8b8"/><rect x="7" y="1" width="11" height="10" rx="2" fill="none" stroke="#b8b8b8" stroke-width="1.2" stroke-dasharray="2 1.5"/></svg><svg style="left:1699px;top:356px;" width="20" height="18" viewBox="0 0 20 18"><path d="M10,4 L8,17 H12 Z" fill="#b8b8b8"/><path d="M1,4 H19 M3,2 L17,8 M17,2 L3,8" stroke="#b8b8b8" stroke-width="1"/><circle cx="10" cy="4" r="2" fill="#b8b8b8"/></svg><svg style="left:1727px;top:356px;" width="20" height="18" viewBox="0 0 20 18"><path d="M3,1 H9 V10 L6,14 L3,10 Z" fill="none" stroke="#b8b8b8" stroke-width="1.3"/><path d="M4,3 L6,8 L8,3" fill="#b8b8b8"/><path d="M8,16 Q12,13 16,15" fill="none" stroke="#b8b8b8" stroke-width="1.2"/></svg><svg style="left:1756px;top:356px;" width="18" height="18" viewBox="0 0 18 18"><path d="M5,8 V5 Q5,1 9,1 Q13,1 13,5 V8" fill="none" stroke="#b8b8b8" stroke-width="1.6"/><rect x="3" y="8" width="12" height="9" rx="1.5" fill="#b8b8b8"/></svg><svg style="left:1783px;top:356px;" width="20" height="18" viewBox="0 0 20 18"><rect x="6" y="1" width="4" height="4" fill="#b8b8b8"/><rect x="14" y="1" width="4" height="4" fill="#b8b8b8"/><rect x="10" y="5" width="4" height="4" fill="#666"/><rect x="14" y="9" width="4" height="4" fill="#666"/><rect x="14" y="13" width="4" height="4" fill="#b8b8b8"/><path d="M3,10 V8 Q3,6 5,6 Q7,6 7,8 V10" fill="none" stroke="#b8b8b8" stroke-width="1.2"/><rect x="2" y="10" width="7" height="7" rx="1" fill="#b8b8b8"/></svg><div class="a" style="left:1807px;top:353px;width:31px;height:24px;background:#2e2e2e;border-radius:2px"></div><svg style="left:1807px;top:353px;" width="31" height="24" viewBox="0 0 31 24"><circle cx="9" cy="12" r="5.5" fill="none" stroke="#5a5a5a" stroke-width="4"/><rect x="2" y="5" width="12" height="10" rx="2" fill="#5a5a5a"/><path d="M11,15 L16,20 M16,15 L11,20 M16,10 L20,14 L25,8" fill="none" stroke="#5a5a5a" stroke-width="1.2"/></svg><div class="a" style="left:1841px;top:353px;width:30px;height:24px;background:#2e2e2e;border-radius:2px"></div><svg style="left:1841px;top:353px;" width="30" height="24" viewBox="0 0 30 24"><path d="M3,4 H14 L3,16 Z" fill="#5a5a5a"/><path d="M11,15 L16,20 M16,15 L11,20 M16,10 L20,14 L25,8" fill="none" stroke="#5a5a5a" stroke-width="1.2"/></svg><div class="a" style="left:1873px;top:353px;width:31px;height:24px;background:#3a3a3a;border:1px solid #4a4a4a;border-radius:2px"></div><svg style="left:1873px;top:353px;" width="31" height="24" viewBox="0 0 31 24"><rect x="8" y="9" width="9" height="10" fill="#fff"/><rect x="3" y="4" width="9" height="9" fill="#3a8ef0"/><path d="M20,10 L24,14 L28,10" fill="none" stroke="#bbb" stroke-width="1.1"/></svg><svg style="left:1685px;top:382px;" width="22" height="22" viewBox="0 0 22 22"><rect x="2" y="2" width="14" height="14" rx="2" fill="none" stroke="#b8b8b8" stroke-width="1.2"/><path d="M2,12 L6,16" stroke="#b8b8b8" stroke-width="1"/><circle cx="16" cy="16" r="4.3" fill="#323232" stroke="#b8b8b8" stroke-width="1.1"/><path d="M13.4,16 H18.6 M16,13.4 V18.6" stroke="#b8b8b8" stroke-width="1.2"/></svg><svg style="left:1713px;top:382px;" width="22" height="22" viewBox="0 0 22 22"><rect x="2" y="2" width="14" height="14" rx="2" fill="none" stroke="#b8b8b8" stroke-width="1.2"/><circle cx="9" cy="9" r="4" fill="none" stroke="#b8b8b8" stroke-width="1.2"/><circle cx="16" cy="16" r="4.3" fill="#323232" stroke="#b8b8b8" stroke-width="1.1"/><path d="M13.4,16 H18.6 M16,13.4 V18.6" stroke="#b8b8b8" stroke-width="1.2"/></svg><svg style="left:1740px;top:382px;" width="22" height="22" viewBox="0 0 22 22"><path d="M1,3 H7 L9,5 H16 V15 H1 Z" fill="#b8b8b8"/><circle cx="16" cy="16" r="4.3" fill="#323232" stroke="#b8b8b8" stroke-width="1.1"/><path d="M13.4,16 H18.6 M16,13.4 V18.6" stroke="#b8b8b8" stroke-width="1.2"/></svg><svg style="left:1768px;top:382px;" width="22" height="22" viewBox="0 0 22 22"><rect x="8" y="1" width="11" height="10" rx="1.5" fill="none" stroke="#5a5a5a" stroke-width="1.2"/><rect x="12" y="4" width="4" height="4" fill="#5a5a5a"/><rect x="1" y="8" width="11" height="10" rx="1.5" fill="none" stroke="#5a5a5a" stroke-width="1.2"/><path d="M4,14 L9,14 L7,12" fill="none" stroke="#5a5a5a" stroke-width="1"/></svg><svg style="left:1796px;top:382px;" width="22" height="22" viewBox="0 0 22 22"><rect x="8" y="1" width="11" height="10" rx="1.5" fill="none" stroke="#5a5a5a" stroke-width="1.2"/><rect x="1" y="8" width="11" height="10" rx="1.5" fill="none" stroke="#5a5a5a" stroke-width="1.2"/><path d="M5,15 L9,11 M5,15 V12 M5,15 H8" fill="none" stroke="#5a5a5a" stroke-width="1"/></svg><svg style="left:1824px;top:382px;" width="22" height="22" viewBox="0 0 22 22"><rect x="2" y="2" width="15" height="15" rx="2.5" fill="#b8b8b8"/><circle cx="9.5" cy="9.5" r="4.5" fill="#323232"/></svg><svg style="left:1852px;top:382px;" width="22" height="22" viewBox="0 0 22 22"><rect x="1" y="2" width="13" height="15" rx="1.5" fill="none" stroke="#5a5a5a" stroke-width="1.2"/><rect x="9" y="7" width="12" height="11" rx="2" fill="#5a5a5a"/><circle cx="15" cy="12.5" r="2.5" fill="#323232"/><path d="M3,9 H8 M4,7 L2,9 L4,11" fill="none" stroke="#5a5a5a" stroke-width="1.1"/></svg><svg style="left:1881px;top:382px;" width="20" height="22" viewBox="0 0 20 22"><path d="M2,4 H17 M7,4 V2 H12 V4 M4,4 L5,17 H14 L15,4 M7.5,6.5 V15 M9.5,6.5 V15 M11.5,6.5 V15" fill="none" stroke="#b8b8b8" stroke-width="1.2"/></svg><div class="a" style="left:1662px;top:407px;width:230px;height:673px;background:#242424;"></div><div class="a" style="left:1892px;top:407px;width:13px;height:668px;background:#2b2b2b;"></div><div class="a" style="left:1664px;top:408px;width:228px;height:97px;background:#222222;"></div><div class="a" style="left:1689px;top:408px;width:1px;height:97px;background:#111111;"></div><div class="a" style="left:1712px;top:408px;width:1px;height:97px;background:#111111;"></div><div class="a" style="left:1713px;top:439px;width:179px;height:32px;background:#434d63;"></div><div class="a" style="left:1713px;top:439px;width:14px;height:2px;background:#222222;"></div><div class="a" style="left:1664px;top:438px;width:228px;height:1px;background:#111111;"></div><div class="a" style="left:1664px;top:471px;width:228px;height:1px;background:#111111;"></div><div class="a" style="left:1664px;top:504px;width:228px;height:1px;background:#111111;"></div><svg style="left:1668px;top:417px;" width="16" height="10" viewBox="0 0 16 10"><path d="M1,6 Q8,-1 15,6" fill="none" stroke="#c8c8c8" stroke-width="1.6"/><path d="M2,6.5 Q8,10 14,6.5" fill="none" stroke="#c8c8c8" stroke-width="0.8"/><circle cx="8" cy="6" r="2.8" fill="#c8c8c8"/></svg><svg style="left:1668px;top:449px;" width="16" height="10" viewBox="0 0 16 10"><path d="M1,6 Q8,-1 15,6" fill="none" stroke="#c8c8c8" stroke-width="1.6"/><path d="M2,6.5 Q8,10 14,6.5" fill="none" stroke="#c8c8c8" stroke-width="0.8"/><circle cx="8" cy="6" r="2.8" fill="#c8c8c8"/></svg><svg style="left:1668px;top:482px;" width="16" height="10" viewBox="0 0 16 10"><path d="M1,6 Q8,-1 15,6" fill="none" stroke="#c8c8c8" stroke-width="1.6"/><path d="M2,6.5 Q8,10 14,6.5" fill="none" stroke="#c8c8c8" stroke-width="0.8"/><circle cx="8" cy="6" r="2.8" fill="#c8c8c8"/></svg><div class="a" style="left:1696px;top:418px;width:10px;height:10px;background:#1e1e1e;border:1px solid #262626;border-radius:1px"></div><div class="a" style="left:1696px;top:482px;width:10px;height:10px;background:#1e1e1e;border:1px solid #262626;border-radius:1px"></div><svg style="left:1690px;top:445px;" width="18" height="18" viewBox="0 0 18 18"><path d="M4,14 L13,4 L16,7 L7,16" fill="none" stroke="#c8c8c8" stroke-width="1.4"/><path d="M2,16.5 H15" stroke="#c8c8c8" stroke-width="1.2"/></svg><svg style="left:1717px;top:419px;" width="14" height="9" viewBox="0 0 14 9"><path d="M2,2 L7,7 L12,2" fill="none" stroke="#aaa" stroke-width="1.2"/></svg><svg style="left:1740px;top:415px;" width="18" height="16" viewBox="0 0 18 16"><rect x="1" y="7" width="15" height="8" rx="1" fill="#aaa"/><rect x="3" y="2" width="14" height="10" rx="1.5" fill="#222" stroke="#aaa" stroke-width="1.3"/><path d="M5,5 H15 M6,8 h2 M10,8 h2" stroke="#aaa" stroke-width="1"/></svg><div class="t" style="left:1767px;top:412px;font-size:10.1px;color:#d0d0d0;">100 % Normal</div><div class="t" style="left:1767px;top:424px;font-size:10.1px;color:#d0d0d0;">Animation folder : 1</div><div class="a" style="left:1733px;top:440px;width:38px;height:30px;background:#ffffff;"></div><svg style="left:1735px;top:442px;" width="34" height="26" viewBox="0 0 34 26"><defs><pattern id="chk2" width="8" height="8" patternUnits="userSpaceOnUse"><rect width="8" height="8" fill="#fff"/><rect width="4" height="4" fill="#cfcfcf"/><rect x="4" y="4" width="4" height="4" fill="#cfcfcf"/></pattern></defs><rect width="34" height="26" fill="url(#chk2)" stroke="#111" stroke-width="2"/></svg><div class="t" style="left:1778px;top:442px;font-size:10.1px;color:#d4d8e0;">100 % Normal</div><div class="t" style="left:1778px;top:455px;font-size:10.1px;color:#d4d8e0;">1</div><div class="a" style="left:1720px;top:476px;width:32px;height:25px;background:#ffffff;"></div><div class="a" style="left:1766px;top:476px;width:16px;height:16px;background:#ffffff;"></div><svg style="left:1766px;top:476px;" width="16" height="16" viewBox="0 0 16 16"><path d="M4,3 H10 L12,5 V13 H6 L4,11 Z" fill="none" stroke="#111" stroke-width="1.1"/></svg><div class="t" style="left:1786px;top:489px;font-size:10.1px;color:#d0d0d0;">Paper</div><div class="a" style="left:0px;top:1078px;width:1920px;height:2px;background:#0e0e0e;"></div></body></html>
